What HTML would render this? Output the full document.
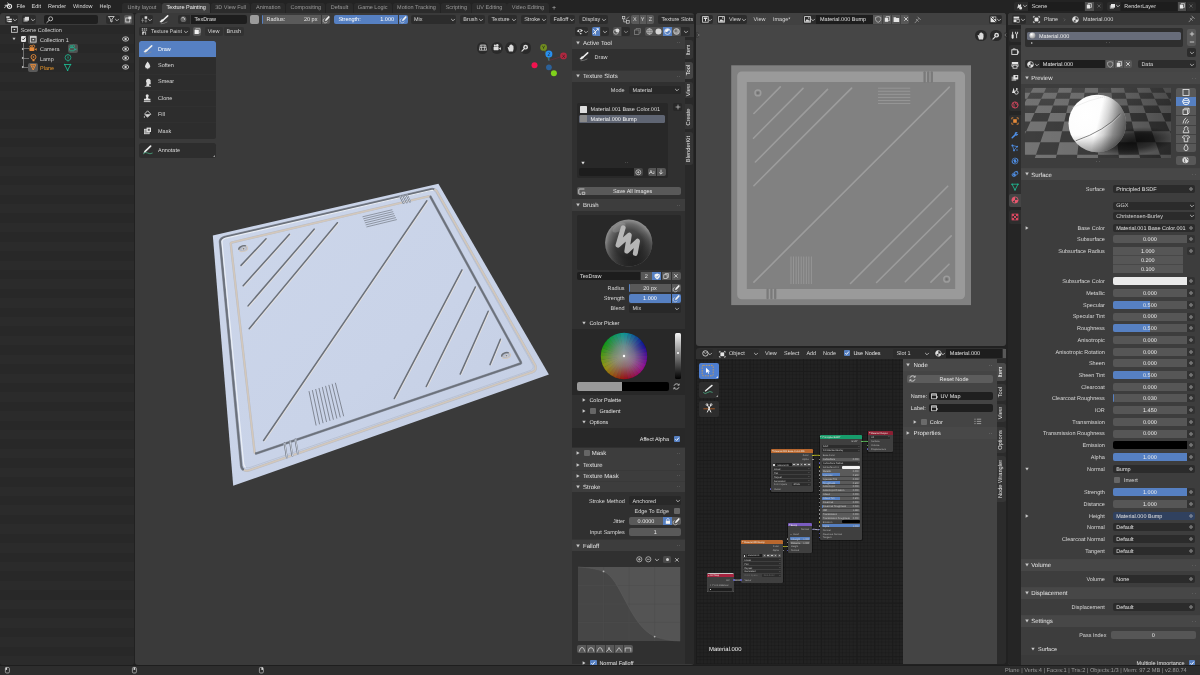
<!DOCTYPE html>
<html><head><meta charset="utf-8"><title>Blender</title>
<style>
html,body{margin:0;padding:0;}
body{width:1200px;height:675px;overflow:hidden;background:#212121;position:relative;font-family:"Liberation Sans",sans-serif;font-size:5.5px;color:#d4d4d4;}
div,svg{position:absolute;box-sizing:border-box;}
svg{overflow:visible;}
.t{white-space:nowrap;text-rendering:geometricPrecision;}
.area{overflow:hidden;}
.rot{transform:rotate(-90deg);transform-origin:0 0;white-space:nowrap;}
</style></head>
<body>
<div id="root" style="left:0;top:0;width:1200px;height:675px;will-change:transform;">
<!-- topbar -->
<div style="left:0px;top:0px;width:1200px;height:13px;background:#232323;"></div>
<svg style="left:4px;top:2.4px;" width="9" height="8" viewBox="0 0 9 8"><path d="M0.5 5.6 L4.4 2.5 M1.1 3.3 H4.6 M3.5 0.9 L5.4 2.5" fill="none" stroke="#e4e4e4" stroke-width="0.8" stroke-linecap="round"/>
    <circle cx="5.5" cy="4.3" r="2.1" fill="none" stroke="#e4e4e4" stroke-width="1.1"/><circle cx="5.5" cy="4.3" r="0.7" fill="#e4e4e4"/></svg>
<div class="t" style="top:3px;line-height:8px;font-size:5.5px;color:#dcdcdc;left:16.5px;">File</div>
<div class="t" style="top:3px;line-height:8px;font-size:5.5px;color:#dcdcdc;left:31.5px;">Edit</div>
<div class="t" style="top:3px;line-height:8px;font-size:5.5px;color:#dcdcdc;left:48px;">Render</div>
<div class="t" style="top:3px;line-height:8px;font-size:5.5px;color:#dcdcdc;left:73px;">Window</div>
<div class="t" style="top:3px;line-height:8px;font-size:5.5px;color:#dcdcdc;left:99.5px;">Help</div>
<div style="left:122.4px;top:3px;width:39.2px;height:10px;background:#2b2b2b;border-radius:2.5px 2.5px 0 0;"></div>
<div class="t" style="top:4px;line-height:8px;font-size:5.5px;color:#9a9a9a;left:122.4px;width:39.2px;text-align:center;">Unity layout</div>
<div style="left:162.4px;top:3px;width:47.6px;height:10px;background:#404040;border-radius:2.5px 2.5px 0 0;"></div>
<div class="t" style="top:4px;line-height:8px;font-size:5.5px;color:#f2f2f2;left:162.4px;width:47.6px;text-align:center;">Texture Painting</div>
<div style="left:211px;top:3px;width:39.4px;height:10px;background:#2b2b2b;border-radius:2.5px 2.5px 0 0;"></div>
<div class="t" style="top:4px;line-height:8px;font-size:5.5px;color:#9a9a9a;left:211px;width:39.4px;text-align:center;">3D View Full</div>
<div style="left:251.2px;top:3px;width:34.2px;height:10px;background:#2b2b2b;border-radius:2.5px 2.5px 0 0;"></div>
<div class="t" style="top:4px;line-height:8px;font-size:5.5px;color:#9a9a9a;left:251.2px;width:34.2px;text-align:center;">Animation</div>
<div style="left:286.2px;top:3px;width:39.2px;height:10px;background:#2b2b2b;border-radius:2.5px 2.5px 0 0;"></div>
<div class="t" style="top:4px;line-height:8px;font-size:5.5px;color:#9a9a9a;left:286.2px;width:39.2px;text-align:center;">Compositing</div>
<div style="left:326.2px;top:3px;width:26.6px;height:10px;background:#2b2b2b;border-radius:2.5px 2.5px 0 0;"></div>
<div class="t" style="top:4px;line-height:8px;font-size:5.5px;color:#9a9a9a;left:326.2px;width:26.6px;text-align:center;">Default</div>
<div style="left:353.6px;top:3px;width:38.2px;height:10px;background:#2b2b2b;border-radius:2.5px 2.5px 0 0;"></div>
<div class="t" style="top:4px;line-height:8px;font-size:5.5px;color:#9a9a9a;left:353.6px;width:38.2px;text-align:center;">Game Logic</div>
<div style="left:392.6px;top:3px;width:47.8px;height:10px;background:#2b2b2b;border-radius:2.5px 2.5px 0 0;"></div>
<div class="t" style="top:4px;line-height:8px;font-size:5.5px;color:#9a9a9a;left:392.6px;width:47.8px;text-align:center;">Motion Tracking</div>
<div style="left:441.2px;top:3px;width:30.2px;height:10px;background:#2b2b2b;border-radius:2.5px 2.5px 0 0;"></div>
<div class="t" style="top:4px;line-height:8px;font-size:5.5px;color:#9a9a9a;left:441.2px;width:30.2px;text-align:center;">Scripting</div>
<div style="left:472.2px;top:3px;width:34.4px;height:10px;background:#2b2b2b;border-radius:2.5px 2.5px 0 0;"></div>
<div class="t" style="top:4px;line-height:8px;font-size:5.5px;color:#9a9a9a;left:472.2px;width:34.4px;text-align:center;">UV Editing</div>
<div style="left:507.4px;top:3px;width:41.2px;height:10px;background:#2b2b2b;border-radius:2.5px 2.5px 0 0;"></div>
<div class="t" style="top:4px;line-height:8px;font-size:5.5px;color:#9a9a9a;left:507.4px;width:41.2px;text-align:center;">Video Editing</div>
<div class="t" style="top:5px;line-height:8px;font-size:7px;color:#b4b4b4;left:550px;width:8px;text-align:center;">+</div>
<div style="left:1014.4px;top:2px;width:13.4px;height:8.6px;background:#2c2c2c;border-radius:2px 0 0 2px;"></div><svg style="left:1022px;top:3.4px;" width="6" height="6" viewBox="0 0 6 6"><path d="M1.4 2.2 L3 3.8 L4.6 2.2" fill="none" stroke="#c8c8c8" stroke-width="0.8" stroke-linecap="round" stroke-linejoin="round"/></svg><div style="left:1028.4px;top:2px;width:56px;height:8.6px;background:#1d1d1d;"></div><div class="t" style="top:3px;line-height:8px;font-size:5.5px;color:#dcdcdc;left:1031.6px;">Scene</div><div style="left:1085px;top:2px;width:8.8px;height:8.6px;background:#505050;"></div><div style="left:1094.4px;top:2px;width:8.6px;height:8.6px;background:#2c2c2c;border-radius:0 2px 2px 0;"></div><svg style="left:1086.4px;top:3.4px;" width="6" height="6" viewBox="0 0 6 6"><path d="M2.2 1.6 V0.6 H5.4 V4.4 H4.2" fill="none" stroke="#e6e6e6" stroke-width="0.7"/><rect x="0.8" y="1.7" width="3.3" height="3.8" fill="#e6e6e6"/></svg><svg style="left:1095.8px;top:3.4px;" width="6" height="6" viewBox="0 0 6 6"><path d="M1.5 1.5 L4.5 4.5 M4.5 1.5 L1.5 4.5" stroke="#6a6a6a" stroke-width="0.8"/></svg>
<div style="left:1107px;top:2px;width:13.4px;height:8.6px;background:#2c2c2c;border-radius:2px 0 0 2px;"></div><svg style="left:1114.6px;top:3.4px;" width="6" height="6" viewBox="0 0 6 6"><path d="M1.4 2.2 L3 3.8 L4.6 2.2" fill="none" stroke="#c8c8c8" stroke-width="0.8" stroke-linecap="round" stroke-linejoin="round"/></svg><div style="left:1121px;top:2px;width:56px;height:8.6px;background:#1d1d1d;"></div><div class="t" style="top:3px;line-height:8px;font-size:5.5px;color:#dcdcdc;left:1124.2px;">RenderLayer</div><div style="left:1177.6px;top:2px;width:8.8px;height:8.6px;background:#505050;"></div><div style="left:1187px;top:2px;width:8.6px;height:8.6px;background:#2c2c2c;border-radius:0 2px 2px 0;"></div><svg style="left:1179px;top:3.4px;" width="6" height="6" viewBox="0 0 6 6"><path d="M2.2 1.6 V0.6 H5.4 V4.4 H4.2" fill="none" stroke="#e6e6e6" stroke-width="0.7"/><rect x="0.8" y="1.7" width="3.3" height="3.8" fill="#e6e6e6"/></svg><svg style="left:1188.4px;top:3.4px;" width="6" height="6" viewBox="0 0 6 6"><path d="M1.5 1.5 L4.5 4.5 M4.5 1.5 L1.5 4.5" stroke="#6a6a6a" stroke-width="0.8"/></svg>
<svg style="left:1016px;top:3.2px;" width="8" height="7" viewBox="0 0 8 7"><path d="M1.2 5.5 L2.4 1 L3.8 2.2 L5 0.8 L5.2 3.6 Z" fill="#e0e0e0"/><circle cx="4.6" cy="5" r="1.5" fill="#e0e0e0"/></svg>
<svg style="left:1109px;top:3.2px;" width="8" height="7" viewBox="0 0 8 7"><rect x="0.8" y="2.2" width="4" height="3.6" fill="#9a9a9a"/><rect x="2" y="1" width="4" height="3.6" fill="#e6e6e6"/></svg>
<!-- outliner -->
<div class="area" style="left:0px;top:13px;width:133.6px;height:651.5px;border-radius:3px;"><div style="left:0px;top:0px;width:133.6px;height:651.5px;background:#282828;"></div><div style="left:0px;top:21.42px;width:133.6px;height:9.42px;background:#2b2b2b;"></div><div style="left:0px;top:40.26px;width:133.6px;height:9.42px;background:#2b2b2b;"></div><div style="left:0px;top:59.1px;width:133.6px;height:9.42px;background:#2b2b2b;"></div><div style="left:0px;top:77.94px;width:133.6px;height:9.42px;background:#2b2b2b;"></div><div style="left:0px;top:96.78px;width:133.6px;height:9.42px;background:#2b2b2b;"></div><div style="left:0px;top:115.62px;width:133.6px;height:9.42px;background:#2b2b2b;"></div><div style="left:0px;top:134.46px;width:133.6px;height:9.42px;background:#2b2b2b;"></div><div style="left:0px;top:153.3px;width:133.6px;height:9.42px;background:#2b2b2b;"></div><div style="left:0px;top:172.14px;width:133.6px;height:9.42px;background:#2b2b2b;"></div><div style="left:0px;top:190.98px;width:133.6px;height:9.42px;background:#2b2b2b;"></div><div style="left:0px;top:209.82px;width:133.6px;height:9.42px;background:#2b2b2b;"></div><div style="left:0px;top:228.66px;width:133.6px;height:9.42px;background:#2b2b2b;"></div><div style="left:0px;top:247.5px;width:133.6px;height:9.42px;background:#2b2b2b;"></div><div style="left:0px;top:266.34px;width:133.6px;height:9.42px;background:#2b2b2b;"></div><div style="left:0px;top:285.18px;width:133.6px;height:9.42px;background:#2b2b2b;"></div><div style="left:0px;top:304.02px;width:133.6px;height:9.42px;background:#2b2b2b;"></div><div style="left:0px;top:322.86px;width:133.6px;height:9.42px;background:#2b2b2b;"></div><div style="left:0px;top:341.7px;width:133.6px;height:9.42px;background:#2b2b2b;"></div><div style="left:0px;top:360.54px;width:133.6px;height:9.42px;background:#2b2b2b;"></div><div style="left:0px;top:379.38px;width:133.6px;height:9.42px;background:#2b2b2b;"></div><div style="left:0px;top:398.22px;width:133.6px;height:9.42px;background:#2b2b2b;"></div><div style="left:0px;top:417.06px;width:133.6px;height:9.42px;background:#2b2b2b;"></div><div style="left:0px;top:435.9px;width:133.6px;height:9.42px;background:#2b2b2b;"></div><div style="left:0px;top:454.74px;width:133.6px;height:9.42px;background:#2b2b2b;"></div><div style="left:0px;top:473.58px;width:133.6px;height:9.42px;background:#2b2b2b;"></div><div style="left:0px;top:492.42px;width:133.6px;height:9.42px;background:#2b2b2b;"></div><div style="left:0px;top:511.26px;width:133.6px;height:9.42px;background:#2b2b2b;"></div><div style="left:0px;top:530.1px;width:133.6px;height:9.42px;background:#2b2b2b;"></div><div style="left:0px;top:548.94px;width:133.6px;height:9.42px;background:#2b2b2b;"></div><div style="left:0px;top:567.78px;width:133.6px;height:9.42px;background:#2b2b2b;"></div><div style="left:0px;top:586.62px;width:133.6px;height:9.42px;background:#2b2b2b;"></div><div style="left:0px;top:605.46px;width:133.6px;height:9.42px;background:#2b2b2b;"></div><div style="left:0px;top:624.3px;width:133.6px;height:9.42px;background:#2b2b2b;"></div><div style="left:0px;top:643.14px;width:133.6px;height:9.42px;background:#2b2b2b;"></div><div style="left:0px;top:0px;width:133.6px;height:12px;background:#3b3b3b;"></div></div>
<div style="left:4.5px;top:15px;width:13.5px;height:8.6px;background:#2c2c2c;border-radius:2px;"></div>
<svg style="left:5.6px;top:16.2px;" width="8" height="7" viewBox="0 0 8 7"><rect x="0.3" y="0.4" width="3.4" height="1.5" fill="#e0e0e0"/><rect x="2.2" y="2.7" width="3.6" height="1.4" fill="#e0e0e0"/><rect x="2.2" y="4.8" width="3.6" height="1.4" fill="#e0e0e0"/><path d="M1.2 1.9 V5.5 H2.2 M1.2 3.4 H2.2" stroke="#e0e0e0" stroke-width="0.6" fill="none"/></svg>
<svg style="left:12.4px;top:16.6px;" width="6" height="6" viewBox="0 0 6 6"><path d="M1.4 2.2 L3 3.8 L4.6 2.2" fill="none" stroke="#c8c8c8" stroke-width="0.8" stroke-linecap="round" stroke-linejoin="round"/></svg>
<div style="left:21.9px;top:15px;width:13.7px;height:8.6px;background:#2c2c2c;border-radius:2px;"></div>
<svg style="left:23.2px;top:16.2px;" width="8" height="7" viewBox="0 0 8 7"><rect x="0.5" y="2" width="4.2" height="3.8" fill="#8c8c8c"/><rect x="1.8" y="0.8" width="4.2" height="3.8" fill="#d8d8d8"/></svg>
<svg style="left:30px;top:16.6px;" width="6" height="6" viewBox="0 0 6 6"><path d="M1.4 2.2 L3 3.8 L4.6 2.2" fill="none" stroke="#c8c8c8" stroke-width="0.8" stroke-linecap="round" stroke-linejoin="round"/></svg>
<div style="left:44px;top:15px;width:53.6px;height:8.6px;background:#1f1f1f;border-radius:2px;"></div>
<svg style="left:46px;top:16px;" width="8" height="7" viewBox="0 0 8 7"><circle cx="4.6" cy="2.8" r="2" fill="none" stroke="#d8d8d8" stroke-width="0.8"/><path d="M3.2 4.3 L0.8 6.6" stroke="#d8d8d8" stroke-width="0.9" stroke-linecap="round"/></svg>
<div style="left:106px;top:15px;width:14px;height:8.6px;background:#2c2c2c;border-radius:2px;"></div>
<svg style="left:107.6px;top:16.4px;" width="8" height="7" viewBox="0 0 8 7"><path d="M0.4 0.5 H6.2 L4 3.2 V6 L2.6 5.4 V3.2 Z" fill="none" stroke="#e0e0e0" stroke-width="0.8" stroke-linejoin="round"/></svg>
<svg style="left:114.2px;top:16.6px;" width="6" height="6" viewBox="0 0 6 6"><path d="M1.4 2.2 L3 3.8 L4.6 2.2" fill="none" stroke="#c8c8c8" stroke-width="0.8" stroke-linecap="round" stroke-linejoin="round"/></svg>
<div style="left:123.6px;top:15px;width:8.6px;height:8.6px;background:#5a5a5a;border-radius:2px;"></div>
<svg style="left:124.6px;top:16px;" width="7" height="7" viewBox="0 0 7 7"><rect x="0.8" y="2" width="4" height="4" fill="none" stroke="#e6e6e6" stroke-width="0.8"/><rect x="3.4" y="0.5" width="2.8" height="2.6" fill="#e6e6e6"/></svg>
<svg style="left:11px;top:26.11px;" width="7" height="7" viewBox="0 0 7 7"><rect x="0.5" y="1.3" width="5.8" height="5" fill="none" stroke="#d8d8d8" stroke-width="0.8"/><path d="M0 0.6 H6.8" stroke="#d8d8d8" stroke-width="0.9"/><rect x="2.6" y="3" width="1.6" height="1.2" fill="#d8d8d8"/></svg>
<div class="t" style="top:27px;line-height:8px;font-size:5.5px;color:#d0d0d0;left:20.6px;">Scene Collection</div>
<svg style="left:11px;top:36.13px;" width="6" height="6" viewBox="0 0 6 6"><path d="M1.5 1.8 L4.5 1.8 L3 4.35 Z" fill="#c8c8c8"/></svg>
<div style="left:21px;top:36.33px;width:5.4px;height:5.4px;background:#e0e0e0;border-radius:1px;"></div>
<svg style="left:21px;top:36.33px;" width="5.4" height="5.4" viewBox="0 0 5.4 5.4"><path d="M1.2 2.8 L2.3 3.9 L4.3 1.5" fill="none" stroke="#282828" stroke-width="0.9"/></svg>
<div style="left:28.4px;top:34.73px;width:9px;height:8.8px;background:#4a4a4a;border-radius:2px;"></div>
<svg style="left:29.6px;top:35.73px;" width="7" height="7" viewBox="0 0 7 7"><rect x="0.5" y="1.3" width="5.6" height="4.8" fill="none" stroke="#e0e0e0" stroke-width="0.8"/><path d="M0 0.6 H6.6" stroke="#e0e0e0" stroke-width="0.9"/><rect x="2.5" y="3" width="1.6" height="1.2" fill="#e0e0e0"/></svg>
<div class="t" style="top:37px;line-height:8px;font-size:5.5px;color:#d8d8d8;left:40px;">Collection 1</div>
<svg style="left:121.8px;top:36.13px;" width="7.2" height="6" viewBox="0 0 7.2 6"><ellipse cx="3.6" cy="3" rx="3.1" ry="2.15" fill="none" stroke="#d4d4d4" stroke-width="0.8"/><circle cx="3.6" cy="3" r="1.2" fill="#d4d4d4"/></svg>
<div style="left:23.4px;top:42.63px;width:0.6px;height:24.76px;background:#6e6e6e;"></div>
<div style="left:23.4px;top:48.25px;width:5.5px;height:0.6px;background:#6e6e6e;"></div>
<svg style="left:20.2px;top:45.55px;" width="6" height="6" viewBox="0 0 6 6"><path d="M1.96 1.7 L1.96 4.3 L4.17 3 Z" fill="#c0c0c0"/></svg>
<div style="left:23.4px;top:57.67px;width:5.5px;height:0.6px;background:#6e6e6e;"></div>
<svg style="left:20.2px;top:54.97px;" width="6" height="6" viewBox="0 0 6 6"><path d="M1.96 1.7 L1.96 4.3 L4.17 3 Z" fill="#c0c0c0"/></svg>
<div style="left:23.4px;top:67.09px;width:5.5px;height:0.6px;background:#6e6e6e;"></div>
<svg style="left:20.2px;top:64.39px;" width="6" height="6" viewBox="0 0 6 6"><path d="M1.96 1.7 L1.96 4.3 L4.17 3 Z" fill="#c0c0c0"/></svg>
<svg style="left:29px;top:45.35px;" width="9" height="7" viewBox="0 0 9 7"><rect x="0.4" y="2.6" width="5" height="3.4" rx="0.8" fill="#e58a3a"/><circle cx="1.9" cy="1.5" r="1.1" fill="none" stroke="#e58a3a" stroke-width="0.8"/><circle cx="4.4" cy="1.3" r="1.3" fill="none" stroke="#e58a3a" stroke-width="0.8"/><path d="M5.6 4.2 L7.6 3 V5.8 Z" fill="#e58a3a"/></svg>
<div class="t" style="top:46px;line-height:8px;font-size:5.5px;color:#d0d0d0;left:40px;">Camera</div>
<div style="left:68.4px;top:44.05px;width:9.8px;height:9px;background:#505050;border-radius:2px;"></div>
<svg style="left:69.4px;top:45.25px;" width="8" height="7" viewBox="0 0 8 7"><rect x="0.6" y="2.6" width="4.8" height="3.2" rx="0.8" fill="none" stroke="#1fb58f" stroke-width="0.8"/><circle cx="2" cy="1.4" r="1" fill="none" stroke="#1fb58f" stroke-width="0.7"/><circle cx="4.4" cy="1.2" r="1.2" fill="none" stroke="#1fb58f" stroke-width="0.7"/><path d="M5.6 4.2 L7.4 3.2 V5.4 Z" fill="#1fb58f"/></svg>
<svg style="left:121.8px;top:45.55px;" width="7.2" height="6" viewBox="0 0 7.2 6"><ellipse cx="3.6" cy="3" rx="3.1" ry="2.15" fill="none" stroke="#d4d4d4" stroke-width="0.8"/><circle cx="3.6" cy="3" r="1.2" fill="#d4d4d4"/></svg>
<svg style="left:29.6px;top:54.17px;" width="7" height="8" viewBox="0 0 7 8"><circle cx="3.5" cy="3" r="2.5" fill="none" stroke="#e58a3a" stroke-width="0.9"/><path d="M2.5 5.6 H4.5 V7.2 H2.5 Z" fill="#e58a3a"/><circle cx="3.5" cy="3" r="0.8" fill="#e58a3a"/></svg>
<div class="t" style="top:56px;line-height:8px;font-size:5.5px;color:#d0d0d0;left:40px;">Lamp</div>
<svg style="left:63.6px;top:53.97px;" width="8" height="8" viewBox="0 0 8 8"><circle cx="4" cy="3.6" r="2.9" fill="none" stroke="#1fb58f" stroke-width="0.8"/><path d="M4 2.4 V4.6 M4 6.5 V7.6 M4 0 V0.8" stroke="#1fb58f" stroke-width="0.8"/></svg>
<svg style="left:121.8px;top:54.97px;" width="7.2" height="6" viewBox="0 0 7.2 6"><ellipse cx="3.6" cy="3" rx="3.1" ry="2.15" fill="none" stroke="#d4d4d4" stroke-width="0.8"/><circle cx="3.6" cy="3" r="1.2" fill="#d4d4d4"/></svg>
<div style="left:28.4px;top:62.79px;width:9.2px;height:9.2px;background:#5a5a5a;border-radius:2px;"></div>
<svg style="left:29.8px;top:64.19px;" width="7" height="7" viewBox="0 0 7 7"><path d="M0.6 0.6 H5.8 L3.2 6 Z" fill="none" stroke="#e58a3a" stroke-width="1"/><path d="M2 1.6 H4.4 L3.2 4 Z" fill="#e58a3a"/></svg>
<div class="t" style="top:65px;line-height:8px;font-size:5.5px;color:#e8962a;left:40px;">Plane</div>
<svg style="left:64px;top:64.19px;" width="8" height="7" viewBox="0 0 8 7"><path d="M0.6 0.5 H6.6 L3.6 6.4 Z" fill="none" stroke="#1fb58f" stroke-width="0.9"/><circle cx="0.6" cy="0.5" r="0.7" fill="#1fb58f"/><circle cx="6.6" cy="0.5" r="0.7" fill="#1fb58f"/><circle cx="3.6" cy="6.4" r="0.7" fill="#1fb58f"/></svg>
<svg style="left:121.8px;top:64.39px;" width="7.2" height="6" viewBox="0 0 7.2 6"><ellipse cx="3.6" cy="3" rx="3.1" ry="2.15" fill="none" stroke="#d4d4d4" stroke-width="0.8"/><circle cx="3.6" cy="3" r="1.2" fill="#d4d4d4"/></svg>
<!-- view3d -->
<div style="left:135.2px;top:13px;width:559px;height:651.5px;background:#3a3a3a;border-radius:3px;"></div>
<svg style="left:0px;top:0px;" width="1200" height="675" viewBox="0 0 1200 675"><defs><linearGradient id="pg" x1="0" y1="0" x2="1" y2="1"><stop offset="0" stop-color="#ccd6ea"/><stop offset="0.55" stop-color="#c9d3e8"/><stop offset="1" stop-color="#c3cde2"/></linearGradient></defs><path d="M212.8 235.4 L438.4 183.7 L548.9 374.6 L233.2 485.7 Z" fill="url(#pg)"/><path d="M243.87 470 L242.57 468.92 L241.69 467.46 L241.27 465.71 L220.09 241.71 L220.18 240.78 L220.61 239.83 L221.35 238.94 L222.34 238.16 L223.53 237.53 L224.82 237.12 L431.08 189.41 L432.19 189.26 L433.33 189.3 L434.43 189.55" fill="none" stroke="#8d93a0" stroke-width="2.8" stroke-linejoin="round"/><path d="M243.87 470 L242.57 468.92 L241.69 467.46 L241.27 465.71 L220.09 241.71 L220.18 240.78 L220.61 239.83 L221.35 238.94 L222.34 238.16 L223.53 237.53 L224.82 237.12 L431.08 189.41 L432.19 189.26 L433.33 189.3 L434.43 189.55" fill="none" stroke="#6b717b" stroke-width="1.7" stroke-linejoin="round"/><path d="M434.43 189.55 L435.4 189.97 L436.19 190.55 L436.74 191.24 L534.97 364.79 L535.55 366.21 L535.74 367.66 L535.51 369.05 L534.87 370.28 L533.88 371.26 L532.59 371.93 L249.2 470.32 L247.3 470.72 L245.48 470.62 L243.87 470" fill="none" stroke="#b9bcc4" stroke-width="2.6" stroke-linejoin="round"/><path d="M434.43 189.55 L435.4 189.97 L436.19 190.55 L436.74 191.24 L534.97 364.79 L535.55 366.21 L535.74 367.66 L535.51 369.05 L534.87 370.28 L533.88 371.26 L532.59 371.93 L249.2 470.32 L247.3 470.72 L245.48 470.62 L243.87 470" fill="none" stroke="#d3c8bc" stroke-width="1.6" stroke-linejoin="round"/><path d="M245.77 467.2 L244.74 466.34 L244.03 465.18 L243.69 463.79 L221.92 241.81 L221.99 241.07 L222.33 240.31 L222.92 239.59 L223.72 238.96 L224.67 238.46 L225.7 238.13 L431 190.52 L431.9 190.4 L432.81 190.44 L433.69 190.63" fill="none" stroke="#edf1f8" stroke-width="1.2" opacity="0.95"/><path d="M433.69 190.63 L434.47 190.97 L435.1 191.44 L435.54 191.99 L532.66 364.64 L533.13 365.78 L533.27 366.94 L533.08 368.05 L532.57 369.03 L531.77 369.81 L530.74 370.34 L250.02 467.45 L248.51 467.77 L247.06 467.69 L245.77 467.2" fill="none" stroke="#aab2c2" stroke-width="0.7" opacity="0.7"/><path d="M255.18 453.34 L254.66 452.52 L230.71 243.48 L230.95 242.92 L231.65 242.55 L429.22 196.18 L429.9 196.21" fill="none" stroke="#b9bcc4" stroke-width="2.4"/><path d="M255.18 453.34 L254.66 452.52 L230.71 243.48 L230.95 242.92 L231.65 242.55 L429.22 196.18 L429.9 196.21" fill="none" stroke="#d3c8bc" stroke-width="1.6"/><path d="M429.9 196.21 L430.36 196.56 L520.83 362.17 L520.92 363.01 L520.33 363.57 L256.23 453.41 L255.18 453.34" fill="none" stroke="#8d93a0" stroke-width="2.6"/><path d="M429.9 196.21 L430.36 196.56 L520.83 362.17 L520.92 363.01 L520.33 363.57 L256.23 453.41 L255.18 453.34" fill="none" stroke="#6b717b" stroke-width="1.6"/><path d="M241.79 266.1 L266.82 239.43" stroke="#e6e1dd" stroke-width="1.15" stroke-linecap="round"/><path d="M241.02 265.38 L266.05 238.71" stroke="#6b717b" stroke-width="1.5" stroke-linecap="round"/><path d="M243.95 286.4 L290.24 234.98" stroke="#e6e1dd" stroke-width="1.15" stroke-linecap="round"/><path d="M243.17 285.7 L289.46 234.27" stroke="#6b717b" stroke-width="1.5" stroke-linecap="round"/><path d="M248.87 306.56 L314.92 229.83" stroke="#e6e1dd" stroke-width="1.15" stroke-linecap="round"/><path d="M248.07 305.88 L314.13 229.15" stroke="#6b717b" stroke-width="1.5" stroke-linecap="round"/><path d="M249.99 329.37 L338.17 223.36" stroke="#e6e1dd" stroke-width="1.15" stroke-linecap="round"/><path d="M249.19 328.7 L337.37 222.69" stroke="#6b717b" stroke-width="1.5" stroke-linecap="round"/><path d="M264.46 441.07 L427.74 201.37" stroke="#e6e1dd" stroke-width="1.15" stroke-linecap="round"/><path d="M263.6 440.48 L426.87 200.78" stroke="#6b717b" stroke-width="1.5" stroke-linecap="round"/><path d="M395.18 399.07 L462.91 270.39" stroke="#e6e1dd" stroke-width="1.15" stroke-linecap="round"/><path d="M394.25 398.58 L461.98 269.9" stroke="#6b717b" stroke-width="1.5" stroke-linecap="round"/><path d="M427.17 386.98 L476.38 287.37" stroke="#e6e1dd" stroke-width="1.15" stroke-linecap="round"/><path d="M426.23 386.51 L475.44 286.91" stroke="#6b717b" stroke-width="1.5" stroke-linecap="round"/><path d="M461.15 374.52 L489.17 311.71" stroke="#e6e1dd" stroke-width="1.15" stroke-linecap="round"/><path d="M460.2 374.09 L488.21 311.29" stroke="#6b717b" stroke-width="1.5" stroke-linecap="round"/><path d="M490.96 365.02 L501.42 339.63" stroke="#e6e1dd" stroke-width="1.15" stroke-linecap="round"/><path d="M489.99 364.62 L500.44 339.23" stroke="#6b717b" stroke-width="1.5" stroke-linecap="round"/><path d="M362.5 216.8 L392.37 209.71" stroke="#7a808b" stroke-width="0.75"/><path d="M363.27 218.8 L393.25 211.66" stroke="#7a808b" stroke-width="0.75"/><path d="M364.05 220.82 L394.13 213.61" stroke="#7a808b" stroke-width="0.75"/><path d="M364.84 222.85 L395.03 215.58" stroke="#7a808b" stroke-width="0.75"/><path d="M365.63 224.9 L395.93 217.57" stroke="#7a808b" stroke-width="0.75"/><path d="M366.43 226.96 L396.84 219.58" stroke="#7a808b" stroke-width="0.75"/><path d="M309.01 391.15 L316.11 425.54" stroke="#747a85" stroke-width="0.85"/><path d="M312.35 390.09 L319.6 424.37" stroke="#747a85" stroke-width="0.85"/><path d="M315.66 389.03 L323.07 423.2" stroke="#747a85" stroke-width="0.85"/><path d="M318.97 387.98 L326.54 422.03" stroke="#747a85" stroke-width="0.85"/><path d="M322.27 386.93 L329.99 420.87" stroke="#747a85" stroke-width="0.85"/><path d="M325.56 385.89 L333.43 419.72" stroke="#747a85" stroke-width="0.85"/><path d="M328.83 384.85 L336.86 418.56" stroke="#747a85" stroke-width="0.85"/><path d="M332.1 383.81 L340.28 417.41" stroke="#747a85" stroke-width="0.85"/><path d="M335.35 382.77 L343.68 416.27" stroke="#747a85" stroke-width="0.85"/><path d="M400.39 196.48 L403.6 203.13" stroke="#c9d3e8" stroke-width="2.3" stroke-linecap="round"/><path d="M400.39 196.48 L403.6 203.13" stroke="#6b717b" stroke-width="1.9" stroke-linecap="round"/><path d="M400.59 196.68 L403.8 203.33" stroke="#d5dcea" stroke-width="0.9" stroke-linecap="round"/><path d="M403.55 195.75 L406.8 202.37" stroke="#c9d3e8" stroke-width="2.3" stroke-linecap="round"/><path d="M403.55 195.75 L406.8 202.37" stroke="#6b717b" stroke-width="1.9" stroke-linecap="round"/><path d="M403.75 195.95 L407 202.57" stroke="#d5dcea" stroke-width="0.9" stroke-linecap="round"/><path d="M406.71 195.02 L410 201.62" stroke="#c9d3e8" stroke-width="2.3" stroke-linecap="round"/><path d="M406.71 195.02 L410 201.62" stroke="#6b717b" stroke-width="1.9" stroke-linecap="round"/><path d="M406.91 195.22 L410.2 201.82" stroke="#d5dcea" stroke-width="0.9" stroke-linecap="round"/><path d="M284.57 443.22 L286.81 457.46" stroke="#c9d3e8" stroke-width="2.3" stroke-linecap="round"/><path d="M284.57 443.22 L286.81 457.46" stroke="#6b717b" stroke-width="1.9" stroke-linecap="round"/><path d="M284.77 443.42 L287.01 457.66" stroke="#d5dcea" stroke-width="0.9" stroke-linecap="round"/><path d="M289.98 441.38 L292.33 455.55" stroke="#c9d3e8" stroke-width="2.3" stroke-linecap="round"/><path d="M289.98 441.38 L292.33 455.55" stroke="#6b717b" stroke-width="1.9" stroke-linecap="round"/><path d="M290.18 441.58 L292.53 455.75" stroke="#d5dcea" stroke-width="0.9" stroke-linecap="round"/><path d="M295.37 439.55 L297.81 453.64" stroke="#c9d3e8" stroke-width="2.3" stroke-linecap="round"/><path d="M295.37 439.55 L297.81 453.64" stroke="#6b717b" stroke-width="1.9" stroke-linecap="round"/><path d="M295.57 439.75 L298.01 453.84" stroke="#d5dcea" stroke-width="0.9" stroke-linecap="round"/><g transform="rotate(-14 243.26 248.64)"><ellipse cx="243.26" cy="248.64" rx="4.5" ry="2.8" fill="#b2bacb" stroke="#d3c8bc" stroke-width="1"/><path d="M238.76 248.64 A4.5 2.8 0 0 1 246.46 246.64" fill="none" stroke="#6b717b" stroke-width="1.4"/><ellipse cx="243.56 " cy="248.84" rx="2" ry="1.3" fill="#d9d4d0"/><ellipse cx="243.56" cy="248.84" rx="0.9" ry="0.7" fill="#7a7f88"/></g><g transform="rotate(-14 506.15 355.57)"><ellipse cx="506.15" cy="355.57" rx="4.5" ry="2.8" fill="#b2bacb" stroke="#d3c8bc" stroke-width="1"/><path d="M501.65 355.57 A4.5 2.8 0 0 1 509.35 353.57" fill="none" stroke="#6b717b" stroke-width="1.4"/><ellipse cx="506.45 " cy="355.77" rx="2" ry="1.3" fill="#d9d4d0"/><ellipse cx="506.45" cy="355.77" rx="0.9" ry="0.7" fill="#7a7f88"/></g></svg>
<div style="left:139.6px;top:15px;width:13.2px;height:8.6px;background:#2c2c2c;border-radius:2px;"></div>
<svg style="left:141px;top:16px;" width="8" height="7" viewBox="0 0 8 7"><rect x="3.6" y="0.3" width="2.6" height="2.5" fill="#dcdcdc"/><path d="M1.6 2 V6.6 M0.2 4.3 H3.2 M4.9 3.2 V6.6 M3.6 5.1 H6.2" stroke="#9c9c9c" stroke-width="0.65" fill="none"/></svg>
<svg style="left:147.2px;top:16.6px;" width="6" height="6" viewBox="0 0 6 6"><path d="M1.4 2.2 L3 3.8 L4.6 2.2" fill="none" stroke="#c8c8c8" stroke-width="0.8" stroke-linecap="round" stroke-linejoin="round"/></svg>
<svg style="left:158.6px;top:14.6px;" width="10" height="9" viewBox="0 0 10 9"><path d="M4.2 5 L8.7 0.8" stroke="#ececec" stroke-width="1.6" stroke-linecap="round"/><path d="M0.5 6.9 L3.1 4 L4.9 5.7 L2.4 7.6 Z" fill="#ececec"/><path d="M1.6 8.8 Q5 8.7 8.4 6.9" stroke="#8e8e8e" stroke-width="0.6" fill="none"/></svg>
<div style="left:177.6px;top:15px;width:12.8px;height:8.6px;background:#2c2c2c;border-radius:2px 0 0 2px;"></div>
<svg style="left:180.4px;top:16px;" width="7" height="7" viewBox="0 0 7 7"><circle cx="3.4" cy="3.2" r="2.9" fill="#646464"/><path d="M1.6 2.2 Q2.8 0.9 4 1.9 T4.4 3.8" stroke="#c4c4c4" stroke-width="1" fill="none"/></svg>
<div style="left:191px;top:15px;width:55.6px;height:8.6px;background:#1d1d1d;border-radius:0 2px 2px 0;"></div>
<div class="t" style="top:16px;line-height:8px;font-size:5.5px;color:#e0e0e0;left:194.6px;">TexDraw</div>
<div style="left:250px;top:15px;width:9.2px;height:8.6px;background:#9b9b9b;border-radius:2px;"></div>
<div style="left:262.4px;top:15px;width:58.6px;height:8.6px;background:#5a5a5a;border-radius:2px 0 0 2px;"></div>
<div style="left:262.4px;top:15px;width:1px;height:8.6px;background:#5680c2;border-radius:2px 0 0 2px;"></div>
<div class="t" style="top:16px;line-height:8px;font-size:5.5px;color:#e8e8e8;left:266.6px;">Radius:</div>
<div class="t" style="top:16px;line-height:8px;font-size:5.5px;color:#e8e8e8;right:882.6px;text-align:right;">20 px</div>
<div style="left:321.8px;top:15px;width:8.6px;height:8.6px;background:#5a5a5a;border-radius:0 2px 2px 0;"></div>
<svg style="left:322.6px;top:15.8px;" width="7" height="7" viewBox="0 0 7 7"><path d="M3.4 3.6 L5.8 1" stroke="#f0f0f0" stroke-width="1.7" stroke-linecap="round"/><path d="M2 5 L2.4 3.4 L3.7 4.6 Z" fill="#f0f0f0"/><path d="M4.4 5.6 A2.3 2.3 0 1 1 1.6 2.4" fill="none" stroke="#f0f0f0" stroke-width="0.6" opacity="0.85"/></svg>
<div style="left:334px;top:15px;width:64px;height:8.6px;background:#5680c2;border-radius:2px 0 0 2px;"></div>
<div class="t" style="top:16px;line-height:8px;font-size:5.5px;color:#ffffff;left:338.4px;">Strength:</div>
<div class="t" style="top:16px;line-height:8px;font-size:5.5px;color:#ffffff;right:806px;text-align:right;">1.000</div>
<div style="left:398.8px;top:15px;width:8.8px;height:8.6px;background:#5680c2;border-radius:0 2px 2px 0;"></div>
<svg style="left:399.8px;top:15.8px;" width="7" height="7" viewBox="0 0 7 7"><path d="M3.4 3.6 L5.8 1" stroke="#f0f0f0" stroke-width="1.7" stroke-linecap="round"/><path d="M2 5 L2.4 3.4 L3.7 4.6 Z" fill="#f0f0f0"/><path d="M4.4 5.6 A2.3 2.3 0 1 1 1.6 2.4" fill="none" stroke="#f0f0f0" stroke-width="0.6" opacity="0.85"/></svg>
<div style="left:410.8px;top:15px;width:45.4px;height:8.6px;background:#2c2c2c;border-radius:2px;"></div><div class="t" style="top:16px;line-height:8px;font-size:5.5px;color:#d8d8d8;left:414px;">Mix</div><svg style="left:449.6px;top:16.6px;" width="6" height="6" viewBox="0 0 6 6"><path d="M1.4 2.2 L3 3.8 L4.6 2.2" fill="none" stroke="#c8c8c8" stroke-width="0.8" stroke-linecap="round" stroke-linejoin="round"/></svg>
<div style="left:460px;top:15px;width:24.6px;height:8.6px;background:#2c2c2c;border-radius:2px;"></div><div class="t" style="top:16px;line-height:8px;font-size:5.5px;color:#d8d8d8;left:463.2px;">Brush</div><svg style="left:478px;top:16.6px;" width="6" height="6" viewBox="0 0 6 6"><path d="M1.4 2.2 L3 3.8 L4.6 2.2" fill="none" stroke="#c8c8c8" stroke-width="0.8" stroke-linecap="round" stroke-linejoin="round"/></svg>
<div style="left:488.4px;top:15px;width:28.8px;height:8.6px;background:#2c2c2c;border-radius:2px;"></div><div class="t" style="top:16px;line-height:8px;font-size:5.5px;color:#d8d8d8;left:491.6px;">Texture</div><svg style="left:510.6px;top:16.6px;" width="6" height="6" viewBox="0 0 6 6"><path d="M1.4 2.2 L3 3.8 L4.6 2.2" fill="none" stroke="#c8c8c8" stroke-width="0.8" stroke-linecap="round" stroke-linejoin="round"/></svg>
<div style="left:521px;top:15px;width:26.2px;height:8.6px;background:#2c2c2c;border-radius:2px;"></div><div class="t" style="top:16px;line-height:8px;font-size:5.5px;color:#d8d8d8;left:524.2px;">Stroke</div><svg style="left:540.6px;top:16.6px;" width="6" height="6" viewBox="0 0 6 6"><path d="M1.4 2.2 L3 3.8 L4.6 2.2" fill="none" stroke="#c8c8c8" stroke-width="0.8" stroke-linecap="round" stroke-linejoin="round"/></svg>
<div style="left:550.2px;top:15px;width:25.2px;height:8.6px;background:#2c2c2c;border-radius:2px;"></div><div class="t" style="top:16px;line-height:8px;font-size:5.5px;color:#d8d8d8;left:553.4px;">Falloff</div><svg style="left:568.8px;top:16.6px;" width="6" height="6" viewBox="0 0 6 6"><path d="M1.4 2.2 L3 3.8 L4.6 2.2" fill="none" stroke="#c8c8c8" stroke-width="0.8" stroke-linecap="round" stroke-linejoin="round"/></svg>
<div style="left:579px;top:15px;width:28.6px;height:8.6px;background:#2c2c2c;border-radius:2px;"></div><div class="t" style="top:16px;line-height:8px;font-size:5.5px;color:#d8d8d8;left:582.2px;">Display</div><svg style="left:601px;top:16.6px;" width="6" height="6" viewBox="0 0 6 6"><path d="M1.4 2.2 L3 3.8 L4.6 2.2" fill="none" stroke="#c8c8c8" stroke-width="0.8" stroke-linecap="round" stroke-linejoin="round"/></svg>
<svg style="left:621.6px;top:15.6px;" width="9" height="8" viewBox="0 0 9 8"><rect x="0.6" y="0.6" width="2.2" height="2.2" fill="none" stroke="#d0d0d0" stroke-width="0.7"/><rect x="4.6" y="4.6" width="2.6" height="2.6" fill="none" stroke="#d0d0d0" stroke-width="0.7"/><path d="M1.7 3 V5.9 H4.4" fill="none" stroke="#d0d0d0" stroke-width="0.7"/><path d="M7 0.6 L3.6 4" stroke="#d0d0d0" stroke-width="0.6"/></svg>
<div style="left:631px;top:15px;width:23.2px;height:8.6px;background:#5a5a5a;border-radius:2px;"></div>
<div style="left:638.6px;top:15px;width:0.5px;height:8.6px;background:#444;"></div>
<div style="left:646.4px;top:15px;width:0.5px;height:8.6px;background:#444;"></div>
<div class="t" style="top:16px;line-height:8px;font-size:5.5px;color:#dcdcdc;left:630.9px;width:8px;text-align:center;">X</div>
<div class="t" style="top:16px;line-height:8px;font-size:5.5px;color:#dcdcdc;left:638.65px;width:8px;text-align:center;">Y</div>
<div class="t" style="top:16px;line-height:8px;font-size:5.5px;color:#dcdcdc;left:646.4px;width:8px;text-align:center;">Z</div>
<div style="left:658px;top:15px;width:36.2px;height:8.6px;background:#2c2c2c;border-radius:2px 0 0 2px;"></div>
<div class="t" style="top:16px;line-height:8px;font-size:5.5px;color:#d8d8d8;left:661.4px;">Texture Slots</div>
<div style="left:138.8px;top:27px;width:50.8px;height:8.6px;background:#2c2c2c;border-radius:2px;"></div>
<svg style="left:140.8px;top:27.8px;" width="8" height="8" viewBox="0 0 8 8"><path d="M0.8 0.8 H6.6 M0.8 2.2 H6.6" stroke="#d8d8d8" stroke-width="0.9" stroke-dasharray="1.2 0.7"/><path d="M1.2 3.4 H3.6 V5 H2.6 V6.8 H1.2 Z" fill="#d8d8d8"/><path d="M4.6 3.4 V6.8" stroke="#d8d8d8" stroke-width="0.8"/></svg>
<div class="t" style="top:28px;line-height:8px;font-size:5.3px;color:#d8d8d8;left:151px;">Texture Paint</div>
<svg style="left:183.4px;top:28.6px;" width="6" height="6" viewBox="0 0 6 6"><path d="M1.4 2.2 L3 3.8 L4.6 2.2" fill="none" stroke="#c8c8c8" stroke-width="0.8" stroke-linecap="round" stroke-linejoin="round"/></svg>
<div style="left:193px;top:27px;width:8.4px;height:8.6px;background:#5a5a5a;border-radius:2px;"></div>
<svg style="left:194px;top:28px;" width="7" height="7" viewBox="0 0 7 7"><rect x="0.6" y="1.8" width="4.2" height="4.2" fill="#f0f0f0"/><path d="M1.8 1.8 V0.6 H6 V4.8 H4.8" fill="none" stroke="#c8c8c8" stroke-width="0.7"/></svg>
<div style="left:204.8px;top:27px;width:17.8px;height:8.6px;background:#323232;border-radius:2px;"></div>
<div class="t" style="top:28px;line-height:8px;font-size:5.5px;color:#d8d8d8;left:203.7px;width:20px;text-align:center;">View</div>
<div style="left:223.6px;top:27px;width:20.4px;height:8.6px;background:#323232;border-radius:2px;"></div>
<div class="t" style="top:28px;line-height:8px;font-size:5.5px;color:#d8d8d8;left:222.8px;width:22px;text-align:center;">Brush</div>
<div style="left:574.6px;top:27px;width:13.6px;height:8.6px;background:#2c2c2c;border-radius:2px;"></div>
<svg style="left:575.6px;top:28px;" width="9" height="7" viewBox="0 0 9 7"><path d="M0.8 3.2 Q3.6 -0.4 7 2.6 Q4 5.4 0.8 3.2 Z" fill="#e0e0e0"/><circle cx="3.8" cy="2.8" r="1" fill="#2c2c2c"/><path d="M3 4.6 L5 6.8 L5.4 5.6 L6.6 5.4 Z" fill="#e0e0e0"/></svg>
<svg style="left:582.6px;top:28.6px;" width="6" height="6" viewBox="0 0 6 6"><path d="M1.4 2.2 L3 3.8 L4.6 2.2" fill="none" stroke="#c8c8c8" stroke-width="0.8" stroke-linecap="round" stroke-linejoin="round"/></svg>
<div style="left:591.6px;top:27px;width:8.4px;height:8.6px;background:#5680c2;border-radius:2px 0 0 2px;"></div>
<svg style="left:592.4px;top:28px;" width="7" height="7" viewBox="0 0 7 7"><path d="M1 6 L6 1 M1.2 1.4 L4 4 M3.4 6.4 L3.4 3.4" stroke="#f4f4f4" stroke-width="0.9"/><path d="M4.4 0.6 H6.4 V2.6" fill="none" stroke="#f4f4f4" stroke-width="0.8"/></svg>
<div style="left:600.6px;top:27px;width:8.8px;height:8.6px;background:#2c2c2c;border-radius:0 2px 2px 0;"></div>
<svg style="left:602px;top:28.6px;" width="6" height="6" viewBox="0 0 6 6"><path d="M1.4 2.2 L3 3.8 L4.6 2.2" fill="none" stroke="#c8c8c8" stroke-width="0.8" stroke-linecap="round" stroke-linejoin="round"/></svg>
<div style="left:612.6px;top:27px;width:8.8px;height:8.6px;background:#505050;border-radius:2px 0 0 2px;"></div>
<svg style="left:613.4px;top:28px;" width="7" height="7" viewBox="0 0 7 7"><circle cx="3" cy="3.8" r="2.4" fill="none" stroke="#c8c8c8" stroke-width="0.8"/><circle cx="4.4" cy="2.6" r="2" fill="#dcdcdc"/></svg>
<div style="left:622px;top:27px;width:8.4px;height:8.6px;background:#2c2c2c;border-radius:0 2px 2px 0;"></div>
<svg style="left:623.2px;top:28.6px;" width="6" height="6" viewBox="0 0 6 6"><path d="M1.4 2.2 L3 3.8 L4.6 2.2" fill="none" stroke="#9a9a9a" stroke-width="0.8" stroke-linecap="round" stroke-linejoin="round"/></svg>
<svg style="left:634.4px;top:28px;" width="8" height="7" viewBox="0 0 8 7"><rect x="0.6" y="2" width="4.4" height="4.4" fill="none" stroke="#8a8a8a" stroke-width="0.7"/><path d="M2 2 V0.6 H6.4 V5 H5" fill="none" stroke="#8a8a8a" stroke-width="0.7"/></svg>
<div style="left:645.2px;top:27px;width:35.6px;height:8.6px;background:#505050;border-radius:2px;"></div>
<div style="left:662.9px;top:27px;width:8.9px;height:8.6px;background:#5680c2;"></div>
<svg style="left:646.1px;top:27.8px;" width="7" height="7" viewBox="0 0 7 7"><circle cx="3.5" cy="3.5" r="2.8" fill="none" stroke="#d0d0d0" stroke-width="0.7"/><path d="M0.7 3.5 H6.3 M3.5 0.7 V6.3" stroke="#d0d0d0" stroke-width="0.5"/><ellipse cx="3.5" cy="3.5" rx="1.4" ry="2.8" fill="none" stroke="#d0d0d0" stroke-width="0.5"/></svg>
<svg style="left:655px;top:27.8px;" width="7" height="7" viewBox="0 0 7 7"><circle cx="3.5" cy="3.5" r="3" fill="#d6d6d6"/></svg>
<svg style="left:663.9px;top:27.8px;" width="7" height="7" viewBox="0 0 7 7"><circle cx="3.5" cy="3.5" r="2.9" fill="none" stroke="#f4f4f4" stroke-width="0.7"/><path d="M0.8 3.2 Q2.4 4.6 3.6 3.4 Q4.6 2 6 2.2 A2.9 2.9 0 0 0 0.8 3.2 Z" fill="#f4f4f4"/></svg>
<svg style="left:672.8px;top:27.8px;" width="7" height="7" viewBox="0 0 7 7"><circle cx="3.5" cy="3.5" r="2.9" fill="#9a9a9a" stroke="#d0d0d0" stroke-width="0.7"/><circle cx="2.8" cy="2.8" r="1.2" fill="#707070"/></svg>
<div style="left:681.4px;top:27px;width:9px;height:8.6px;background:#2c2c2c;border-radius:0 2px 2px 0;"></div>
<svg style="left:682.8px;top:28.6px;" width="6" height="6" viewBox="0 0 6 6"><path d="M1.4 2.2 L3 3.8 L4.6 2.2" fill="none" stroke="#c8c8c8" stroke-width="0.8" stroke-linecap="round" stroke-linejoin="round"/></svg>
<div style="left:138.8px;top:41.4px;width:77px;height:97.5px;background:#2d2d2d;border-radius:2.5px;"></div>
<div style="left:138.8px;top:41.4px;width:77px;height:15.85px;background:#5680c2;border-radius:2.5px 2.5px 0 0;"></div>
<div class="t" style="top:46px;line-height:8px;font-size:5.5px;color:#ffffff;left:158px;">Draw</div>
<div style="left:138.8px;top:57.4px;width:77px;height:0.5px;background:#303030;"></div>
<div class="t" style="top:62px;line-height:8px;font-size:5.5px;color:#d8d8d8;left:158px;">Soften</div>
<div style="left:138.8px;top:73.65px;width:77px;height:0.5px;background:#303030;"></div>
<div class="t" style="top:78px;line-height:8px;font-size:5.5px;color:#d8d8d8;left:158px;">Smear</div>
<div style="left:138.8px;top:89.9px;width:77px;height:0.5px;background:#303030;"></div>
<div class="t" style="top:95px;line-height:8px;font-size:5.5px;color:#d8d8d8;left:158px;">Clone</div>
<div style="left:138.8px;top:106.15px;width:77px;height:0.5px;background:#303030;"></div>
<div class="t" style="top:111px;line-height:8px;font-size:5.5px;color:#d8d8d8;left:158px;">Fill</div>
<div style="left:138.8px;top:122.4px;width:77px;height:0.5px;background:#303030;"></div>
<div class="t" style="top:128px;line-height:8px;font-size:5.5px;color:#d8d8d8;left:158px;">Mask</div>
<div style="left:138.8px;top:142.6px;width:77px;height:15px;background:#2d2d2d;border-radius:2.5px;"></div>
<div class="t" style="top:147px;line-height:8px;font-size:5.5px;color:#d8d8d8;left:158px;">Annotate</div>
<svg style="left:213px;top:154.6px;" width="2" height="2" viewBox="0 0 2 2"><path d="M2 0 V2 H0 Z" fill="#9a9a9a"/></svg>
<svg style="left:142.6px;top:44.6px;" width="10" height="9" viewBox="0 0 10 9"><path d="M4.2 5 L8.7 0.8" stroke="#ececec" stroke-width="1.6" stroke-linecap="round"/><path d="M0.5 6.9 L3.1 4 L4.9 5.7 L2.4 7.6 Z" fill="#ececec"/><path d="M1.6 8.8 Q5 8.7 8.4 6.9" stroke="#8e8e8e" stroke-width="0.6" fill="none"/></svg>
<svg style="left:143.8px;top:61.38px;" width="8" height="9" viewBox="0 0 8 9"><path d="M3.6 0.6 Q6.6 4.4 6.2 6 Q5.4 8.2 3.6 8.2 Q1.6 8.2 1 6 Q0.8 4.4 3.6 0.6 Z" fill="#e0e0e0"/><path d="M0.6 6.6 Q3.6 9.6 6.8 6.6" stroke="#2d2d2d" stroke-width="0.7" fill="none"/></svg>
<svg style="left:143.6px;top:77.62px;" width="8" height="9" viewBox="0 0 8 9"><path d="M2.2 8 L2.6 5 Q1.4 3.4 2.4 1.8 Q3.8 0.2 5.8 1.2 Q7 2 6.6 4 L6.8 6.2 L5.4 6 L5.2 8 Z" fill="#e0e0e0"/><path d="M0.8 8.4 H7" stroke="#e0e0e0" stroke-width="0.7"/></svg>
<svg style="left:143.4px;top:94.08px;" width="9" height="9" viewBox="0 0 9 9"><circle cx="4.2" cy="1.8" r="1.5" fill="#e0e0e0"/><path d="M3.4 3 H5 L5.6 4.8 H7.4 V6.4 H1 V4.8 H2.8 Z" fill="#e0e0e0"/><path d="M0.8 7.6 H7.6" stroke="#e0e0e0" stroke-width="0.9"/></svg>
<svg style="left:143px;top:110.12px;" width="9" height="9" viewBox="0 0 9 9"><path d="M4.6 0.8 L7.8 4.2 L4.4 7.2 L1.6 4 Z" fill="none" stroke="#e0e0e0" stroke-width="0.8"/><path d="M2 4.2 H7.6 L4.4 7 Z" fill="#e0e0e0"/><path d="M1.4 5.6 Q0.2 7.4 1.2 8 Q2.4 8 1.4 5.6 Z" fill="#e0e0e0"/></svg>
<svg style="left:143.6px;top:126.98px;" width="8" height="8" viewBox="0 0 8 8"><rect x="0.6" y="2.2" width="4.6" height="4.6" fill="#9a9a9a" stroke="#e0e0e0" stroke-width="0.7"/><rect x="2.6" y="0.6" width="4.4" height="4.4" fill="#e0e0e0"/><rect x="3.8" y="1.8" width="2" height="2" fill="#5a5a5a"/></svg>
<svg style="left:141.6px;top:144.6px;" width="12" height="10" viewBox="0 0 12 10"><path d="M3.4 6.2 L8.6 1.2" stroke="#ececec" stroke-width="1.7" stroke-linecap="round"/><path d="M1.6 8 L2.4 5.8 L3.8 7.2 Z" fill="#ececec"/><path d="M1 9 Q3.4 6.4 5.6 8 T10.6 8" stroke="#4fbf8f" stroke-width="0.7" fill="none"/></svg>
<div style="left:476.7px;top:42px;width:11.8px;height:11.8px;background:#2a2a2a;border-radius:6px;"></div>
<div style="left:490.9px;top:42px;width:11.8px;height:11.8px;background:#2a2a2a;border-radius:6px;"></div>
<div style="left:505.2px;top:42px;width:11.8px;height:11.8px;background:#2a2a2a;border-radius:6px;"></div>
<div style="left:519.5px;top:42px;width:11.8px;height:11.8px;background:#2a2a2a;border-radius:6px;"></div>
<svg style="left:478.6px;top:44.3px;" width="8" height="7" viewBox="0 0 8 7"><path d="M1.4 1 H6.6 L7.6 6.2 H0.4 Z M0.9 3.4 H7.1 M2.9 1 L2.4 6.2 M5.1 1 L5.6 6.2" fill="none" stroke="#dcdcdc" stroke-width="0.7"/></svg>
<svg style="left:492.6px;top:44.3px;" width="9" height="7" viewBox="0 0 9 7"><rect x="0.6" y="2.8" width="5" height="3.4" rx="0.6" fill="#dcdcdc"/><circle cx="1.9" cy="1.6" r="1.1" fill="#dcdcdc"/><circle cx="4.3" cy="1.4" r="1.3" fill="#dcdcdc"/><path d="M5.8 4.4 L7.8 3.2 V6 Z" fill="#dcdcdc"/></svg>
<svg style="left:507.1px;top:43.9px;" width="8" height="8" viewBox="0 0 8 8"><path d="M2 7.4 L1 4.6 L0.6 3 L1.6 3 L2.2 4.2 V1.4 H3 V0.8 H3.9 V0.6 H4.8 V1 H5.6 V1.8 H6.4 L6.6 4.8 L6 7.4 Z" fill="#dcdcdc"/></svg>
<svg style="left:521.4px;top:43.9px;" width="8" height="8" viewBox="0 0 8 8"><circle cx="4.6" cy="3.2" r="2.4" fill="#dcdcdc"/><path d="M3 5 L0.9 7.2" stroke="#dcdcdc" stroke-width="1.1" stroke-linecap="round"/><path d="M3.4 3.2 H5.8 M4.6 2 V4.4" stroke="#2a2a2a" stroke-width="0.7"/></svg>
<svg style="left:0px;top:0px;" width="1200" height="675" viewBox="0 0 1200 675"><path d="M548.9 60.6 L563.5 55.9" stroke="#8a2c3c" stroke-width="0.6" opacity="0.75"/><path d="M548.9 60.6 L543.6 47.4" stroke="#5f7a1c" stroke-width="0.7"/><path d="M548.9 60.6 L548.9 53.9" stroke="#2a8fe8" stroke-width="0.7"/><circle cx="543.6" cy="47.4" r="3.4" fill="#708c1f"/><circle cx="563.5" cy="55.9" r="3.4" fill="#b02840"/><circle cx="548.9" cy="67.3" r="2.9" fill="#2c6199"/><circle cx="534.5" cy="65.2" r="3" fill="#f2134f"/><circle cx="553.9" cy="73.3" r="3" fill="#7fd11b"/><circle cx="548.9" cy="53.9" r="3.5" fill="#2890f0"/></svg>
<div class="t" style="top:45px;line-height:8px;font-size:4.8px;color:#1a1a1a;left:539.6px;width:8px;text-align:center;">Y</div>
<div class="t" style="top:54px;line-height:8px;font-size:4.8px;color:#1a1a1a;left:559.5px;width:8px;text-align:center;">X</div>
<div class="t" style="top:52px;line-height:8px;font-size:4.8px;color:#1a1a1a;left:544.9px;width:8px;text-align:center;">Z</div>
<!-- sidebar3d -->
<div style="left:572.3px;top:37.2px;width:112.9px;height:627.3px;background:#303030;"></div>
<div style="left:685.2px;top:37.2px;width:9px;height:627.3px;background:#292929;"></div>
<div style="left:685.2px;top:40px;width:8.1px;height:19.4px;background:#353535;border-radius:0 2.5px 2.5px 0;"></div>
<div class="t" style="left:689.05px;top:49.7px;width:0;height:0;"><div class="t" style="left:-30px;top:-4px;width:60px;line-height:8px;text-align:center;font-size:5.7px;transform:rotate(-90deg);color:#e4e4e4;">Item</div></div>
<div style="left:685.2px;top:62px;width:8.1px;height:16.8px;background:#454545;border-radius:0 2.5px 2.5px 0;"></div>
<div class="t" style="left:689.05px;top:70.4px;width:0;height:0;"><div class="t" style="left:-30px;top:-4px;width:60px;line-height:8px;text-align:center;font-size:5.7px;transform:rotate(-90deg);color:#ffffff;">Tool</div></div>
<div style="left:685.2px;top:82px;width:8.1px;height:16.2px;background:#353535;border-radius:0 2.5px 2.5px 0;"></div>
<div class="t" style="left:689.05px;top:90.1px;width:0;height:0;"><div class="t" style="left:-30px;top:-4px;width:60px;line-height:8px;text-align:center;font-size:5.7px;transform:rotate(-90deg);color:#e4e4e4;">View</div></div>
<div style="left:685.2px;top:104.4px;width:8.1px;height:24.2px;background:#353535;border-radius:0 2.5px 2.5px 0;"></div>
<div class="t" style="left:689.05px;top:116.5px;width:0;height:0;"><div class="t" style="left:-30px;top:-4px;width:60px;line-height:8px;text-align:center;font-size:5.7px;transform:rotate(-90deg);color:#e4e4e4;">Create</div></div>
<div style="left:685.2px;top:132px;width:8.1px;height:33px;background:#353535;border-radius:0 2.5px 2.5px 0;"></div>
<div class="t" style="left:689.05px;top:148.5px;width:0;height:0;"><div class="t" style="left:-30px;top:-4px;width:60px;line-height:8px;text-align:center;font-size:5.7px;transform:rotate(-90deg);color:#e4e4e4;">BlenderKit</div></div>
<div style="left:572.3px;top:37.2px;width:112.9px;height:11.5px;background:#3d3d3d;"></div><svg style="left:575.4px;top:39.95px;" width="6" height="6" viewBox="0 0 6 6"><path d="M1.2 1.56 L4.8 1.56 L3 4.62 Z" fill="#c8c8c8"/></svg><div class="t" style="top:40px;line-height:8px;font-size:6px;color:#e4e4e4;left:583px;">Active Tool</div><div style="left:676.8px;top:42.45px;width:1.2px;height:1px;background:#555555;"></div><div style="left:679.2px;top:42.45px;width:1.2px;height:1px;background:#555555;"></div>
<svg style="left:579.4px;top:51.6px;" width="10" height="9" viewBox="0 0 10 9"><path d="M4.2 5 L8.7 0.8" stroke="#ececec" stroke-width="1.6" stroke-linecap="round"/><path d="M0.5 6.9 L3.1 4 L4.9 5.7 L2.4 7.6 Z" fill="#ececec"/><path d="M1.6 8.8 Q5 8.7 8.4 6.9" stroke="#8e8e8e" stroke-width="0.6" fill="none"/></svg>
<div class="t" style="top:54px;line-height:8px;font-size:5.5px;color:#d8d8d8;left:594.6px;">Draw</div>
<div style="left:572.3px;top:69.7px;width:112.9px;height:1px;background:#353535;"></div>
<div style="left:572.3px;top:70.7px;width:112.9px;height:11.1px;background:#3d3d3d;"></div><svg style="left:575.4px;top:73.25px;" width="6" height="6" viewBox="0 0 6 6"><path d="M1.2 1.56 L4.8 1.56 L3 4.62 Z" fill="#c8c8c8"/></svg><div class="t" style="top:73px;line-height:8px;font-size:6px;color:#e4e4e4;left:583px;">Texture Slots</div><div style="left:676.8px;top:75.75px;width:1.2px;height:1px;background:#555555;"></div><div style="left:679.2px;top:75.75px;width:1.2px;height:1px;background:#555555;"></div>
<div class="t" style="top:87px;line-height:8px;font-size:5.5px;color:#d8d8d8;right:575.4px;text-align:right;">Mode</div>
<div style="left:629.2px;top:85.8px;width:51.6px;height:8.4px;background:#282828;border-radius:2px;"></div>
<div class="t" style="top:87px;line-height:8px;font-size:5.5px;color:#d8d8d8;left:632.6px;">Material</div>
<svg style="left:674.2px;top:87.2px;" width="6" height="6" viewBox="0 0 6 6"><path d="M1.4 2.2 L3 3.8 L4.6 2.2" fill="none" stroke="#c8c8c8" stroke-width="0.8" stroke-linecap="round" stroke-linejoin="round"/></svg>
<div style="left:577px;top:103px;width:90.6px;height:74.6px;background:#282828;border-radius:2px;"></div>
<div style="left:579.6px;top:106px;width:7.4px;height:7.4px;background:#dedede;border-radius:0.6px;"></div>
<div class="t" style="top:106px;line-height:8px;font-size:5.5px;color:#dcdcdc;left:590.6px;">Material.001 Base Color.001</div>
<div style="left:578.8px;top:114.6px;width:86.6px;height:8.4px;background:#5f6573;border-radius:1.5px;"></div>
<div style="left:579.6px;top:115.2px;width:7.4px;height:7.2px;background:#8a8a8a;border-radius:0.6px;"></div>
<div class="t" style="top:116px;line-height:8px;font-size:5.5px;color:#f4f4f4;left:590.6px;">Material.000 Bump</div>
<svg style="left:579.8px;top:160px;" width="6" height="6" viewBox="0 0 6 6"><path d="M1.3 1.64 L4.7 1.64 L3 4.53 Z" fill="#e0e0e0"/></svg>
<div style="left:624.6px;top:162.3px;width:1.2px;height:1px;background:#484848;"></div><div style="left:627px;top:162.3px;width:1.2px;height:1px;background:#484848;"></div>
<div style="left:579px;top:168px;width:54.6px;height:8px;background:#1d1d1d;border-radius:2px 0 0 2px;"></div>
<div style="left:634.2px;top:168px;width:9px;height:8px;background:#444444;border-radius:0 2px 2px 0;"></div>
<svg style="left:635.4px;top:168.8px;" width="7" height="7" viewBox="0 0 7 7"><circle cx="3.3" cy="3.3" r="2.5" fill="none" stroke="#d8d8d8" stroke-width="0.7"/><path d="M2 3.3 H4.6 M3.3 2 V4.6" stroke="#d8d8d8" stroke-width="0.7"/></svg>
<div style="left:647.6px;top:168px;width:8.8px;height:8px;background:#555555;border-radius:2px 0 0 2px;"></div>
<div class="t" style="top:169px;line-height:8px;font-size:5.6px;color:#e6e6e6;left:647px;width:10px;text-align:center;">A<span style="font-size:4.2px">z</span></div>
<div style="left:657px;top:168px;width:8.6px;height:8px;background:#555555;border-radius:0 2px 2px 0;"></div>
<svg style="left:658.4px;top:169px;" width="6" height="6" viewBox="0 0 6 6"><path d="M3 0.6 V5 M1.2 3.4 L3 5.2 L4.8 3.4" fill="none" stroke="#e0e0e0" stroke-width="0.8"/></svg>
<div style="left:673.4px;top:103px;width:8.4px;height:8px;background:#282828;border-radius:2px;"></div>
<svg style="left:674.6px;top:104px;" width="6" height="6" viewBox="0 0 6 6"><path d="M3 0.6 V5.4 M0.6 3 H5.4" stroke="#dcdcdc" stroke-width="0.65"/></svg>
<div style="left:576.6px;top:186.8px;width:104.4px;height:8.4px;background:#595959;border-radius:2px;"></div>
<svg style="left:578.4px;top:187.6px;" width="8" height="7" viewBox="0 0 8 7"><path d="M6.4 1 H1.6 Q0.8 1 0.8 1.8 V5.4 Q0.8 6.2 1.6 6.2 H3" fill="none" stroke="#e0e0e0" stroke-width="0.8"/><path d="M4.2 4.2 H6.8 V6.4 H4.2 Z" fill="none" stroke="#e0e0e0" stroke-width="0.7"/></svg>
<div class="t" style="top:188px;line-height:8px;font-size:5.5px;color:#e6e6e6;left:592.6px;width:80px;text-align:center;">Save All Images</div>
<div style="left:572.3px;top:198.6px;width:112.9px;height:0.8px;background:#353535;"></div>
<div style="left:572.3px;top:199.4px;width:112.9px;height:11.4px;background:#3d3d3d;"></div><svg style="left:575.4px;top:202.1px;" width="6" height="6" viewBox="0 0 6 6"><path d="M1.2 1.56 L4.8 1.56 L3 4.62 Z" fill="#c8c8c8"/></svg><div class="t" style="top:202px;line-height:8px;font-size:6px;color:#e4e4e4;left:583px;">Brush</div><div style="left:676.8px;top:204.6px;width:1.2px;height:1px;background:#555555;"></div><div style="left:679.2px;top:204.6px;width:1.2px;height:1px;background:#555555;"></div>
<div style="left:576.6px;top:214.8px;width:104.2px;height:55.4px;background:#282828;border-radius:2px;"></div>
<svg style="left:600px;top:214px;" width="58" height="58" viewBox="0 0 58 58"><defs><radialGradient id="bs" cx="0.5" cy="0.52" r="0.5"><stop offset="0" stop-color="#3c3c3c"/><stop offset="0.6" stop-color="#484848"/><stop offset="0.85" stop-color="#6a6a6a"/><stop offset="1" stop-color="#8c8c8c"/></radialGradient>
    <linearGradient id="bs2" x1="0.3" y1="0" x2="0.6" y2="1"><stop offset="0.35" stop-color="#000" stop-opacity="0"/><stop offset="1" stop-color="#000" stop-opacity="0.75"/></linearGradient></defs>
    <circle cx="28.7" cy="29" r="23.6" fill="url(#bs)"/>
    <circle cx="28.7" cy="29" r="23.6" fill="url(#bs2)"/>
    <path d="M23.2 13.8 L18 31.2 L29.3 21.1 L26.8 37.2 L37.5 27.2 L35.3 39.4" fill="none" stroke="#c4c4c4" stroke-width="4.9" stroke-linecap="round" stroke-linejoin="round" opacity="0.9"/>
    <ellipse cx="19" cy="13.5" rx="7.5" ry="3.6" fill="#b0b0b0" opacity="0.3" transform="rotate(-32 19 13.5)"/></svg>
<div style="left:576.6px;top:271.6px;width:63.4px;height:8.6px;background:#1d1d1d;border-radius:2px 0 0 2px;"></div>
<div class="t" style="top:273px;line-height:8px;font-size:5.5px;color:#e0e0e0;left:580px;">TexDraw</div>
<div style="left:640.6px;top:271.6px;width:11.2px;height:8.6px;background:#585858;"></div>
<div class="t" style="top:273px;line-height:8px;font-size:5.5px;color:#e6e6e6;left:641.2px;width:10px;text-align:center;">2</div>
<div style="left:652.4px;top:271.6px;width:8.8px;height:8.6px;background:#5680c2;"></div>
<svg style="left:653.6px;top:272.6px;" width="7" height="7" viewBox="0 0 7 7"><path d="M3.2 0.6 L5.8 1.4 V3.6 Q5.6 5.4 3.2 6.4 Q0.8 5.4 0.6 3.6 V1.4 Z" fill="#f4f4f4"/><path d="M2 3.4 L3 4.4 L4.6 2.4" fill="none" stroke="#5680c2" stroke-width="0.8"/></svg>
<div style="left:661.8px;top:271.6px;width:9.2px;height:8.6px;background:#585858;"></div>
<svg style="left:663.4px;top:272.8px;" width="6" height="6" viewBox="0 0 6 6"><path d="M2.2 1.6 V0.6 H5.4 V4.4 H4.2" fill="none" stroke="#e0e0e0" stroke-width="0.7"/><rect x="0.8" y="1.8" width="3.3" height="3.7" fill="none" stroke="#e0e0e0" stroke-width="0.7"/></svg>
<div style="left:671.6px;top:271.6px;width:9.4px;height:8.6px;background:#585858;border-radius:0 2px 2px 0;"></div>
<svg style="left:673.4px;top:273px;" width="6" height="6" viewBox="0 0 6 6"><path d="M1.2 1.2 L4.6 4.6 M4.6 1.2 L1.2 4.6" stroke="#e0e0e0" stroke-width="0.8"/></svg>
<div class="t" style="top:285px;line-height:8px;font-size:5.5px;color:#d8d8d8;right:575.4px;text-align:right;">Radius</div>
<div style="left:629.2px;top:284px;width:41.8px;height:8.4px;background:#595959;border-radius:2px 0 0 2px;"></div>
<div style="left:629.2px;top:284px;width:1px;height:8.4px;background:#5680c2;border-radius:2px 0 0 2px;"></div>
<div class="t" style="top:285px;line-height:8px;font-size:5.5px;color:#e8e8e8;left:630px;width:40px;text-align:center;">20 px</div>
<div style="left:671.6px;top:284px;width:9.4px;height:8.4px;background:#595959;border-radius:0 2px 2px 0;"></div>
<svg style="left:673px;top:284.8px;" width="7" height="7" viewBox="0 0 7 7"><path d="M3.4 3.6 L5.8 1" stroke="#f0f0f0" stroke-width="1.7" stroke-linecap="round"/><path d="M2 5 L2.4 3.4 L3.7 4.6 Z" fill="#f0f0f0"/><path d="M4.4 5.6 A2.3 2.3 0 1 1 1.6 2.4" fill="none" stroke="#f0f0f0" stroke-width="0.6" opacity="0.85"/></svg>
<div class="t" style="top:295px;line-height:8px;font-size:5.5px;color:#d8d8d8;right:575.4px;text-align:right;">Strength</div>
<div style="left:629.2px;top:294.2px;width:41.8px;height:8.4px;background:#5680c2;border-radius:2px 0 0 2px;"></div>
<div class="t" style="top:295px;line-height:8px;font-size:5.5px;color:#ffffff;left:630px;width:40px;text-align:center;">1.000</div>
<div style="left:671.6px;top:294.2px;width:9.4px;height:8.4px;background:#5680c2;border-radius:0 2px 2px 0;"></div>
<svg style="left:673px;top:295px;" width="7" height="7" viewBox="0 0 7 7"><path d="M3.4 3.6 L5.8 1" stroke="#f0f0f0" stroke-width="1.7" stroke-linecap="round"/><path d="M2 5 L2.4 3.4 L3.7 4.6 Z" fill="#f0f0f0"/><path d="M4.4 5.6 A2.3 2.3 0 1 1 1.6 2.4" fill="none" stroke="#f0f0f0" stroke-width="0.6" opacity="0.85"/></svg>
<div class="t" style="top:305px;line-height:8px;font-size:5.5px;color:#d8d8d8;right:575.4px;text-align:right;">Blend</div>
<div style="left:629.2px;top:304.4px;width:51.8px;height:8.4px;background:#282828;border-radius:2px;"></div>
<div class="t" style="top:305px;line-height:8px;font-size:5.5px;color:#d8d8d8;left:632.6px;">Mix</div>
<svg style="left:674.4px;top:305.8px;" width="6" height="6" viewBox="0 0 6 6"><path d="M1.4 2.2 L3 3.8 L4.6 2.2" fill="none" stroke="#c8c8c8" stroke-width="0.8" stroke-linecap="round" stroke-linejoin="round"/></svg>
<svg style="left:581.4px;top:319.8px;" width="6" height="6" viewBox="0 0 6 6"><path d="M1.3 1.64 L4.7 1.64 L3 4.53 Z" fill="#c8c8c8"/></svg>
<div class="t" style="top:320px;line-height:8px;font-size:5.5px;color:#e0e0e0;left:589.4px;">Color Picker</div>
<div style="left:572.3px;top:328.6px;width:112.9px;height:66px;background:#282828;"></div>
<svg style="left:600px;top:332px;" width="48" height="48" viewBox="0 0 48 48"><defs><radialGradient id="cw"><stop offset="0" stop-color="#9a9a9a" stop-opacity="1"/><stop offset="0.45" stop-color="#8c8c8c" stop-opacity="0.75"/><stop offset="1" stop-color="#808080" stop-opacity="0.1"/></radialGradient><clipPath id="cwc"><circle cx="24" cy="24" r="23.2"/></clipPath></defs><g clip-path="url(#cwc)"><path d="M24 24 L24 64 L16.5 63.29 Z" fill="hsl(5,100%,30%)"/><path d="M24 24 L17.05 63.39 L9.8 61.39 Z" fill="hsl(15,100%,30%)"/><path d="M24 24 L10.32 61.59 L3.52 58.36 Z" fill="hsl(25,100%,30%)"/><path d="M24 24 L4 58.64 L-2.14 54.28 Z" fill="hsl(35,100%,30%)"/><path d="M24 24 L-1.71 54.64 L-7 49.28 Z" fill="hsl(45,100%,30%)"/><path d="M24 24 L-6.64 49.71 L-10.92 43.51 Z" fill="hsl(55,100%,30%)"/><path d="M24 24 L-10.64 44 L-13.78 37.15 Z" fill="hsl(65,100%,30%)"/><path d="M24 24 L-13.59 37.68 L-15.49 30.4 Z" fill="hsl(75,100%,30%)"/><path d="M24 24 L-15.39 30.95 L-16 23.44 Z" fill="hsl(85,100%,30%)"/><path d="M24 24 L-16 24 L-15.29 16.5 Z" fill="hsl(95,100%,30%)"/><path d="M24 24 L-15.39 17.05 L-13.39 9.8 Z" fill="hsl(105,100%,30%)"/><path d="M24 24 L-13.59 10.32 L-10.36 3.52 Z" fill="hsl(115,100%,30%)"/><path d="M24 24 L-10.64 4 L-6.28 -2.14 Z" fill="hsl(125,100%,30%)"/><path d="M24 24 L-6.64 -1.71 L-1.28 -7 Z" fill="hsl(135,100%,30%)"/><path d="M24 24 L-1.71 -6.64 L4.49 -10.92 Z" fill="hsl(145,100%,30%)"/><path d="M24 24 L4 -10.64 L10.85 -13.78 Z" fill="hsl(155,100%,30%)"/><path d="M24 24 L10.32 -13.59 L17.6 -15.49 Z" fill="hsl(165,100%,30%)"/><path d="M24 24 L17.05 -15.39 L24.56 -16 Z" fill="hsl(175,100%,30%)"/><path d="M24 24 L24 -16 L31.5 -15.29 Z" fill="hsl(185,100%,30%)"/><path d="M24 24 L30.95 -15.39 L38.2 -13.39 Z" fill="hsl(195,100%,30%)"/><path d="M24 24 L37.68 -13.59 L44.48 -10.36 Z" fill="hsl(205,100%,30%)"/><path d="M24 24 L44 -10.64 L50.14 -6.28 Z" fill="hsl(215,100%,30%)"/><path d="M24 24 L49.71 -6.64 L55 -1.28 Z" fill="hsl(225,100%,30%)"/><path d="M24 24 L54.64 -1.71 L58.92 4.49 Z" fill="hsl(235,100%,30%)"/><path d="M24 24 L58.64 4 L61.78 10.85 Z" fill="hsl(245,100%,30%)"/><path d="M24 24 L61.59 10.32 L63.49 17.6 Z" fill="hsl(255,100%,30%)"/><path d="M24 24 L63.39 17.05 L64 24.56 Z" fill="hsl(265,100%,30%)"/><path d="M24 24 L64 24 L63.29 31.5 Z" fill="hsl(275,100%,30%)"/><path d="M24 24 L63.39 30.95 L61.39 38.2 Z" fill="hsl(285,100%,30%)"/><path d="M24 24 L61.59 37.68 L58.36 44.48 Z" fill="hsl(295,100%,30%)"/><path d="M24 24 L58.64 44 L54.28 50.14 Z" fill="hsl(305,100%,30%)"/><path d="M24 24 L54.64 49.71 L49.28 55 Z" fill="hsl(315,100%,30%)"/><path d="M24 24 L49.71 54.64 L43.51 58.92 Z" fill="hsl(325,100%,30%)"/><path d="M24 24 L44 58.64 L37.15 61.78 Z" fill="hsl(335,100%,30%)"/><path d="M24 24 L37.68 61.59 L30.4 63.49 Z" fill="hsl(345,100%,30%)"/><path d="M24 24 L30.95 63.39 L23.44 64 Z" fill="hsl(355,100%,30%)"/><circle cx="24" cy="24" r="23.2" fill="url(#cw)"/></g><circle cx="24" cy="24" r="1.2" fill="#ffffff"/></svg>
<div style="left:675px;top:332.8px;width:5.8px;height:46.2px;border-radius:1.5px;background:linear-gradient(#f4f4f4,#000000);"></div>
<div style="left:676.9px;top:352.4px;width:2px;height:2px;background:#ffffff;border-radius:1px;"></div>
<div style="left:576.6px;top:381.8px;width:45.2px;height:8.8px;background:#9a9a9a;border-radius:2px 0 0 2px;"></div>
<div style="left:621.8px;top:381.8px;width:47px;height:8.8px;background:#000000;border-radius:0 2px 2px 0;"></div>
<svg style="left:673px;top:382.6px;" width="7" height="7" viewBox="0 0 7 7"><path d="M1 2.8 Q1.6 0.8 3.6 0.8 Q5 0.8 5.8 2 M6 4.2 Q5.4 6.2 3.4 6.2 Q2 6.2 1.2 5" fill="none" stroke="#d0d0d0" stroke-width="0.8"/><path d="M4.6 2.2 H6.2 V0.6 M2.4 4.8 H0.8 V6.4" fill="none" stroke="#d0d0d0" stroke-width="0.7"/></svg>
<svg style="left:581.4px;top:397.4px;" width="6" height="6" viewBox="0 0 6 6"><path d="M1.64 1.3 L1.64 4.7 L4.53 3 Z" fill="#c8c8c8"/></svg>
<div class="t" style="top:397px;line-height:8px;font-size:5.5px;color:#e0e0e0;left:589.4px;">Color Palette</div>
<svg style="left:581.4px;top:408.4px;" width="6" height="6" viewBox="0 0 6 6"><path d="M1.64 1.3 L1.64 4.7 L4.53 3 Z" fill="#c8c8c8"/></svg>
<div style="left:590.4px;top:408.4px;width:6px;height:6px;background:#666666;border-radius:1px;"></div>
<div class="t" style="top:408px;line-height:8px;font-size:5.5px;color:#e0e0e0;left:599.4px;">Gradient</div>
<svg style="left:581.4px;top:419.4px;" width="6" height="6" viewBox="0 0 6 6"><path d="M1.3 1.64 L4.7 1.64 L3 4.53 Z" fill="#c8c8c8"/></svg>
<div class="t" style="top:419px;line-height:8px;font-size:5.5px;color:#e0e0e0;left:589.4px;">Options</div>
<div style="left:572.3px;top:428.4px;width:112.9px;height:18.4px;background:#282828;"></div>
<div class="t" style="top:436px;line-height:8px;font-size:5.5px;color:#e0e0e0;right:531px;text-align:right;">Affect Alpha</div>
<div style="left:674px;top:435.6px;width:6.2px;height:6.2px;background:#5680c2;border-radius:1px;"></div>
<svg style="left:674px;top:435.6px;" width="6.2" height="6.2" viewBox="0 0 6.2 6.2"><path d="M1.4 3.2 L2.7 4.5 L4.9 1.7" fill="none" stroke="#ffffff" stroke-width="0.9"/></svg>
<div style="left:572.3px;top:447.6px;width:112.9px;height:44.4px;background:#393939;"></div>
<div style="left:572.3px;top:447.6px;width:112.9px;height:11px;background:#3d3d3d;"></div><svg style="left:575.4px;top:450.1px;" width="6" height="6" viewBox="0 0 6 6"><path d="M1.56 1.2 L1.56 4.8 L4.62 3 Z" fill="#c8c8c8"/></svg><div style="left:583.6px;top:450.1px;width:6px;height:6px;background:#666666;border-radius:1px;"></div><div class="t" style="top:450px;line-height:8px;font-size:6px;color:#e4e4e4;left:591.8px;">Mask</div><div style="left:676.8px;top:452.6px;width:1.2px;height:1px;background:#555555;"></div><div style="left:679.2px;top:452.6px;width:1.2px;height:1px;background:#555555;"></div>
<div style="left:572.3px;top:459.4px;width:112.9px;height:10.4px;background:#3d3d3d;"></div><svg style="left:575.4px;top:461.6px;" width="6" height="6" viewBox="0 0 6 6"><path d="M1.56 1.2 L1.56 4.8 L4.62 3 Z" fill="#c8c8c8"/></svg><div class="t" style="top:462px;line-height:8px;font-size:6px;color:#e4e4e4;left:583px;">Texture</div><div style="left:676.8px;top:464.1px;width:1.2px;height:1px;background:#555555;"></div><div style="left:679.2px;top:464.1px;width:1.2px;height:1px;background:#555555;"></div>
<div style="left:572.3px;top:470.6px;width:112.9px;height:10.2px;background:#3d3d3d;"></div><svg style="left:575.4px;top:472.7px;" width="6" height="6" viewBox="0 0 6 6"><path d="M1.56 1.2 L1.56 4.8 L4.62 3 Z" fill="#c8c8c8"/></svg><div class="t" style="top:473px;line-height:8px;font-size:6px;color:#e4e4e4;left:583px;">Texture Mask</div><div style="left:676.8px;top:475.2px;width:1.2px;height:1px;background:#555555;"></div><div style="left:679.2px;top:475.2px;width:1.2px;height:1px;background:#555555;"></div>
<div style="left:572.3px;top:481.6px;width:112.9px;height:10.4px;background:#3d3d3d;"></div><svg style="left:575.4px;top:483.8px;" width="6" height="6" viewBox="0 0 6 6"><path d="M1.2 1.56 L4.8 1.56 L3 4.62 Z" fill="#c8c8c8"/></svg><div class="t" style="top:484px;line-height:8px;font-size:6px;color:#e4e4e4;left:583px;">Stroke</div><div style="left:676.8px;top:486.3px;width:1.2px;height:1px;background:#555555;"></div><div style="left:679.2px;top:486.3px;width:1.2px;height:1px;background:#555555;"></div>
<div class="t" style="top:498px;line-height:8px;font-size:5.5px;color:#d8d8d8;right:575.2px;text-align:right;">Stroke Method</div>
<div style="left:629.2px;top:496.4px;width:52.2px;height:8.4px;background:#282828;border-radius:2px;"></div>
<div class="t" style="top:498px;line-height:8px;font-size:5.5px;color:#d8d8d8;left:632.6px;">Anchored</div>
<svg style="left:674.6px;top:497.8px;" width="6" height="6" viewBox="0 0 6 6"><path d="M1.4 2.2 L3 3.8 L4.6 2.2" fill="none" stroke="#c8c8c8" stroke-width="0.8" stroke-linecap="round" stroke-linejoin="round"/></svg>
<div class="t" style="top:508px;line-height:8px;font-size:5.5px;color:#d8d8d8;right:531px;text-align:right;">Edge To Edge</div>
<div style="left:674px;top:507.7px;width:6.2px;height:6.2px;background:#666666;border-radius:1px;"></div>
<div class="t" style="top:518px;line-height:8px;font-size:5.5px;color:#d8d8d8;right:575.2px;text-align:right;">Jitter</div>
<div style="left:629.2px;top:517px;width:33.4px;height:8.4px;background:#595959;border-radius:2px 0 0 2px;"></div>
<div class="t" style="top:518px;line-height:8px;font-size:5.5px;color:#e8e8e8;left:629px;width:34px;text-align:center;">0.0000</div>
<div style="left:663.2px;top:517px;width:8.4px;height:8.4px;background:#5680c2;"></div>
<svg style="left:664.6px;top:518px;" width="6" height="7" viewBox="0 0 6 7"><rect x="0.8" y="2.8" width="4.2" height="3" fill="#f4f4f4"/><path d="M1.6 2.8 V1.6 Q1.6 0.6 2.9 0.6 Q4.2 0.6 4.2 1.6 V2.8" fill="none" stroke="#f4f4f4" stroke-width="0.7"/></svg>
<div style="left:672.2px;top:517px;width:9.2px;height:8.4px;background:#595959;border-radius:0 2px 2px 0;"></div>
<svg style="left:673.4px;top:517.8px;" width="7" height="7" viewBox="0 0 7 7"><path d="M3.4 3.6 L5.8 1" stroke="#f0f0f0" stroke-width="1.7" stroke-linecap="round"/><path d="M2 5 L2.4 3.4 L3.7 4.6 Z" fill="#f0f0f0"/><path d="M4.4 5.6 A2.3 2.3 0 1 1 1.6 2.4" fill="none" stroke="#f0f0f0" stroke-width="0.6" opacity="0.85"/></svg>
<div class="t" style="top:529px;line-height:8px;font-size:5.5px;color:#d8d8d8;right:575.2px;text-align:right;">Input Samples</div>
<div style="left:629.2px;top:527.6px;width:52.2px;height:8.4px;background:#595959;border-radius:2px;"></div>
<div class="t" style="top:529px;line-height:8px;font-size:5.5px;color:#e8e8e8;left:645.3px;width:20px;text-align:center;">1</div>
<div style="left:572.3px;top:539.2px;width:112.9px;height:0.8px;background:#353535;"></div>
<div style="left:572.3px;top:540px;width:112.9px;height:11px;background:#3d3d3d;"></div><svg style="left:575.4px;top:542.5px;" width="6" height="6" viewBox="0 0 6 6"><path d="M1.2 1.56 L4.8 1.56 L3 4.62 Z" fill="#c8c8c8"/></svg><div class="t" style="top:543px;line-height:8px;font-size:6px;color:#e4e4e4;left:583px;">Falloff</div><div style="left:676.8px;top:545px;width:1.2px;height:1px;background:#555555;"></div><div style="left:679.2px;top:545px;width:1.2px;height:1px;background:#555555;"></div>
<svg style="left:635.6px;top:556.2px;" width="7" height="7" viewBox="0 0 7 7"><circle cx="3.3" cy="3.3" r="2.6" fill="none" stroke="#d0d0d0" stroke-width="0.7"/><path d="M2 3.3 H4.6 M3.3 2 V4.6" stroke="#d0d0d0" stroke-width="0.7"/></svg>
<svg style="left:645px;top:556.2px;" width="7" height="7" viewBox="0 0 7 7"><circle cx="3.3" cy="3.3" r="2.6" fill="none" stroke="#d0d0d0" stroke-width="0.7"/><path d="M2 3.3 H4.6" stroke="#d0d0d0" stroke-width="0.7"/></svg>
<svg style="left:654px;top:556.8px;" width="6" height="6" viewBox="0 0 6 6"><path d="M1.4 2.2 L3 3.8 L4.6 2.2" fill="none" stroke="#d0d0d0" stroke-width="0.8" stroke-linecap="round" stroke-linejoin="round"/></svg>
<div style="left:663.4px;top:556.4px;width:7.4px;height:7px;background:#4a4a4a;border-radius:1.5px;"></div>
<div style="left:665.6px;top:558.4px;width:3px;height:3px;background:#d0d0d0;border-radius:1.5px;"></div>
<svg style="left:673.8px;top:557px;" width="6" height="6" viewBox="0 0 6 6"><path d="M1.2 1.2 L4.6 4.6 M4.6 1.2 L1.2 4.6" stroke="#d0d0d0" stroke-width="0.8"/></svg>
<svg style="left:578px;top:567px;" width="102.2" height="74" viewBox="0 0 102.2 74"><rect x="0" y="0" width="102.2" height="74" fill="#545454"/><path d="M0 0 C10.22 0.37 19.42 2.22 25.55 4.44 C42.92 11.1 51.1 57.72 76.65 69.56 C85.85 72.89 95.05 74 102.2 74 L0 74 Z" fill="#464646"/><path d="M25.55 0 V74 M0 18.5 H102.2" stroke="#4c4c4c" stroke-width="0.5"/><path d="M51.1 0 V74 M0 37 H102.2" stroke="#4c4c4c" stroke-width="0.5"/><path d="M76.65 0 V74 M0 55.5 H102.2" stroke="#4c4c4c" stroke-width="0.5"/><path d="M0 0 C10.22 0.37 19.42 2.22 25.55 4.44 C42.92 11.1 51.1 57.72 76.65 69.56 C85.85 72.89 95.05 74 102.2 74" fill="none" stroke="#5e5e5e" stroke-width="0.5"/><circle cx="25.55" cy="4.44" r="0.9" fill="#b0b0b0"/><circle cx="76.65" cy="69.56" r="0.9" fill="#b0b0b0"/></svg>
<div style="left:577px;top:645.2px;width:55.6px;height:7.4px;background:#585858;border-radius:2px;"></div>
<svg style="left:577.6px;top:645.6px;" width="8" height="7" viewBox="0 0 8 7"><path d="M1.2 5.6 Q2 1.4 4 1.4 Q6 1.4 6.8 5.6" fill="none" stroke="#e0e0e0" stroke-width="0.7"/></svg>
<div style="left:586.02px;top:645.2px;width:0.5px;height:7.4px;background:#3c3c3c;"></div>
<svg style="left:586.87px;top:645.6px;" width="8" height="7" viewBox="0 0 8 7"><path d="M1.2 5.6 Q1.2 1.6 4 1.6 Q6.8 1.6 6.8 5.6" fill="none" stroke="#e0e0e0" stroke-width="0.7"/></svg>
<div style="left:595.29px;top:645.2px;width:0.5px;height:7.4px;background:#3c3c3c;"></div>
<svg style="left:596.14px;top:645.6px;" width="8" height="7" viewBox="0 0 8 7"><path d="M1.2 5.6 Q2.4 1.2 4 1.6 Q5.6 1.2 6.8 5.6" fill="none" stroke="#e0e0e0" stroke-width="0.7"/></svg>
<div style="left:604.56px;top:645.2px;width:0.5px;height:7.4px;background:#3c3c3c;"></div>
<svg style="left:605.41px;top:645.6px;" width="8" height="7" viewBox="0 0 8 7"><path d="M1.2 5.6 Q3.6 4.6 4 1.4 Q4.4 4.6 6.8 5.6" fill="none" stroke="#e0e0e0" stroke-width="0.7"/></svg>
<div style="left:613.83px;top:645.2px;width:0.5px;height:7.4px;background:#3c3c3c;"></div>
<svg style="left:614.68px;top:645.6px;" width="8" height="7" viewBox="0 0 8 7"><path d="M1.2 5.6 L4 1.6 L6.8 5.6" fill="none" stroke="#e0e0e0" stroke-width="0.7"/></svg>
<div style="left:623.1px;top:645.2px;width:0.5px;height:7.4px;background:#3c3c3c;"></div>
<svg style="left:623.95px;top:645.6px;" width="8" height="7" viewBox="0 0 8 7"><path d="M1.2 5.6 V2 H6.8 V5.6" fill="none" stroke="#e0e0e0" stroke-width="0.7"/></svg>
<svg style="left:581.4px;top:660px;" width="6" height="6" viewBox="0 0 6 6"><path d="M1.64 1.3 L1.64 4.7 L4.53 3 Z" fill="#c8c8c8"/></svg>
<div style="left:590.4px;top:659.9px;width:6.2px;height:6.2px;background:#5680c2;border-radius:1px;"></div>
<svg style="left:590.4px;top:659.9px;" width="6.2" height="6.2" viewBox="0 0 6.2 6.2"><path d="M1.4 3.2 L2.7 4.5 L4.9 1.7" fill="none" stroke="#ffffff" stroke-width="0.9"/></svg>
<div class="t" style="top:660px;line-height:8px;font-size:5.5px;color:#e0e0e0;left:599.4px;">Normal Falloff</div>
<!-- imageeditor -->
<div style="left:696.4px;top:13px;width:310px;height:332.6px;background:#464646;border-radius:3px;"></div>
<div style="left:696.4px;top:13px;width:310px;height:12px;background:#414141;border-radius:3px 3px 0 0;"></div>
<svg style="left:0px;top:0px;" width="1200" height="675" viewBox="0 0 1200 675"><rect x="731.2" y="65.3" width="239.8" height="239.8" fill="#818181"/><rect x="737.2" y="71.4" width="227.8" height="227.8" rx="4.5" fill="#9a9a9a"/><rect x="746.8" y="82" width="208.4" height="207" fill="#818181"/><path d="M753.9 113.5 L780.3 86.9" stroke="#9c9c9c" stroke-width="1.6" stroke-linecap="round"/><path d="M753.5 138.3 L803 88.4" stroke="#9c9c9c" stroke-width="1.6" stroke-linecap="round"/><path d="M755.4 162 L827.5 89.4" stroke="#9c9c9c" stroke-width="1.6" stroke-linecap="round"/><path d="M753.9 185.7 L851.6 88.1" stroke="#9c9c9c" stroke-width="1.6" stroke-linecap="round"/><path d="M753.9 282.1 L949.3 87.1" stroke="#9c9c9c" stroke-width="1.6" stroke-linecap="round"/><path d="M850.5 283.5 L947.7 186.2" stroke="#9c9c9c" stroke-width="1.6" stroke-linecap="round"/><path d="M876.6 282.5 L951.5 208.3" stroke="#9c9c9c" stroke-width="1.6" stroke-linecap="round"/><path d="M905.3 281.7 L951.2 235.9" stroke="#9c9c9c" stroke-width="1.6" stroke-linecap="round"/><path d="M930.9 282.1 L949 264.2" stroke="#9c9c9c" stroke-width="1.6" stroke-linecap="round"/><path d="M878 88.2 H910.3" stroke="#9c9c9c" stroke-width="0.8"/><path d="M878 91.27 H910.3" stroke="#9c9c9c" stroke-width="0.8"/><path d="M878 94.34 H910.3" stroke="#9c9c9c" stroke-width="0.8"/><path d="M878 97.41 H910.3" stroke="#9c9c9c" stroke-width="0.8"/><path d="M878 100.48 H910.3" stroke="#9c9c9c" stroke-width="0.8"/><path d="M878 103.55 H910.3" stroke="#9c9c9c" stroke-width="0.8"/><path d="M791 256.5 V284" stroke="#9c9c9c" stroke-width="0.8"/><path d="M793.55 256.5 V284" stroke="#9c9c9c" stroke-width="0.8"/><path d="M796.1 256.5 V284" stroke="#9c9c9c" stroke-width="0.8"/><path d="M798.65 256.5 V284" stroke="#9c9c9c" stroke-width="0.8"/><path d="M801.2 256.5 V284" stroke="#9c9c9c" stroke-width="0.8"/><path d="M803.75 256.5 V284" stroke="#9c9c9c" stroke-width="0.8"/><path d="M806.3 256.5 V284" stroke="#9c9c9c" stroke-width="0.8"/><path d="M808.85 256.5 V284" stroke="#9c9c9c" stroke-width="0.8"/><path d="M811.4 256.5 V284" stroke="#9c9c9c" stroke-width="0.8"/><path d="M924.6 72.3 V81.7" stroke="#7a7a7a" stroke-width="2.3" stroke-linecap="round"/><path d="M928.2 72.3 V81.7" stroke="#7a7a7a" stroke-width="2.3" stroke-linecap="round"/><path d="M931.8 72.3 V81.7" stroke="#7a7a7a" stroke-width="2.3" stroke-linecap="round"/><path d="M767.6 289.7 V298.2" stroke="#7a7a7a" stroke-width="2.3" stroke-linecap="round"/><path d="M771.4 289.7 V298.2" stroke="#7a7a7a" stroke-width="2.3" stroke-linecap="round"/><path d="M775.2 289.7 V298.2" stroke="#7a7a7a" stroke-width="2.3" stroke-linecap="round"/><circle cx="757.9" cy="92.9" r="2.9" fill="none" stroke="#9c9c9c" stroke-width="1.5"/><circle cx="757.9" cy="92.9" r="1" fill="#6e6e6e"/><circle cx="946.7" cy="279.2" r="2.9" fill="none" stroke="#9c9c9c" stroke-width="1.5"/><circle cx="946.7" cy="279.2" r="1" fill="#6e6e6e"/></svg>
<div style="left:700.2px;top:15px;width:13px;height:8.6px;background:#2c2c2c;border-radius:2px;"></div>
<svg style="left:701.6px;top:16px;" width="8" height="7" viewBox="0 0 8 7"><rect x="0.6" y="0.6" width="5.6" height="5.6" fill="none" stroke="#e0e0e0" stroke-width="0.8"/><path d="M1.8 1.4 H5.2 V3 H4 V5.2 H3 V3 H1.8 Z" fill="#e0e0e0"/></svg>
<svg style="left:707.4px;top:16.6px;" width="6" height="6" viewBox="0 0 6 6"><path d="M1.4 2.2 L3 3.8 L4.6 2.2" fill="none" stroke="#c8c8c8" stroke-width="0.8" stroke-linecap="round" stroke-linejoin="round"/></svg>
<div style="left:717px;top:15px;width:29.8px;height:8.6px;background:#2c2c2c;border-radius:2px;"></div>
<svg style="left:718.4px;top:16px;" width="8" height="7" viewBox="0 0 8 7"><rect x="0.6" y="0.6" width="5.8" height="5.6" fill="none" stroke="#e0e0e0" stroke-width="0.8"/><path d="M1 5.8 L3 3 L4.2 4.4 L5 3.6 L6 5.8 Z" fill="#e0e0e0"/><circle cx="4.8" cy="2" r="0.7" fill="#e0e0e0"/></svg>
<div class="t" style="top:16px;line-height:8px;font-size:5.5px;color:#d8d8d8;left:729px;">View</div>
<svg style="left:740.6px;top:16.6px;" width="6" height="6" viewBox="0 0 6 6"><path d="M1.4 2.2 L3 3.8 L4.6 2.2" fill="none" stroke="#c8c8c8" stroke-width="0.8" stroke-linecap="round" stroke-linejoin="round"/></svg>
<div class="t" style="top:16px;line-height:8px;font-size:5.5px;color:#d8d8d8;left:753.6px;">View</div>
<div class="t" style="top:16px;line-height:8px;font-size:5.5px;color:#d8d8d8;left:773px;">Image*</div>
<div style="left:802.8px;top:15px;width:13px;height:8.6px;background:#2c2c2c;border-radius:2px 0 0 2px;"></div>
<svg style="left:804px;top:16px;" width="8" height="7" viewBox="0 0 8 7"><rect x="0.6" y="0.6" width="5.8" height="5.6" fill="none" stroke="#e0e0e0" stroke-width="0.8"/><path d="M1 5.8 L3 3 L4.2 4.4 L5 3.6 L6 5.8 Z" fill="#e0e0e0"/><circle cx="4.8" cy="2" r="0.7" fill="#e0e0e0"/></svg>
<svg style="left:810px;top:16.6px;" width="6" height="6" viewBox="0 0 6 6"><path d="M1.4 2.2 L3 3.8 L4.6 2.2" fill="none" stroke="#c8c8c8" stroke-width="0.8" stroke-linecap="round" stroke-linejoin="round"/></svg>
<div style="left:816.4px;top:15px;width:56.4px;height:8.6px;background:#1d1d1d;"></div>
<div class="t" style="top:16px;line-height:8px;font-size:5.5px;color:#e0e0e0;left:820px;">Material.000 Bump</div>
<div style="left:873.4px;top:15px;width:8.6px;height:8.6px;background:#585858;"></div>
<div style="left:882.6px;top:15px;width:8.6px;height:8.6px;background:#585858;"></div>
<div style="left:891.8px;top:15px;width:8.6px;height:8.6px;background:#585858;"></div>
<div style="left:901px;top:15px;width:8.4px;height:8.6px;background:#585858;border-radius:0 2px 2px 0;"></div>
<svg style="left:874.6px;top:16.2px;" width="7" height="7" viewBox="0 0 7 7"><path d="M3.2 0.6 L5.8 1.4 V3.6 Q5.6 5.4 3.2 6.4 Q0.8 5.4 0.6 3.6 V1.4 Z" fill="none" stroke="#c8c8c8" stroke-width="0.7"/></svg>
<svg style="left:884px;top:16.2px;" width="7" height="7" viewBox="0 0 7 7"><path d="M2.2 1.6 V0.6 H5.6 V4.6 H4.2" fill="none" stroke="#e6e6e6" stroke-width="0.7"/><rect x="0.8" y="1.8" width="3.4" height="4" fill="#e6e6e6"/></svg>
<svg style="left:893px;top:16.2px;" width="7" height="7" viewBox="0 0 7 7"><path d="M0.6 1.2 H2.8 L3.4 2 H6.2 V6 H0.6 Z" fill="#e6e6e6"/></svg>
<svg style="left:902.6px;top:16.4px;" width="6" height="6" viewBox="0 0 6 6"><path d="M1.2 1.2 L4.8 4.8 M4.8 1.2 L1.2 4.8" stroke="#e6e6e6" stroke-width="0.8"/></svg>
<svg style="left:914px;top:15.6px;" width="8" height="8" viewBox="0 0 8 8"><path d="M3.8 1 L6.4 3.6 M5.1 2.3 L3 4.4 M2.2 3.2 L4.4 5.4 M3.2 4.4 L1 6.8" stroke="#9a9a9a" stroke-width="0.8" stroke-linecap="round"/></svg>
<div style="left:988.8px;top:15px;width:13px;height:8.6px;background:#2c2c2c;border-radius:2px;"></div>
<svg style="left:990px;top:16px;" width="8" height="7" viewBox="0 0 8 7"><rect x="0.6" y="0.6" width="5.6" height="5.6" fill="#e0e0e0"/><path d="M0.6 0.6 L6.2 6.2" stroke="#2c2c2c" stroke-width="0.8"/><rect x="3.6" y="1.2" width="2" height="2" fill="#2c2c2c"/></svg>
<svg style="left:995.8px;top:16.6px;" width="6" height="6" viewBox="0 0 6 6"><path d="M1.4 2.2 L3 3.8 L4.6 2.2" fill="none" stroke="#c8c8c8" stroke-width="0.8" stroke-linecap="round" stroke-linejoin="round"/></svg>
<div style="left:974.9px;top:29.7px;width:11.8px;height:11.8px;background:#2a2a2a;border-radius:6px;"></div>
<div style="left:990.1px;top:29.7px;width:11.8px;height:11.8px;background:#2a2a2a;border-radius:6px;"></div>
<svg style="left:976.8px;top:31.6px;" width="8" height="8" viewBox="0 0 8 8"><path d="M2 7.4 L1 4.6 L0.6 3 L1.6 3 L2.2 4.2 V1.4 H3 V0.8 H3.9 V0.6 H4.8 V1 H5.6 V1.8 H6.4 L6.6 4.8 L6 7.4 Z" fill="#dcdcdc"/></svg>
<svg style="left:992px;top:31.6px;" width="8" height="8" viewBox="0 0 8 8"><circle cx="4.6" cy="3.2" r="2.4" fill="#dcdcdc"/><path d="M3 5 L0.9 7.2" stroke="#dcdcdc" stroke-width="1.1" stroke-linecap="round"/><path d="M3.4 3.2 H5.8 M4.6 2 V4.4" stroke="#2a2a2a" stroke-width="0.7"/></svg>
<div style="left:696.4px;top:32px;width:3px;height:6.4px;background:#3a3a3a;border-radius:0 2px 2px 0;"></div>
<svg style="left:696.6px;top:33.2px;" width="3" height="4" viewBox="0 0 3 4"><path d="M0.8 0.6 L2.2 2 L0.8 3.4" fill="none" stroke="#9a9a9a" stroke-width="0.6"/></svg>
<div style="left:1003.6px;top:32px;width:2.8px;height:6.4px;background:#3a3a3a;border-radius:2px 0 0 2px;"></div>
<svg style="left:1003.6px;top:33.2px;" width="3" height="4" viewBox="0 0 3 4"><path d="M2.2 0.6 L0.8 2 L2.2 3.4" fill="none" stroke="#9a9a9a" stroke-width="0.6"/></svg>
<!-- nodeeditor -->
<div style="left:696.4px;top:347.6px;width:310px;height:316.9px;background:#222222;border-radius:3px;"></div>
<div style="left:696.4px;top:359.4px;width:206.8px;height:305.1px;background-image:linear-gradient(to right,#1b1b1b 0.6px,transparent 0.6px),linear-gradient(to bottom,#1b1b1b 0.6px,transparent 0.6px),linear-gradient(to right,rgba(0,0,0,0.13) 0.5px,transparent 0.5px),linear-gradient(to bottom,rgba(0,0,0,0.13) 0.5px,transparent 0.5px);background-size:17.85px 17.85px,17.85px 17.85px,3.5700000000000003px 3.5700000000000003px,3.5700000000000003px 3.5700000000000003px;background-position:-0px 0,0 11.85px,0.05px 0,0 1.19px;"></div>
<svg style="left:0px;top:0px;" width="1200" height="675" viewBox="0 0 1200 675"><path d="M733.9 580.1 C737.45 580.1 737.45 580.1 741 580.1" fill="none" stroke="#1a1a1a" stroke-width="1.6"/><path d="M733.9 580.1 C737.45 580.1 737.45 580.1 741 580.1" fill="none" stroke="#c8c8c8" stroke-width="0.9"/><path d="M783.4 546.6 C785.9 546.6 785.2 546.5 787.7 546.5" fill="none" stroke="#1a1a1a" stroke-width="1.6"/><path d="M783.4 546.6 C785.9 546.6 785.2 546.5 787.7 546.5" fill="none" stroke="#c7c729" stroke-width="0.9"/><path d="M812.4 529.2 C815.95 529.2 815.95 529.8 819.5 529.8" fill="none" stroke="#1a1a1a" stroke-width="1.7"/><path d="M812.4 529.2 C815.95 529.2 815.95 529.8 819.5 529.8" fill="none" stroke="#b0b0d0" stroke-width="1.0"/><path d="M813 455.3 C816.25 455.3 816.25 455.3 819.5 455.3" fill="none" stroke="#1a1a1a" stroke-width="1.6"/><path d="M813 455.3 C816.25 455.3 816.25 455.3 819.5 455.3" fill="none" stroke="#c7c729" stroke-width="0.9"/><path d="M862.1 441.4 C864.9 441.4 864.9 441.4 867.7 441.4" fill="none" stroke="#1a1a1a" stroke-width="1.6"/><path d="M862.1 441.4 C864.9 441.4 864.9 441.4 867.7 441.4" fill="none" stroke="#63c763" stroke-width="0.9"/></svg>
<div style="left:706.75px;top:573.15px;width:27.6px;height:19.3px;background:#c4c4c4;border-radius:1.6px;"></div><div style="left:707.2px;top:573.6px;width:26.7px;height:18.4px;background:#3f3f3f;border-radius:1.3px;"></div><div style="left:707.2px;top:573.6px;width:26.7px;height:3.5px;background:#a6233f;border-radius:1.3px 1.3px 0 0;"></div><div class="t" style="top:574px;line-height:4px;font-size:2.48px;color:#f0e8e0;left:710.2px;">UV Map</div><svg style="left:708.1px;top:574.55px;" width="1.6" height="1.6" viewBox="0 0 1.6 1.6"><path d="M0.1 0.3 H1.5 L0.8 1.4 Z" fill="#e8e0d8"/></svg>
<div class="t" style="top:579px;line-height:4px;font-size:2.48px;color:#b4b4b4;right:470.4px;text-align:right;">UV</div>
<div style="left:733.2px;top:579.4px;width:1.4px;height:1.4px;background:#6363c7;border-radius:0.7px;"></div>
<div style="left:709.6px;top:584px;width:1.8px;height:1.8px;background:#666;border-radius:0.4px;"></div>
<div class="t" style="top:584px;line-height:4px;font-size:2.39px;color:#b4b4b4;left:712.6px;">From Instancer</div>
<div style="left:709.2px;top:588px;width:22.4px;height:3.2px;background:#1d1d1d;border-radius:0.8px;"></div>
<div style="left:710px;top:588.9px;width:1.4px;height:1.4px;background:#c8c8c8;"></div>
<div style="left:740.5px;top:539.7px;width:43.6px;height:43.8px;background:rgba(0,0,0,0.35);border-radius:1.6px;"></div><div style="left:741px;top:540px;width:42.4px;height:42.6px;background:#3f3f3f;border-radius:1.3px;"></div><div style="left:741px;top:540px;width:42.4px;height:3.6px;background:#b8672e;border-radius:1.3px 1.3px 0 0;"></div><div class="t" style="top:541px;line-height:4px;font-size:2.48px;color:#f0e8e0;left:744px;">Material.000 Bump</div><svg style="left:741.9px;top:541px;" width="1.6" height="1.6" viewBox="0 0 1.6 1.6"><path d="M0.1 0.3 H1.5 L0.8 1.4 Z" fill="#e8e0d8"/></svg><div class="t" style="top:545px;line-height:4px;font-size:2.48px;color:#b4b4b4;right:421px;text-align:right;">Color</div><div class="t" style="top:549px;line-height:4px;font-size:2.48px;color:#b4b4b4;right:421px;text-align:right;">Alpha</div><div style="left:782.7px;top:545.6px;width:1.4px;height:1.4px;background:#c7c729;border-radius:0.7px;"></div><div style="left:782.7px;top:549.5px;width:1.4px;height:1.4px;background:#a1a1a1;border-radius:0.7px;"></div><div style="left:743px;top:553.9px;width:3.4px;height:3.4px;background:#2c2c2c;border-radius:0.8px;"></div><div style="left:743.6px;top:554.6px;width:1.6px;height:2px;background:#d0d0d0;"></div><div style="left:746.8px;top:553.9px;width:15.6px;height:3.4px;background:#1d1d1d;"></div><div class="t" style="top:554px;line-height:4px;font-size:2.3px;color:#d8d8d8;left:747.8px;">Material.00</div><div style="left:762.8px;top:553.9px;width:3.4px;height:3.4px;background:#5a5a5a;"></div><div style="left:763.7px;top:554.8px;width:1.6px;height:1.6px;background:#d8d8d8;border-radius:0.4px;"></div><div style="left:766.5px;top:553.9px;width:3.4px;height:3.4px;background:#5a5a5a;"></div><div style="left:767.4px;top:554.8px;width:1.6px;height:1.6px;background:#d8d8d8;border-radius:0.4px;"></div><div style="left:770.2px;top:553.9px;width:3.4px;height:3.4px;background:#5a5a5a;"></div><div style="left:771.1px;top:554.8px;width:1.6px;height:1.6px;background:#d8d8d8;border-radius:0.4px;"></div><div style="left:773.9px;top:553.9px;width:3.4px;height:3.4px;background:#5a5a5a;"></div><div style="left:774.8px;top:554.8px;width:1.6px;height:1.6px;background:#d8d8d8;border-radius:0.4px;"></div><div style="left:777.6px;top:553.9px;width:3.4px;height:3.4px;background:#5a5a5a;border-radius:0.8px;"></div><div style="left:778.5px;top:554.8px;width:1.6px;height:1.6px;background:#d8d8d8;border-radius:0.4px;"></div><div style="left:743px;top:558.25px;width:38px;height:3.1px;background:#2c2c2c;border-radius:0.8px;"></div><div class="t" style="top:559px;line-height:4px;font-size:2.39px;color:#c8c8c8;left:744.4px;">Linear</div><svg style="left:778.6px;top:559.1px;" width="1.6" height="1.4" viewBox="0 0 1.6 1.4"><path d="M0.2 0.3 L0.8 0.9 L1.4 0.3" fill="none" stroke="#a0a0a0" stroke-width="0.35"/></svg><div style="left:743px;top:562.18px;width:38px;height:3.1px;background:#2c2c2c;border-radius:0.8px;"></div><div class="t" style="top:563px;line-height:4px;font-size:2.39px;color:#c8c8c8;left:744.4px;">Flat</div><svg style="left:778.6px;top:563.03px;" width="1.6" height="1.4" viewBox="0 0 1.6 1.4"><path d="M0.2 0.3 L0.8 0.9 L1.4 0.3" fill="none" stroke="#a0a0a0" stroke-width="0.35"/></svg><div style="left:743px;top:566.11px;width:38px;height:3.1px;background:#2c2c2c;border-radius:0.8px;"></div><div class="t" style="top:567px;line-height:4px;font-size:2.39px;color:#c8c8c8;left:744.4px;">Repeat</div><svg style="left:778.6px;top:566.96px;" width="1.6" height="1.4" viewBox="0 0 1.6 1.4"><path d="M0.2 0.3 L0.8 0.9 L1.4 0.3" fill="none" stroke="#a0a0a0" stroke-width="0.35"/></svg><div style="left:743px;top:570.04px;width:38px;height:3.1px;background:#2c2c2c;border-radius:0.8px;"></div><div class="t" style="top:570px;line-height:4px;font-size:2.39px;color:#c8c8c8;left:744.4px;">Generated</div><svg style="left:778.6px;top:570.89px;" width="1.6" height="1.4" viewBox="0 0 1.6 1.4"><path d="M0.2 0.3 L0.8 0.9 L1.4 0.3" fill="none" stroke="#a0a0a0" stroke-width="0.35"/></svg><div class="t" style="top:574px;line-height:4px;font-size:2.39px;color:#7a7a7a;left:744.4px;">Color Space</div><div style="left:762.4px;top:573.95px;width:18.6px;height:3.1px;background:#2c2c2c;border-radius:0.8px;"></div><div class="t" style="top:574px;line-height:4px;font-size:2.39px;color:#7a7a7a;left:763.8px;">Non-Color</div><svg style="left:778.6px;top:574.8px;" width="1.6" height="1.4" viewBox="0 0 1.6 1.4"><path d="M0.2 0.3 L0.8 0.9 L1.4 0.3" fill="none" stroke="#a0a0a0" stroke-width="0.35"/></svg><div class="t" style="top:579px;line-height:4px;font-size:2.48px;color:#b4b4b4;left:744.4px;">Vector</div><div style="left:740.3px;top:579.2px;width:1.4px;height:1.4px;background:#6363c7;border-radius:0.7px;"></div>
<div style="left:770.1px;top:448.8px;width:43.6px;height:43.8px;background:rgba(0,0,0,0.35);border-radius:1.6px;"></div><div style="left:770.6px;top:449.1px;width:42.4px;height:42.6px;background:#3f3f3f;border-radius:1.3px;"></div><div style="left:770.6px;top:449.1px;width:42.4px;height:3.6px;background:#b8672e;border-radius:1.3px 1.3px 0 0;"></div><div class="t" style="top:450px;line-height:4px;font-size:2.48px;color:#f0e8e0;left:773.6px;">Material.001 Base Color.001</div><svg style="left:771.5px;top:450.1px;" width="1.6" height="1.6" viewBox="0 0 1.6 1.6"><path d="M0.1 0.3 H1.5 L0.8 1.4 Z" fill="#e8e0d8"/></svg><div class="t" style="top:454px;line-height:4px;font-size:2.48px;color:#b4b4b4;right:391.4px;text-align:right;">Color</div><div class="t" style="top:458px;line-height:4px;font-size:2.48px;color:#b4b4b4;right:391.4px;text-align:right;">Alpha</div><div style="left:812.3px;top:454.7px;width:1.4px;height:1.4px;background:#c7c729;border-radius:0.7px;"></div><div style="left:812.3px;top:458.6px;width:1.4px;height:1.4px;background:#a1a1a1;border-radius:0.7px;"></div><div style="left:772.6px;top:463px;width:3.4px;height:3.4px;background:#2c2c2c;border-radius:0.8px;"></div><div style="left:773.2px;top:463.7px;width:1.6px;height:2px;background:#d0d0d0;"></div><div style="left:776.4px;top:463px;width:15.6px;height:3.4px;background:#1d1d1d;"></div><div class="t" style="top:464px;line-height:4px;font-size:2.3px;color:#d8d8d8;left:777.4px;">Material.00</div><div style="left:792.4px;top:463px;width:3.4px;height:3.4px;background:#5a5a5a;"></div><div style="left:793.3px;top:463.9px;width:1.6px;height:1.6px;background:#d8d8d8;border-radius:0.4px;"></div><div style="left:796.1px;top:463px;width:3.4px;height:3.4px;background:#5a5a5a;"></div><div style="left:797px;top:463.9px;width:1.6px;height:1.6px;background:#d8d8d8;border-radius:0.4px;"></div><div style="left:799.8px;top:463px;width:3.4px;height:3.4px;background:#5a5a5a;"></div><div style="left:800.7px;top:463.9px;width:1.6px;height:1.6px;background:#d8d8d8;border-radius:0.4px;"></div><div style="left:803.5px;top:463px;width:3.4px;height:3.4px;background:#5a5a5a;"></div><div style="left:804.4px;top:463.9px;width:1.6px;height:1.6px;background:#d8d8d8;border-radius:0.4px;"></div><div style="left:807.2px;top:463px;width:3.4px;height:3.4px;background:#5a5a5a;border-radius:0.8px;"></div><div style="left:808.1px;top:463.9px;width:1.6px;height:1.6px;background:#d8d8d8;border-radius:0.4px;"></div><div style="left:772.6px;top:467.35px;width:38px;height:3.1px;background:#2c2c2c;border-radius:0.8px;"></div><div class="t" style="top:468px;line-height:4px;font-size:2.39px;color:#c8c8c8;left:774px;">Linear</div><svg style="left:808.2px;top:468.2px;" width="1.6" height="1.4" viewBox="0 0 1.6 1.4"><path d="M0.2 0.3 L0.8 0.9 L1.4 0.3" fill="none" stroke="#a0a0a0" stroke-width="0.35"/></svg><div style="left:772.6px;top:471.28px;width:38px;height:3.1px;background:#2c2c2c;border-radius:0.8px;"></div><div class="t" style="top:472px;line-height:4px;font-size:2.39px;color:#c8c8c8;left:774px;">Flat</div><svg style="left:808.2px;top:472.13px;" width="1.6" height="1.4" viewBox="0 0 1.6 1.4"><path d="M0.2 0.3 L0.8 0.9 L1.4 0.3" fill="none" stroke="#a0a0a0" stroke-width="0.35"/></svg><div style="left:772.6px;top:475.21px;width:38px;height:3.1px;background:#2c2c2c;border-radius:0.8px;"></div><div class="t" style="top:476px;line-height:4px;font-size:2.39px;color:#c8c8c8;left:774px;">Repeat</div><svg style="left:808.2px;top:476.06px;" width="1.6" height="1.4" viewBox="0 0 1.6 1.4"><path d="M0.2 0.3 L0.8 0.9 L1.4 0.3" fill="none" stroke="#a0a0a0" stroke-width="0.35"/></svg><div style="left:772.6px;top:479.14px;width:38px;height:3.1px;background:#2c2c2c;border-radius:0.8px;"></div><div class="t" style="top:480px;line-height:4px;font-size:2.39px;color:#c8c8c8;left:774px;">Generated</div><svg style="left:808.2px;top:479.99px;" width="1.6" height="1.4" viewBox="0 0 1.6 1.4"><path d="M0.2 0.3 L0.8 0.9 L1.4 0.3" fill="none" stroke="#a0a0a0" stroke-width="0.35"/></svg><div class="t" style="top:483px;line-height:4px;font-size:2.39px;color:#b4b4b4;left:774px;">Color Space</div><div style="left:792px;top:483.05px;width:18.6px;height:3.1px;background:#2c2c2c;border-radius:0.8px;"></div><div class="t" style="top:483px;line-height:4px;font-size:2.39px;color:#c8c8c8;left:793.4px;">sRGB</div><svg style="left:808.2px;top:483.9px;" width="1.6" height="1.4" viewBox="0 0 1.6 1.4"><path d="M0.2 0.3 L0.8 0.9 L1.4 0.3" fill="none" stroke="#a0a0a0" stroke-width="0.35"/></svg><div class="t" style="top:488px;line-height:4px;font-size:2.48px;color:#b4b4b4;left:774px;">Vector</div><div style="left:769.9px;top:488.3px;width:1.4px;height:1.4px;background:#6363c7;border-radius:0.7px;"></div>
<div style="left:787.2px;top:522.6px;width:25.9px;height:30.9px;background:rgba(0,0,0,0.35);border-radius:1.6px;"></div><div style="left:787.7px;top:522.9px;width:24.7px;height:29.7px;background:#3f3f3f;border-radius:1.3px;"></div><div style="left:787.7px;top:522.9px;width:24.7px;height:3.5px;background:#7a5cc0;border-radius:1.3px 1.3px 0 0;"></div><div class="t" style="top:524px;line-height:4px;font-size:2.48px;color:#f0e8e0;left:790.7px;">Bump</div><svg style="left:788.6px;top:523.85px;" width="1.6" height="1.6" viewBox="0 0 1.6 1.6"><path d="M0.1 0.3 H1.5 L0.8 1.4 Z" fill="#e8e0d8"/></svg>
<div class="t" style="top:528px;line-height:4px;font-size:2.48px;color:#b4b4b4;right:391px;text-align:right;">Normal</div>
<div style="left:811.7px;top:528.5px;width:1.4px;height:1.4px;background:#6363c7;border-radius:0.7px;"></div>
<div style="left:790.1px;top:533.6px;width:1.8px;height:1.8px;background:#666;border-radius:0.4px;"></div>
<div class="t" style="top:533px;line-height:4px;font-size:2.39px;color:#b4b4b4;left:793.1px;">Invert</div>
<div style="left:789.7px;top:537.35px;width:20.7px;height:3.1px;background:#5a5a5a;border-radius:0.8px;"></div><div style="left:789.7px;top:537.35px;width:20.7px;height:3.1px;background:#5680c2;border-radius:0.8px;"></div><div class="t" style="top:538px;line-height:4px;font-size:2.39px;color:#d0d0d0;left:791.1px;">Strength</div><div class="t" style="top:538px;line-height:4px;font-size:2.39px;color:#c0c0c0;right:390.8px;text-align:right;">1.000</div>
<div style="left:787px;top:538.2px;width:1.4px;height:1.4px;background:#a1a1a1;border-radius:0.7px;"></div>
<div style="left:789.7px;top:541.15px;width:20.7px;height:3.1px;background:#5a5a5a;border-radius:0.8px;"></div><div class="t" style="top:542px;line-height:4px;font-size:2.39px;color:#d0d0d0;left:791.1px;">Distance</div><div class="t" style="top:542px;line-height:4px;font-size:2.39px;color:#c0c0c0;right:390.8px;text-align:right;">1.000</div>
<div style="left:787px;top:542px;width:1.4px;height:1.4px;background:#a1a1a1;border-radius:0.7px;"></div>
<div class="t" style="top:545px;line-height:4px;font-size:2.48px;color:#b4b4b4;left:791.1px;">Height</div>
<div style="left:787px;top:545.8px;width:1.4px;height:1.4px;background:#a1a1a1;border-radius:0.7px;"></div>
<div class="t" style="top:549px;line-height:4px;font-size:2.48px;color:#b4b4b4;left:791.1px;">Normal</div>
<div style="left:787px;top:549.6px;width:1.4px;height:1.4px;background:#6363c7;border-radius:0.7px;"></div>
<div style="left:819px;top:434.7px;width:43.8px;height:106px;background:rgba(0,0,0,0.35);border-radius:1.6px;"></div><div style="left:819.5px;top:435px;width:42.6px;height:104.8px;background:#3f3f3f;border-radius:1.3px;"></div><div style="left:819.5px;top:435px;width:42.6px;height:3.9px;background:#179c6b;border-radius:1.3px 1.3px 0 0;"></div><div class="t" style="top:436px;line-height:4px;font-size:2.48px;color:#f0e8e0;left:822.5px;">Principled BSDF</div><svg style="left:820.4px;top:436.15px;" width="1.6" height="1.6" viewBox="0 0 1.6 1.6"><path d="M0.1 0.3 H1.5 L0.8 1.4 Z" fill="#e8e0d8"/></svg>
<div class="t" style="top:440px;line-height:4px;font-size:2.48px;color:#b4b4b4;right:341.9px;text-align:right;">BSDF</div>
<div style="left:861.4px;top:440.7px;width:1.4px;height:1.4px;background:#63c763;border-radius:0.7px;"></div>
<div style="left:821.7px;top:445.05px;width:38.2px;height:3.1px;background:#2c2c2c;border-radius:0.8px;"></div><div class="t" style="top:445px;line-height:4px;font-size:2.39px;color:#c8c8c8;left:823.1px;">GGX</div><svg style="left:857.5px;top:445.9px;" width="1.6" height="1.4" viewBox="0 0 1.6 1.4"><path d="M0.2 0.3 L0.8 0.9 L1.4 0.3" fill="none" stroke="#a0a0a0" stroke-width="0.35"/></svg>
<div style="left:821.7px;top:449.05px;width:38.2px;height:3.1px;background:#2c2c2c;border-radius:0.8px;"></div><div class="t" style="top:449px;line-height:4px;font-size:2.39px;color:#c8c8c8;left:823.1px;">Christensen-Burley</div><svg style="left:857.5px;top:449.9px;" width="1.6" height="1.4" viewBox="0 0 1.6 1.4"><path d="M0.2 0.3 L0.8 0.9 L1.4 0.3" fill="none" stroke="#a0a0a0" stroke-width="0.35"/></svg>
<div style="left:818.8px;top:454.6px;width:1.4px;height:1.4px;background:#c7c729;border-radius:0.7px;"></div>
<div class="t" style="top:454px;line-height:4px;font-size:2.48px;color:#b4b4b4;left:822.7px;">Base Color</div>
<div style="left:818.8px;top:458.52px;width:1.4px;height:1.4px;background:#a1a1a1;border-radius:0.7px;"></div>
<div style="left:821.7px;top:457.67px;width:38.2px;height:3.1px;background:#5a5a5a;border-radius:0.8px;"></div><div class="t" style="top:458px;line-height:4px;font-size:2.39px;color:#d0d0d0;left:823.1px;">Subsurface</div><div class="t" style="top:458px;line-height:4px;font-size:2.39px;color:#c0c0c0;right:341.3px;text-align:right;">0.000</div>
<div style="left:818.8px;top:462.43px;width:1.4px;height:1.4px;background:#6363c7;border-radius:0.7px;"></div>
<div style="left:821.7px;top:461.58px;width:38.2px;height:3.1px;background:#2c2c2c;border-radius:0.8px;"></div><div class="t" style="top:462px;line-height:4px;font-size:2.39px;color:#c8c8c8;left:823.1px;">Subsurface Radius</div><svg style="left:857.5px;top:462.43px;" width="1.6" height="1.4" viewBox="0 0 1.6 1.4"><path d="M0.2 0.3 L0.8 0.9 L1.4 0.3" fill="none" stroke="#a0a0a0" stroke-width="0.35"/></svg>
<div style="left:818.8px;top:466.35px;width:1.4px;height:1.4px;background:#c7c729;border-radius:0.7px;"></div>
<div class="t" style="top:466px;line-height:4px;font-size:2.39px;color:#b4b4b4;left:822.7px;">Subsurface Col</div>
<div style="left:842.1px;top:465.55px;width:17.8px;height:3px;background:#f2f2f2;border-radius:0.9px;"></div>
<div style="left:818.8px;top:470.27px;width:1.4px;height:1.4px;background:#a1a1a1;border-radius:0.7px;"></div>
<div style="left:821.7px;top:469.42px;width:38.2px;height:3.1px;background:#5a5a5a;border-radius:0.8px;"></div><div class="t" style="top:470px;line-height:4px;font-size:2.39px;color:#d0d0d0;left:823.1px;">Metallic</div><div class="t" style="top:470px;line-height:4px;font-size:2.39px;color:#c0c0c0;right:341.3px;text-align:right;">0.000</div>
<div style="left:818.8px;top:474.19px;width:1.4px;height:1.4px;background:#a1a1a1;border-radius:0.7px;"></div>
<div style="left:821.7px;top:473.33px;width:38.2px;height:3.1px;background:#5a5a5a;border-radius:0.8px;"></div><div style="left:821.7px;top:473.33px;width:18.72px;height:3.1px;background:#5680c2;border-radius:0.8px 0 0 0.8px;"></div><div class="t" style="top:474px;line-height:4px;font-size:2.39px;color:#d0d0d0;left:823.1px;">Specular</div><div class="t" style="top:474px;line-height:4px;font-size:2.39px;color:#c0c0c0;right:341.3px;text-align:right;">0.500</div>
<div style="left:818.8px;top:478.1px;width:1.4px;height:1.4px;background:#a1a1a1;border-radius:0.7px;"></div>
<div style="left:821.7px;top:477.25px;width:38.2px;height:3.1px;background:#5a5a5a;border-radius:0.8px;"></div><div class="t" style="top:478px;line-height:4px;font-size:2.39px;color:#d0d0d0;left:823.1px;">Specular Tint</div><div class="t" style="top:478px;line-height:4px;font-size:2.39px;color:#c0c0c0;right:341.3px;text-align:right;">0.000</div>
<div style="left:818.8px;top:482.02px;width:1.4px;height:1.4px;background:#a1a1a1;border-radius:0.7px;"></div>
<div style="left:821.7px;top:481.17px;width:38.2px;height:3.1px;background:#5a5a5a;border-radius:0.8px;"></div><div style="left:821.7px;top:481.17px;width:18.72px;height:3.1px;background:#5680c2;border-radius:0.8px 0 0 0.8px;"></div><div class="t" style="top:482px;line-height:4px;font-size:2.39px;color:#d0d0d0;left:823.1px;">Roughness</div><div class="t" style="top:482px;line-height:4px;font-size:2.39px;color:#c0c0c0;right:341.3px;text-align:right;">0.500</div>
<div style="left:818.8px;top:485.94px;width:1.4px;height:1.4px;background:#a1a1a1;border-radius:0.7px;"></div>
<div style="left:821.7px;top:485.09px;width:38.2px;height:3.1px;background:#5a5a5a;border-radius:0.8px;"></div><div class="t" style="top:485px;line-height:4px;font-size:2.39px;color:#d0d0d0;left:823.1px;">Anisotropic</div><div class="t" style="top:485px;line-height:4px;font-size:2.39px;color:#c0c0c0;right:341.3px;text-align:right;">0.000</div>
<div style="left:818.8px;top:489.85px;width:1.4px;height:1.4px;background:#a1a1a1;border-radius:0.7px;"></div>
<div style="left:821.7px;top:489px;width:38.2px;height:3.1px;background:#5a5a5a;border-radius:0.8px;"></div><div class="t" style="top:489px;line-height:4px;font-size:2.39px;color:#d0d0d0;left:823.1px;">Anisotropic Rotation</div><div class="t" style="top:489px;line-height:4px;font-size:2.39px;color:#c0c0c0;right:341.3px;text-align:right;">0.000</div>
<div style="left:818.8px;top:493.77px;width:1.4px;height:1.4px;background:#a1a1a1;border-radius:0.7px;"></div>
<div style="left:821.7px;top:492.92px;width:38.2px;height:3.1px;background:#5a5a5a;border-radius:0.8px;"></div><div class="t" style="top:493px;line-height:4px;font-size:2.39px;color:#d0d0d0;left:823.1px;">Sheen</div><div class="t" style="top:493px;line-height:4px;font-size:2.39px;color:#c0c0c0;right:341.3px;text-align:right;">0.000</div>
<div style="left:818.8px;top:497.69px;width:1.4px;height:1.4px;background:#a1a1a1;border-radius:0.7px;"></div>
<div style="left:821.7px;top:496.84px;width:38.2px;height:3.1px;background:#5a5a5a;border-radius:0.8px;"></div><div style="left:821.7px;top:496.84px;width:18.72px;height:3.1px;background:#5680c2;border-radius:0.8px 0 0 0.8px;"></div><div class="t" style="top:497px;line-height:4px;font-size:2.39px;color:#d0d0d0;left:823.1px;">Sheen Tint</div><div class="t" style="top:497px;line-height:4px;font-size:2.39px;color:#c0c0c0;right:341.3px;text-align:right;">0.500</div>
<div style="left:818.8px;top:501.6px;width:1.4px;height:1.4px;background:#a1a1a1;border-radius:0.7px;"></div>
<div style="left:821.7px;top:500.75px;width:38.2px;height:3.1px;background:#5a5a5a;border-radius:0.8px;"></div><div class="t" style="top:501px;line-height:4px;font-size:2.39px;color:#d0d0d0;left:823.1px;">Clearcoat</div><div class="t" style="top:501px;line-height:4px;font-size:2.39px;color:#c0c0c0;right:341.3px;text-align:right;">0.000</div>
<div style="left:818.8px;top:505.52px;width:1.4px;height:1.4px;background:#a1a1a1;border-radius:0.7px;"></div>
<div style="left:821.7px;top:504.67px;width:38.2px;height:3.1px;background:#5a5a5a;border-radius:0.8px;"></div><div style="left:821.7px;top:504.67px;width:0.76px;height:3.1px;background:#5680c2;border-radius:0.8px 0 0 0.8px;"></div><div class="t" style="top:505px;line-height:4px;font-size:2.39px;color:#d0d0d0;left:823.1px;">Clearcoat Roughness</div><div class="t" style="top:505px;line-height:4px;font-size:2.39px;color:#c0c0c0;right:341.3px;text-align:right;">0.030</div>
<div style="left:818.8px;top:509.44px;width:1.4px;height:1.4px;background:#a1a1a1;border-radius:0.7px;"></div>
<div style="left:821.7px;top:508.59px;width:38.2px;height:3.1px;background:#5a5a5a;border-radius:0.8px;"></div><div class="t" style="top:509px;line-height:4px;font-size:2.39px;color:#d0d0d0;left:823.1px;">IOR</div><div class="t" style="top:509px;line-height:4px;font-size:2.39px;color:#c0c0c0;right:341.3px;text-align:right;">1.450</div>
<div style="left:818.8px;top:513.36px;width:1.4px;height:1.4px;background:#a1a1a1;border-radius:0.7px;"></div>
<div style="left:821.7px;top:512.51px;width:38.2px;height:3.1px;background:#5a5a5a;border-radius:0.8px;"></div><div class="t" style="top:513px;line-height:4px;font-size:2.39px;color:#d0d0d0;left:823.1px;">Transmission</div><div class="t" style="top:513px;line-height:4px;font-size:2.39px;color:#c0c0c0;right:341.3px;text-align:right;">0.000</div>
<div style="left:818.8px;top:517.27px;width:1.4px;height:1.4px;background:#a1a1a1;border-radius:0.7px;"></div>
<div style="left:821.7px;top:516.42px;width:38.2px;height:3.1px;background:#5a5a5a;border-radius:0.8px;"></div><div class="t" style="top:517px;line-height:4px;font-size:2.39px;color:#d0d0d0;left:823.1px;">Transmission Roughness</div><div class="t" style="top:517px;line-height:4px;font-size:2.39px;color:#c0c0c0;right:341.3px;text-align:right;">0.000</div>
<div style="left:818.8px;top:521.19px;width:1.4px;height:1.4px;background:#c7c729;border-radius:0.7px;"></div>
<div class="t" style="top:521px;line-height:4px;font-size:2.39px;color:#b4b4b4;left:822.7px;">Emission</div>
<div style="left:842.1px;top:520.39px;width:17.8px;height:3px;background:#000000;border-radius:0.9px;"></div>
<div style="left:818.8px;top:525.11px;width:1.4px;height:1.4px;background:#a1a1a1;border-radius:0.7px;"></div>
<div style="left:821.7px;top:524.26px;width:38.2px;height:3.1px;background:#5a5a5a;border-radius:0.8px;"></div><div style="left:821.7px;top:524.26px;width:38.2px;height:3.1px;background:#5680c2;border-radius:0.8px;"></div><div class="t" style="top:525px;line-height:4px;font-size:2.39px;color:#d0d0d0;left:823.1px;">Alpha</div><div class="t" style="top:525px;line-height:4px;font-size:2.39px;color:#c0c0c0;right:341.3px;text-align:right;">1.000</div>
<div style="left:818.8px;top:529.02px;width:1.4px;height:1.4px;background:#6363c7;border-radius:0.7px;"></div>
<div class="t" style="top:529px;line-height:4px;font-size:2.48px;color:#b4b4b4;left:822.7px;">Normal</div>
<div style="left:818.8px;top:532.94px;width:1.4px;height:1.4px;background:#6363c7;border-radius:0.7px;"></div>
<div class="t" style="top:533px;line-height:4px;font-size:2.48px;color:#b4b4b4;left:822.7px;">Clearcoat Normal</div>
<div style="left:818.8px;top:536.86px;width:1.4px;height:1.4px;background:#6363c7;border-radius:0.7px;"></div>
<div class="t" style="top:536px;line-height:4px;font-size:2.48px;color:#b4b4b4;left:822.7px;">Tangent</div>
<div style="left:867.2px;top:430.7px;width:26.2px;height:22px;background:rgba(0,0,0,0.35);border-radius:1.6px;"></div><div style="left:867.7px;top:431px;width:25px;height:20.8px;background:#3f3f3f;border-radius:1.3px;"></div><div style="left:867.7px;top:431px;width:25px;height:3.5px;background:#8c1f33;border-radius:1.3px 1.3px 0 0;"></div><div class="t" style="top:432px;line-height:4px;font-size:2.48px;color:#f0e8e0;left:870.7px;">Material Output</div><svg style="left:868.6px;top:431.95px;" width="1.6" height="1.6" viewBox="0 0 1.6 1.6"><path d="M0.1 0.3 H1.5 L0.8 1.4 Z" fill="#e8e0d8"/></svg>
<div style="left:869.9px;top:435.55px;width:20.6px;height:3.1px;background:#2c2c2c;border-radius:0.8px;"></div><div class="t" style="top:436px;line-height:4px;font-size:2.39px;color:#c8c8c8;left:871.3px;">All</div><svg style="left:888.1px;top:436.4px;" width="1.6" height="1.4" viewBox="0 0 1.6 1.4"><path d="M0.2 0.3 L0.8 0.9 L1.4 0.3" fill="none" stroke="#a0a0a0" stroke-width="0.35"/></svg>
<div class="t" style="top:440px;line-height:4px;font-size:2.48px;color:#b4b4b4;left:871.1px;">Surface</div>
<div style="left:867px;top:440.7px;width:1.4px;height:1.4px;background:#63c763;border-radius:0.7px;"></div>
<div class="t" style="top:444px;line-height:4px;font-size:2.48px;color:#b4b4b4;left:871.1px;">Volume</div>
<div style="left:867px;top:444.55px;width:1.4px;height:1.4px;background:#63c763;border-radius:0.7px;"></div>
<div class="t" style="top:448px;line-height:4px;font-size:2.48px;color:#b4b4b4;left:871.1px;">Displacement</div>
<div style="left:867px;top:448.4px;width:1.4px;height:1.4px;background:#6363c7;border-radius:0.7px;"></div>
<div class="t" style="top:646px;line-height:8px;font-size:5.9px;color:#f2f2f2;left:709px;">Material.000</div>
<div style="left:696.4px;top:347.6px;width:310px;height:11.8px;background:#303030;border-radius:3px 3px 0 0;"></div>
<div style="left:700.2px;top:349.2px;width:13px;height:8.4px;background:#2c2c2c;border-radius:2px;"></div>
<svg style="left:701.6px;top:350.4px;" width="7" height="7" viewBox="0 0 7 7"><circle cx="3.4" cy="3.4" r="2.7" fill="none" stroke="#e0e0e0" stroke-width="0.8"/><path d="M3.4 3.4 L1.2 1.8 M3.4 3.4 L5.8 2" stroke="#e0e0e0" stroke-width="0.6"/></svg>
<svg style="left:707.4px;top:350.6px;" width="6" height="6" viewBox="0 0 6 6"><path d="M1.4 2.2 L3 3.8 L4.6 2.2" fill="none" stroke="#c8c8c8" stroke-width="0.8" stroke-linecap="round" stroke-linejoin="round"/></svg>
<div style="left:717.2px;top:349.2px;width:41.8px;height:8.4px;background:#2c2c2c;border-radius:2px;"></div>
<svg style="left:718.8px;top:350.6px;" width="7" height="7" viewBox="0 0 7 7"><rect x="1.4" y="1.4" width="3.8" height="3.8" fill="#e6e6e6"/><path d="M0.4 1.6 V0.4 H1.6 M5 0.4 H6.2 V1.6 M6.2 5 V6.2 H5 M1.6 6.2 H0.4 V5" fill="none" stroke="#e6e6e6" stroke-width="0.7"/></svg>
<div class="t" style="top:350px;line-height:8px;font-size:5.5px;color:#d8d8d8;left:729px;">Object</div>
<svg style="left:752.6px;top:350.6px;" width="6" height="6" viewBox="0 0 6 6"><path d="M1.4 2.2 L3 3.8 L4.6 2.2" fill="none" stroke="#c8c8c8" stroke-width="0.8" stroke-linecap="round" stroke-linejoin="round"/></svg>
<div class="t" style="top:350px;line-height:8px;font-size:5.5px;color:#d8d8d8;left:765px;">View</div>
<div class="t" style="top:350px;line-height:8px;font-size:5.5px;color:#d8d8d8;left:784px;">Select</div>
<div class="t" style="top:350px;line-height:8px;font-size:5.5px;color:#d8d8d8;left:806.4px;">Add</div>
<div class="t" style="top:350px;line-height:8px;font-size:5.5px;color:#d8d8d8;left:823px;">Node</div>
<div style="left:843.8px;top:350.3px;width:6px;height:6px;background:#5680c2;border-radius:1px;"></div>
<svg style="left:843.8px;top:350.3px;" width="6" height="6" viewBox="0 0 6 6"><path d="M1.3 3.1 L2.6 4.4 L4.8 1.6" fill="none" stroke="#ffffff" stroke-width="0.9"/></svg>
<div class="t" style="top:350px;line-height:8px;font-size:5.5px;color:#e6e6e6;left:853.4px;">Use Nodes</div>
<div style="left:893.2px;top:349.2px;width:36.8px;height:8.4px;background:#2c2c2c;border-radius:2px;"></div>
<div class="t" style="top:350px;line-height:8px;font-size:5.5px;color:#d8d8d8;left:896.6px;">Slot 1</div>
<svg style="left:923.6px;top:350.6px;" width="6" height="6" viewBox="0 0 6 6"><path d="M1.4 2.2 L3 3.8 L4.6 2.2" fill="none" stroke="#c8c8c8" stroke-width="0.8" stroke-linecap="round" stroke-linejoin="round"/></svg>
<div style="left:933.6px;top:349.2px;width:12px;height:8.4px;background:#2c2c2c;border-radius:2px 0 0 2px;"></div>
<svg style="left:934.6px;top:350.4px;" width="7" height="7" viewBox="0 0 7 7"><circle cx="3.4" cy="3.4" r="2.8" fill="none" stroke="#e0e0e0" stroke-width="0.7"/><path d="M3.4 0.6 A2.8 2.8 0 0 0 1 5 L3.4 3.4 Z M3.4 3.4 L6.2 3.4 A2.8 2.8 0 0 1 3.4 6.2 Z" fill="#e0e0e0"/></svg>
<svg style="left:940px;top:350.6px;" width="6" height="6" viewBox="0 0 6 6"><path d="M1.4 2.2 L3 3.8 L4.6 2.2" fill="none" stroke="#c8c8c8" stroke-width="0.8" stroke-linecap="round" stroke-linejoin="round"/></svg>
<div style="left:946.2px;top:349.2px;width:56.2px;height:8.4px;background:#1d1d1d;"></div>
<div class="t" style="top:350px;line-height:8px;font-size:5.5px;color:#e0e0e0;left:949.8px;">Material.000</div>
<div style="left:1003px;top:349.2px;width:3.4px;height:8.4px;background:#585858;"></div>
<div style="left:699.3px;top:363.2px;width:19.3px;height:15.8px;background:#4f7fd1;border-radius:2px;"></div>
<svg style="left:701.4px;top:364.4px;" width="15" height="14" viewBox="0 0 15 14"><rect x="1.2" y="1.4" width="11" height="10.4" rx="1" fill="none" stroke="#e8a33a" stroke-width="0.7" stroke-dasharray="1.6 1"/><path d="M5 3.8 V9 L6.4 7.8 L7.4 9.8 L8.2 9.4 L7.3 7.5 L9 7.4 Z" fill="#ffffff"/></svg>
<svg style="left:716px;top:376.4px;" width="2" height="2" viewBox="0 0 2 2"><path d="M2 0 V2 H0 Z" fill="#e0e0e0"/></svg>
<div style="left:699.3px;top:382.3px;width:19.3px;height:15.7px;background:#2d2d2d;border-radius:2px;"></div>
<svg style="left:701.6px;top:384px;" width="15" height="13" viewBox="0 0 15 13"><path d="M3.6 6.8 L10 1.4" stroke="#ececec" stroke-width="1.4" stroke-linecap="round"/><path d="M1.2 8.4 Q3 10.6 5.4 8.6 T10.6 8.4" stroke="#4fbf8f" stroke-width="0.7" fill="none"/></svg>
<svg style="left:716px;top:395.4px;" width="2" height="2" viewBox="0 0 2 2"><path d="M2 0 V2 H0 Z" fill="#9a9a9a"/></svg>
<div style="left:699.3px;top:400.8px;width:19.3px;height:16px;background:#2d2d2d;border-radius:2px;"></div>
<svg style="left:701.6px;top:402.4px;" width="15" height="13" viewBox="0 0 15 13"><path d="M1.4 6.8 H12.8" stroke="#d2691e" stroke-width="0.7"/><path d="M5 2 L9 10.4 M9.2 2 L5.2 10.4" stroke="#ececec" stroke-width="1"/><circle cx="5" cy="2.6" r="1" fill="none" stroke="#ececec" stroke-width="0.6"/><circle cx="9.2" cy="2.6" r="1" fill="none" stroke="#ececec" stroke-width="0.6"/></svg>
<div style="left:903.2px;top:359.4px;width:94.2px;height:305.1px;background:#444444;"></div>
<div style="left:997.4px;top:359.4px;width:9px;height:305.1px;background:#2b2b2b;border-radius:0 0 3px 0;"></div>
<div style="left:997.4px;top:362.6px;width:8.2px;height:18px;background:#4a4a4a;border-radius:0 2.5px 2.5px 0;"></div>
<div class="t" style="left:1001.3px;top:371.6px;width:0;height:0;"><div class="t" style="left:-40px;top:-4px;width:80px;line-height:8px;text-align:center;font-size:5.7px;transform:rotate(-90deg);color:#ffffff;">Item</div></div>
<div style="left:997.4px;top:384px;width:8.2px;height:16.8px;background:#353535;border-radius:0 2.5px 2.5px 0;"></div>
<div class="t" style="left:1001.3px;top:392.4px;width:0;height:0;"><div class="t" style="left:-40px;top:-4px;width:80px;line-height:8px;text-align:center;font-size:5.7px;transform:rotate(-90deg);color:#e4e4e4;">Tool</div></div>
<div style="left:997.4px;top:404px;width:8.2px;height:18px;background:#353535;border-radius:0 2.5px 2.5px 0;"></div>
<div class="t" style="left:1001.3px;top:413px;width:0;height:0;"><div class="t" style="left:-40px;top:-4px;width:80px;line-height:8px;text-align:center;font-size:5.7px;transform:rotate(-90deg);color:#e4e4e4;">View</div></div>
<div style="left:997.4px;top:426.6px;width:8.2px;height:26.2px;background:#353535;border-radius:0 2.5px 2.5px 0;"></div>
<div class="t" style="left:1001.3px;top:439.7px;width:0;height:0;"><div class="t" style="left:-40px;top:-4px;width:80px;line-height:8px;text-align:center;font-size:5.7px;transform:rotate(-90deg);color:#e4e4e4;">Options</div></div>
<div style="left:997.4px;top:456.4px;width:8.2px;height:45.6px;background:#353535;border-radius:0 2.5px 2.5px 0;"></div>
<div class="t" style="left:1001.3px;top:479.2px;width:0;height:0;"><div class="t" style="left:-40px;top:-4px;width:80px;line-height:8px;text-align:center;font-size:5.7px;transform:rotate(-90deg);color:#e4e4e4;">Node Wrangler</div></div>
<div style="left:903.2px;top:359.4px;width:94.2px;height:11.6px;background:#484848;"></div>
<svg style="left:905.4px;top:362.2px;" width="6" height="6" viewBox="0 0 6 6"><path d="M1.2 1.56 L4.8 1.56 L3 4.62 Z" fill="#c8c8c8"/></svg>
<div class="t" style="top:362px;line-height:8px;font-size:6px;color:#e6e6e6;left:913.4px;">Node</div>
<div style="left:988.6px;top:364.7px;width:1.2px;height:1px;background:#606060;"></div><div style="left:991px;top:364.7px;width:1.2px;height:1px;background:#606060;"></div>
<div style="left:907.4px;top:374.6px;width:85.4px;height:8.6px;background:#5c5c5c;border-radius:2px;"></div>
<svg style="left:909px;top:375.4px;" width="7" height="7" viewBox="0 0 7 7"><path d="M1 2.8 Q1.6 0.8 3.6 0.8 Q5 0.8 5.8 2 M6 4.2 Q5.4 6.2 3.4 6.2 Q2 6.2 1.2 5" fill="none" stroke="#e0e0e0" stroke-width="0.8"/><path d="M4.6 2.2 H6.2 V0.6 M2.4 4.8 H0.8 V6.4" fill="none" stroke="#e0e0e0" stroke-width="0.7"/></svg>
<div class="t" style="top:376px;line-height:8px;font-size:5.5px;color:#e6e6e6;left:924px;width:60px;text-align:center;">Reset Node</div>
<div class="t" style="top:393px;line-height:8px;font-size:5.5px;color:#e0e0e0;left:910.8px;">Name:</div>
<div style="left:929.4px;top:391.8px;width:63.4px;height:8.2px;background:#1f1f1f;border-radius:2px;"></div>
<svg style="left:931px;top:392.7px;" width="8" height="7" viewBox="0 0 8 7"><rect x="0.6" y="0.8" width="4.8" height="5" fill="none" stroke="#e0e0e0" stroke-width="0.8"/><path d="M0.6 2 H5.4" stroke="#e0e0e0" stroke-width="1"/><circle cx="6.2" cy="4" r="0.8" fill="#e0e0e0"/></svg>
<div class="t" style="top:393px;line-height:8px;font-size:5.5px;color:#e6e6e6;left:940.6px;">UV Map</div>
<div class="t" style="top:405px;line-height:8px;font-size:5.5px;color:#e0e0e0;left:910.8px;">Label:</div>
<div style="left:929.4px;top:403.7px;width:63.4px;height:8.2px;background:#1f1f1f;border-radius:2px;"></div>
<svg style="left:931px;top:404.6px;" width="8" height="7" viewBox="0 0 8 7"><rect x="0.6" y="0.8" width="4.8" height="5" fill="none" stroke="#e0e0e0" stroke-width="0.8"/><path d="M0.6 2 H5.4" stroke="#e0e0e0" stroke-width="1"/><circle cx="6.2" cy="4" r="0.8" fill="#e0e0e0"/></svg>
<svg style="left:912.2px;top:418.6px;" width="6" height="6" viewBox="0 0 6 6"><path d="M1.64 1.3 L1.64 4.7 L4.53 3 Z" fill="#c8c8c8"/></svg>
<div style="left:920.8px;top:418.5px;width:6.2px;height:6.2px;background:#6a6a6a;border-radius:1px;"></div>
<div class="t" style="top:419px;line-height:8px;font-size:5.5px;color:#e6e6e6;left:929.8px;">Color</div>
<svg style="left:973.6px;top:418.4px;" width="8" height="7" viewBox="0 0 8 7"><path d="M0.4 1.2 H1.6 M0.4 3.4 H1.6 M0.4 5.6 H1.6 M2.8 1.2 H7.2 M2.8 3.4 H7.2 M2.8 5.6 H7.2" stroke="#b0b0b0" stroke-width="0.8"/></svg>
<div style="left:903.2px;top:427.4px;width:94.2px;height:11.2px;background:#484848;"></div>
<svg style="left:905.4px;top:430px;" width="6" height="6" viewBox="0 0 6 6"><path d="M1.56 1.2 L1.56 4.8 L4.62 3 Z" fill="#c8c8c8"/></svg>
<div class="t" style="top:430px;line-height:8px;font-size:6px;color:#e6e6e6;left:913.4px;">Properties</div>
<div style="left:988.6px;top:432.5px;width:1.2px;height:1px;background:#606060;"></div><div style="left:991px;top:432.5px;width:1.2px;height:1px;background:#606060;"></div>
<!-- properties -->
<div style="left:1008.4px;top:13px;width:191.6px;height:651.5px;background:#454545;border-radius:3px 0 0 3px;"></div>
<div style="left:1008.4px;top:13px;width:191.6px;height:12px;background:#393939;border-radius:3px 0 0 0;"></div>
<div style="left:1008.4px;top:25px;width:12.6px;height:639.5px;background:#252525;border-radius:0 0 0 3px;"></div>
<div style="left:1009.4px;top:28.8px;width:11.6px;height:13.2px;background:#2e2e2e;border-radius:2px 0 0 2px;"></div>
<div style="left:1009.4px;top:45.2px;width:11.6px;height:66.2px;background:#2e2e2e;border-radius:2px 0 0 2px;"></div>
<div style="left:1009.4px;top:114.6px;width:11.6px;height:92px;background:#2e2e2e;border-radius:2px 0 0 2px;"></div>
<div style="left:1009.4px;top:210.4px;width:11.6px;height:13.2px;background:#2e2e2e;border-radius:2px 0 0 2px;"></div>
<div style="left:1009.4px;top:193.5px;width:11.6px;height:13.1px;background:#454545;border-radius:2px 0 0 2px;"></div>
<svg style="left:1010.7px;top:31.4px;" width="8" height="8" viewBox="0 0 8 8"><path d="M1.6 0.8 V3 M1.6 3 Q0.6 3.4 1 4.8 V7.2 H2.2 V4.8 Q2.6 3.4 1.6 3" stroke="#e4e4e4" stroke-width="0.8" fill="#e4e4e4"/><path d="M4.6 0.8 V2.2 Q4.6 3.2 5.6 3.2 Q6.6 3.2 6.6 2.2 V0.8 M5.6 3.2 V7.2" stroke="#e4e4e4" stroke-width="0.9" fill="none"/></svg><svg style="left:1010.7px;top:47.8px;" width="8" height="8" viewBox="0 0 8 8"><rect x="0.8" y="1.8" width="5.6" height="4.6" fill="none" stroke="#e4e4e4" stroke-width="0.9"/><path d="M6.4 3 H7.6 V5.2 H6.4 M2 1.8 V0.8 H4.2 V1.8" stroke="#e4e4e4" stroke-width="0.7" fill="none"/></svg><svg style="left:1010.7px;top:61.2px;" width="8" height="8" viewBox="0 0 8 8"><rect x="0.8" y="1" width="6.4" height="2.4" fill="#e4e4e4"/><rect x="2" y="4.2" width="4" height="3" fill="none" stroke="#e4e4e4" stroke-width="0.8"/><path d="M0.8 3.4 V5.4 H2 M6 5.4 H7.2 V3.4" stroke="#e4e4e4" stroke-width="0.7" fill="none"/></svg><svg style="left:1010.7px;top:74px;" width="8" height="8" viewBox="0 0 8 8"><rect x="0.6" y="2.6" width="4.6" height="4.4" fill="#8a8a8a"/><rect x="2.4" y="1" width="4.8" height="4.4" fill="#e4e4e4"/><rect x="4.4" y="1.8" width="1.8" height="1.6" fill="#2b2b2b"/></svg><svg style="left:1010.7px;top:87.2px;" width="8" height="8" viewBox="0 0 8 8"><path d="M1 6 L2.6 0.8 L4.2 6 Z" fill="#e4e4e4"/><circle cx="5.4" cy="5.4" r="1.8" fill="none" stroke="#e4e4e4" stroke-width="0.8"/><rect x="5" y="1.2" width="1.6" height="1.6" fill="#e4e4e4"/></svg><svg style="left:1010.7px;top:100.8px;" width="8" height="8" viewBox="0 0 8 8"><circle cx="4" cy="4" r="3.1" fill="none" stroke="#d9475f" stroke-width="0.9"/><path d="M2 2.4 Q3.6 3 3 4.6 Q2.6 6 3.6 6.8 M4.6 1.2 Q4 2.6 5.4 3 Q6.6 3.2 6.8 4.4" stroke="#d9475f" stroke-width="0.9" fill="none"/></svg><svg style="left:1010.7px;top:117.2px;" width="8" height="8" viewBox="0 0 8 8"><rect x="2.2" y="2.2" width="3.6" height="3.6" fill="#e58a3a"/><path d="M0.8 2.4 V0.8 H2.4 M5.6 0.8 H7.2 V2.4 M7.2 5.6 V7.2 H5.6 M2.4 7.2 H0.8 V5.6" fill="none" stroke="#e58a3a" stroke-width="0.8"/></svg><svg style="left:1010.7px;top:130.6px;" width="8" height="8" viewBox="0 0 8 8"><path d="M1.2 6.8 L4.4 3.6" stroke="#4f8fe6" stroke-width="1.5" stroke-linecap="round"/><path d="M4 1.4 Q5.4 0.4 6.8 1.4 L5.4 2.6 L5.8 3.4 L7.2 2.4 Q7.4 4 6 4.6 Q4.6 5 4 3.6 Q3.4 2.4 4 1.4 Z" fill="#4f8fe6"/></svg><svg style="left:1010.7px;top:143.6px;" width="8" height="8" viewBox="0 0 8 8"><path d="M1.4 1.4 L6 2.6 L3 6.4 Z" fill="none" stroke="#4f8fe6" stroke-width="0.7"/><circle cx="1.4" cy="1.4" r="1" fill="#4f8fe6"/><circle cx="6.2" cy="2.6" r="0.9" fill="#4f8fe6"/><circle cx="3" cy="6.4" r="0.9" fill="#4f8fe6"/><circle cx="6" cy="6" r="0.7" fill="#4f8fe6"/></svg><svg style="left:1010.7px;top:156.6px;" width="8" height="8" viewBox="0 0 8 8"><circle cx="4" cy="4" r="1.2" fill="#4f8fe6"/><ellipse cx="4" cy="4" rx="3.2" ry="1.6" fill="none" stroke="#4f8fe6" stroke-width="0.7" transform="rotate(-30 4 4)"/><circle cx="4" cy="4" r="3" fill="none" stroke="#4f8fe6" stroke-width="0.6"/></svg><svg style="left:1010.7px;top:170.3px;" width="8" height="8" viewBox="0 0 8 8"><ellipse cx="4" cy="4" rx="3.2" ry="1.8" fill="none" stroke="#4f8fe6" stroke-width="0.9" transform="rotate(-35 4 4)"/><circle cx="3.4" cy="4.6" r="1.3" fill="#4f8fe6"/><path d="M5 2 L6.6 1.4" stroke="#4f8fe6" stroke-width="0.9"/></svg><svg style="left:1010.7px;top:183.3px;" width="8" height="8" viewBox="0 0 8 8"><path d="M1 1.2 H7 L4 7 Z" fill="none" stroke="#1fb58f" stroke-width="0.9"/><circle cx="1" cy="1.2" r="0.8" fill="#1fb58f"/><circle cx="7" cy="1.2" r="0.8" fill="#1fb58f"/><circle cx="4" cy="7" r="0.8" fill="#1fb58f"/></svg><svg style="left:1010.7px;top:196px;" width="8" height="8" viewBox="0 0 8 8"><circle cx="4" cy="4" r="3.1" fill="none" stroke="#e8586f" stroke-width="0.8"/><path d="M4 0.9 A3.1 3.1 0 0 0 1.4 5.8 L4 4 Z M4 4 L7.1 4 A3.1 3.1 0 0 1 4 7.1 Z" fill="#e8586f"/></svg><svg style="left:1010.7px;top:213px;" width="8" height="8" viewBox="0 0 8 8"><rect x="1" y="1" width="6" height="6" fill="none" stroke="#d9475f" stroke-width="0.7"/><path d="M1 1 H3 V3 H1 Z M5 1 H7 V3 H5 Z M3 3 H5 V5 H3 Z M1 5 H3 V7 H1 Z M5 5 H7 V7 H5 Z" fill="#d9475f"/></svg>
<div style="left:1011.6px;top:15px;width:14px;height:8.6px;background:#2c2c2c;border-radius:2px;"></div>
<svg style="left:1013px;top:16px;" width="8" height="7" viewBox="0 0 8 7"><rect x="0.6" y="0.6" width="5.6" height="2" fill="#e0e0e0"/><rect x="0.6" y="3.4" width="2.4" height="2.8" fill="#e0e0e0"/><rect x="3.8" y="3.4" width="2.4" height="2.8" fill="none" stroke="#e0e0e0" stroke-width="0.6"/></svg>
<svg style="left:1019.8px;top:16.6px;" width="6" height="6" viewBox="0 0 6 6"><path d="M1.4 2.2 L3 3.8 L4.6 2.2" fill="none" stroke="#c8c8c8" stroke-width="0.8" stroke-linecap="round" stroke-linejoin="round"/></svg>
<svg style="left:1033px;top:15.8px;" width="7" height="7" viewBox="0 0 7 7"><rect x="1.6" y="1.6" width="3.8" height="3.8" fill="#e6e6e6"/><path d="M0.4 1.8 V0.4 H1.8 M5.2 0.4 H6.6 V1.8 M6.6 5.2 V6.6 H5.2 M1.8 6.6 H0.4 V5.2" fill="none" stroke="#e6e6e6" stroke-width="0.7"/></svg>
<div class="t" style="top:16px;line-height:8px;font-size:5.5px;color:#d8d8d8;left:1044px;">Plane</div>
<svg style="left:1063.4px;top:17.6px;" width="3" height="4" viewBox="0 0 3 4"><path d="M0.8 0.4 L2.2 1.8 L0.8 3.2" fill="none" stroke="#6a6a6a" stroke-width="0.6"/></svg>
<svg style="left:1072px;top:15.8px;" width="7" height="7" viewBox="0 0 7 7"><circle cx="3.5" cy="3.5" r="2.9" fill="none" stroke="#e0e0e0" stroke-width="0.7"/><path d="M3.5 0.6 A2.9 2.9 0 0 0 1 5.2 L3.5 3.5 Z M3.5 3.5 L6.4 3.5 A2.9 2.9 0 0 1 3.5 6.4 Z" fill="#e0e0e0"/></svg>
<div class="t" style="top:16px;line-height:8px;font-size:5.5px;color:#d8d8d8;left:1083px;">Material.000</div>
<svg style="left:1187.6px;top:15.4px;" width="8" height="8" viewBox="0 0 8 8"><path d="M3.8 1 L6.4 3.6 M5.1 2.3 L3 4.4 M2.2 3.2 L4.4 5.4 M3.2 4.4 L1 6.8" stroke="#9a9a9a" stroke-width="0.8" stroke-linecap="round"/></svg>
<div style="left:1025px;top:27.6px;width:158.2px;height:19.6px;background:#2e2e2e;border-radius:2px;"></div>
<div style="left:1027.4px;top:31.6px;width:153.2px;height:8.4px;background:#676c7a;border-radius:1.5px;"></div>
<svg style="left:1028.6px;top:32.4px;" width="7" height="7" viewBox="0 0 7 7"><defs><radialGradient id="ms" cx="0.35" cy="0.35" r="0.7"><stop offset="0" stop-color="#fff"/><stop offset="1" stop-color="#9a9a9a"/></radialGradient></defs><circle cx="3.4" cy="3.4" r="3" fill="url(#ms)"/></svg>
<div class="t" style="top:33px;line-height:8px;font-size:5.5px;color:#f0f0f0;left:1039px;">Material.000</div>
<svg style="left:1028.6px;top:39.9px;" width="6" height="6" viewBox="0 0 6 6"><path d="M2.12 1.9 L2.12 4.1 L3.99 3 Z" fill="#c8c8c8"/></svg>
<div style="left:1106.2px;top:42.4px;width:1.2px;height:1px;background:#505050;"></div><div style="left:1108.6px;top:42.4px;width:1.2px;height:1px;background:#505050;"></div>
<div style="left:1187.4px;top:29.4px;width:8.6px;height:8.2px;background:#585858;border-radius:2px 2px 0 0;"></div>
<svg style="left:1188.8px;top:30.6px;" width="6" height="6" viewBox="0 0 6 6"><path d="M3 0.8 V5.2 M0.8 3 H5.2" stroke="#e0e0e0" stroke-width="0.8"/></svg>
<div style="left:1187.4px;top:38.2px;width:8.6px;height:8.2px;background:#585858;border-radius:0 0 2px 2px;"></div>
<svg style="left:1188.8px;top:39.4px;" width="6" height="6" viewBox="0 0 6 6"><path d="M0.8 3 H5.2" stroke="#e0e0e0" stroke-width="0.8"/></svg>
<div style="left:1187.4px;top:48.4px;width:8.6px;height:8.4px;background:#2c2c2c;border-radius:2px;"></div>
<svg style="left:1188.7px;top:49.8px;" width="6" height="6" viewBox="0 0 6 6"><path d="M1.4 2.2 L3 3.8 L4.6 2.2" fill="none" stroke="#c8c8c8" stroke-width="0.8" stroke-linecap="round" stroke-linejoin="round"/></svg>
<div style="left:1025.4px;top:60px;width:14.4px;height:8.4px;background:#2c2c2c;border-radius:2px 0 0 2px;"></div>
<svg style="left:1026.6px;top:60.8px;" width="7" height="7" viewBox="0 0 7 7"><circle cx="3.5" cy="3.5" r="2.9" fill="none" stroke="#e0e0e0" stroke-width="0.7"/><path d="M3.5 0.6 A2.9 2.9 0 0 0 1 5.2 L3.5 3.5 Z M3.5 3.5 L6.4 3.5 A2.9 2.9 0 0 1 3.5 6.4 Z" fill="#e0e0e0"/></svg>
<svg style="left:1033.6px;top:61.5px;" width="6" height="6" viewBox="0 0 6 6"><path d="M1.4 2.2 L3 3.8 L4.6 2.2" fill="none" stroke="#c8c8c8" stroke-width="0.8" stroke-linecap="round" stroke-linejoin="round"/></svg>
<div style="left:1040.4px;top:60px;width:64.6px;height:8.4px;background:#1d1d1d;"></div>
<div class="t" style="top:61px;line-height:8px;font-size:5.5px;color:#e6e6e6;left:1042.8px;">Material.000</div>
<div style="left:1105.6px;top:60px;width:8.6px;height:8.4px;background:#585858;"></div>
<div style="left:1114.8px;top:60px;width:8.6px;height:8.4px;background:#585858;"></div>
<div style="left:1124px;top:60px;width:8.2px;height:8.4px;background:#585858;border-radius:0 2px 2px 0;"></div>
<svg style="left:1106.8px;top:61px;" width="7" height="7" viewBox="0 0 7 7"><path d="M3.2 0.6 L5.8 1.4 V3.6 Q5.6 5.4 3.2 6.4 Q0.8 5.4 0.6 3.6 V1.4 Z" fill="none" stroke="#b8b8b8" stroke-width="0.7"/></svg>
<svg style="left:1116.2px;top:61px;" width="7" height="7" viewBox="0 0 7 7"><path d="M2.2 1.6 V0.6 H5.6 V4.6 H4.2" fill="none" stroke="#e6e6e6" stroke-width="0.7"/><rect x="0.8" y="1.8" width="3.4" height="4" fill="#e6e6e6"/></svg>
<svg style="left:1125.4px;top:61.2px;" width="6" height="6" viewBox="0 0 6 6"><path d="M1.2 1.2 L4.8 4.8 M4.8 1.2 L1.2 4.8" stroke="#e6e6e6" stroke-width="0.8"/></svg>
<div style="left:1138px;top:60px;width:58px;height:8.4px;background:#2c2c2c;border-radius:2px;"></div>
<div class="t" style="top:61px;line-height:8px;font-size:5.5px;color:#d8d8d8;left:1141.4px;">Data</div>
<svg style="left:1189.4px;top:61.5px;" width="6" height="6" viewBox="0 0 6 6"><path d="M1.4 2.2 L3 3.8 L4.6 2.2" fill="none" stroke="#c8c8c8" stroke-width="0.8" stroke-linecap="round" stroke-linejoin="round"/></svg>
<div style="left:1021px;top:72.4px;width:179px;height:11.6px;background:#474747;"></div><svg style="left:1023.6px;top:75.2px;" width="6" height="6" viewBox="0 0 6 6"><path d="M1.2 1.56 L4.8 1.56 L3 4.62 Z" fill="#c8c8c8"/></svg><div class="t" style="top:75px;line-height:8px;font-size:6px;color:#e6e6e6;left:1031.2px;">Preview</div><div style="left:1192.2px;top:77.7px;width:1.2px;height:1px;background:#5c5c5c;"></div><div style="left:1194.6px;top:77.7px;width:1.2px;height:1px;background:#5c5c5c;"></div>
<div style="left:1021px;top:84px;width:179px;height:84px;background:#3d3d3d;"></div>
<svg style="left:1020px;top:84px;" width="160" height="80" viewBox="0 0 1200 600"><defs><clipPath id="pvc"><rect x="37" y="28" width="1095" height="527"/></clipPath><radialGradient id="sph" cx="0.3" cy="0.34" r="0.85"><stop offset="0" stop-color="#ffffff"/><stop offset="0.55" stop-color="#fcfcfc"/><stop offset="0.8" stop-color="#e2e2e2"/><stop offset="1" stop-color="#b8b8b8"/></radialGradient><linearGradient id="flr" x1="0" y1="0" x2="1" y2="0"><stop offset="0" stop-color="#000" stop-opacity="0"/><stop offset="0.5" stop-color="#000" stop-opacity="0.06"/><stop offset="1" stop-color="#000" stop-opacity="0.34"/></linearGradient><radialGradient id="shd"><stop offset="0" stop-color="#000" stop-opacity="0.75"/><stop offset="0.55" stop-color="#000" stop-opacity="0.5"/><stop offset="1" stop-color="#000" stop-opacity="0"/></radialGradient><linearGradient id="sphd" x1="0" y1="0.38" x2="1" y2="0.62"><stop offset="0.5" stop-color="#000" stop-opacity="0"/><stop offset="0.64" stop-color="#000" stop-opacity="0.16"/><stop offset="0.8" stop-color="#000" stop-opacity="0.42"/><stop offset="1" stop-color="#000" stop-opacity="0.62"/></linearGradient><linearGradient id="sphb" x1="0" y1="0" x2="0" y2="1"><stop offset="0.7" stop-color="#000" stop-opacity="0"/><stop offset="1" stop-color="#000" stop-opacity="0.3"/></linearGradient><linearGradient id="haze" x1="0" y1="0" x2="0" y2="1"><stop offset="0" stop-color="#6a6a6a" stop-opacity="0.3"/><stop offset="0.4" stop-color="#6a6a6a" stop-opacity="0"/></linearGradient></defs><g clip-path="url(#pvc)"><rect x="37" y="28" width="1095" height="527" fill="#3e3e3e"/><path d="M99.9 28 L196.92 28 L179.83 65 L78.53 65 Z M293.94 28 L390.96 28 L382.41 65 L281.12 65 Z M487.98 28 L585 28 L585 65 L483.71 65 Z M682.02 28 L779.04 28 L787.59 65 L686.29 65 Z M876.06 28 L973.08 28 L990.17 65 L888.88 65 Z M1070.1 28 L1167.12 28 L1192.76 65 L1091.47 65 Z M-22.76 65 L78.53 65 L52.13 110.72 L-54.45 110.72 Z M179.83 65 L281.12 65 L265.28 110.72 L158.7 110.72 Z M382.41 65 L483.71 65 L478.43 110.72 L371.85 110.72 Z M585 65 L686.29 65 L691.57 110.72 L585 110.72 Z M787.59 65 L888.88 65 L904.72 110.72 L798.15 110.72 Z M990.17 65 L1091.47 65 L1117.87 110.72 L1011.3 110.72 Z M52.13 110.72 L158.7 110.72 L135.26 161.47 L22.82 161.47 Z M265.28 110.72 L371.85 110.72 L360.13 161.47 L247.69 161.47 Z M478.43 110.72 L585 110.72 L585 161.47 L472.56 161.47 Z M691.57 110.72 L798.15 110.72 L809.87 161.47 L697.44 161.47 Z M904.72 110.72 L1011.3 110.72 L1034.74 161.47 L922.31 161.47 Z M1117.87 110.72 L1224.45 110.72 L1259.62 161.47 L1147.18 161.47 Z M135.26 161.47 L247.69 161.47 L228.06 218.13 L109.08 218.13 Z M360.13 161.47 L472.56 161.47 L466.02 218.13 L347.04 218.13 Z M585 161.47 L697.44 161.47 L703.98 218.13 L585 218.13 Z M809.87 161.47 L922.31 161.47 L941.94 218.13 L822.96 218.13 Z M1034.74 161.47 L1147.18 161.47 L1179.9 218.13 L1060.92 218.13 Z M-9.9 218.13 L109.08 218.13 L79.67 281.79 L-46.66 281.79 Z M228.06 218.13 L347.04 218.13 L332.33 281.79 L206 281.79 Z M466.02 218.13 L585 218.13 L585 281.79 L458.67 281.79 Z M703.98 218.13 L822.96 218.13 L837.67 281.79 L711.33 281.79 Z M941.94 218.13 L1060.92 218.13 L1090.33 281.79 L964 281.79 Z M79.67 281.79 L206 281.79 L181.04 353.84 L46.38 353.84 Z M332.33 281.79 L458.67 281.79 L450.35 353.84 L315.69 353.84 Z M585 281.79 L711.33 281.79 L719.65 353.84 L585 353.84 Z M837.67 281.79 L964 281.79 L988.96 353.84 L854.31 353.84 Z M1090.33 281.79 L1216.66 281.79 L1258.27 353.84 L1123.62 353.84 Z M-88.27 353.84 L46.38 353.84 L8.4 436.05 L-135.75 436.05 Z M181.04 353.84 L315.69 353.84 L296.7 436.05 L152.55 436.05 Z M450.35 353.84 L585 353.84 L585 436.05 L440.85 436.05 Z M719.65 353.84 L854.31 353.84 L873.3 436.05 L729.15 436.05 Z M988.96 353.84 L1123.62 353.84 L1161.6 436.05 L1017.45 436.05 Z M8.4 436.05 L152.55 436.05 L119.74 530.73 L-35.34 530.73 Z M296.7 436.05 L440.85 436.05 L429.91 530.73 L274.83 530.73 Z M585 436.05 L729.15 436.05 L740.09 530.73 L585 530.73 Z M873.3 436.05 L1017.45 436.05 L1050.26 530.73 L895.17 530.73 Z M119.74 530.73 L274.83 530.73 L249.37 640.96 L81.55 640.96 Z M429.91 530.73 L585 530.73 L585 640.96 L417.18 640.96 Z M740.09 530.73 L895.17 530.73 L920.63 640.96 L752.82 640.96 Z M1050.26 530.73 L1205.34 530.73 L1256.27 640.96 L1088.45 640.96 Z" fill="#747474"/><rect x="37" y="28" width="1095" height="527" fill="url(#haze)"/><rect x="37" y="28" width="1095" height="527" fill="url(#flr)"/><ellipse cx="840" cy="432" rx="320" ry="105" fill="url(#shd)" transform="rotate(-6 840 432)"/><circle cx="580" cy="296" r="216" fill="url(#sph)"/><circle cx="580" cy="296" r="216" fill="url(#sphd)"/><circle cx="580" cy="296" r="216" fill="url(#sphb)"/><path d="M418 426 Q640 350 752 222" fill="none" stroke="#4a4a4a" stroke-width="5"/><path d="M420 434 Q642 358 754 232" fill="none" stroke="#ffffff" stroke-width="3" opacity="0.7"/><path d="M392 178 Q520 118 640 92" fill="none" stroke="#d2d2d2" stroke-width="2.5"/><path d="M560 94 L690 108" fill="none" stroke="#c8c8c8" stroke-width="3" stroke-dasharray="6 8"/></g></svg>
<div style="left:1096.2px;top:160.5px;width:1.2px;height:1px;background:#585858;"></div><div style="left:1098.6px;top:160.5px;width:1.2px;height:1px;background:#585858;"></div>
<div style="left:1176px;top:88px;width:19.8px;height:64.4px;background:#585858;border-radius:2px;"></div>
<div style="left:1176px;top:97.2px;width:19.8px;height:9.2px;background:#5680c2;"></div>
<div style="left:1176px;top:115.3px;width:19.8px;height:0.6px;background:#424242;"></div>
<div style="left:1176px;top:124.5px;width:19.8px;height:0.6px;background:#424242;"></div>
<div style="left:1176px;top:133.7px;width:19.8px;height:0.6px;background:#424242;"></div>
<div style="left:1176px;top:142.9px;width:19.8px;height:0.6px;background:#424242;"></div>
<svg style="left:1180.9px;top:88.2px;" width="10" height="9" viewBox="0 0 8 7.2"><rect x="1.6" y="1.2" width="4.8" height="4.8" fill="none" stroke="#e0e0e0" stroke-width="0.7"/></svg>
<svg style="left:1180.9px;top:97.4px;" width="10" height="9" viewBox="0 0 8 7.2"><circle cx="4" cy="3.6" r="2.6" fill="none" stroke="#ffffff" stroke-width="0.7"/><ellipse cx="4" cy="3.6" rx="2.6" ry="0.9" fill="none" stroke="#ffffff" stroke-width="0.6"/></svg>
<svg style="left:1180.9px;top:106.6px;" width="10" height="9" viewBox="0 0 8 7.2"><path d="M1.6 2.2 H5.2 V6 H1.6 Z M1.6 2.2 L2.8 1 H6.4 V4.8 L5.2 6 M5.2 2.2 L6.4 1" fill="none" stroke="#e0e0e0" stroke-width="0.7"/></svg>
<svg style="left:1180.9px;top:115.8px;" width="10" height="9" viewBox="0 0 8 7.2"><path d="M1.6 6 Q2 3 4 1.4 M3.4 6 Q3.8 4 5.4 2.6 M5 6 Q5.4 4.8 6.4 4" fill="none" stroke="#e0e0e0" stroke-width="0.7"/></svg>
<svg style="left:1180.9px;top:125px;" width="10" height="9" viewBox="0 0 8 7.2"><path d="M1.8 6.2 H6.2 Q6.4 4.6 5.4 3.8 Q6.2 2 4.6 1.2 L3.2 1.6 Q2.2 2.6 2.8 3.8 Q1.6 4.6 1.8 6.2 Z" fill="none" stroke="#e0e0e0" stroke-width="0.7"/></svg>
<svg style="left:1180.9px;top:134.2px;" width="10" height="9" viewBox="0 0 8 7.2"><path d="M2.6 1.2 L1 2.4 L2 3.4 L2.6 3 V6.2 H5.4 V3 L6 3.4 L7 2.4 L5.4 1.2 Q4 2.2 2.6 1.2 Z" fill="none" stroke="#e0e0e0" stroke-width="0.7"/></svg>
<svg style="left:1180.9px;top:143.4px;" width="10" height="9" viewBox="0 0 8 7.2"><path d="M4 1 Q6 3.6 5.6 4.8 Q5.2 6.2 4 6.2 Q2.8 6.2 2.4 4.8 Q2 3.6 4 1 Z" fill="none" stroke="#e0e0e0" stroke-width="0.7"/></svg>
<div style="left:1176px;top:156.4px;width:19.8px;height:8.2px;background:#585858;border-radius:2px;"></div>
<svg style="left:1181.4px;top:156.4px;" width="9" height="8.1" viewBox="0 0 8 7.2"><circle cx="4" cy="3.6" r="2.8" fill="#e0e0e0"/><path d="M2.4 2.2 Q3.8 2.8 3.2 4.2 Q3 5.4 3.8 6 M4.6 1 Q4.2 2.4 5.4 2.8 Q6.4 3 6.6 4" stroke="#585858" stroke-width="0.8" fill="none"/></svg>
<div style="left:1021px;top:168.9px;width:179px;height:11.1px;background:#474747;"></div><svg style="left:1023.6px;top:171.45px;" width="6" height="6" viewBox="0 0 6 6"><path d="M1.2 1.56 L4.8 1.56 L3 4.62 Z" fill="#c8c8c8"/></svg><div class="t" style="top:172px;line-height:8px;font-size:6px;color:#e6e6e6;left:1031.2px;">Surface</div><div style="left:1192.2px;top:173.95px;width:1.2px;height:1px;background:#5c5c5c;"></div><div style="left:1194.6px;top:173.95px;width:1.2px;height:1px;background:#5c5c5c;"></div>
<div style="left:1021px;top:180px;width:179px;height:378.6px;background:#3d3d3d;"></div>
<div class="t" style="top:186px;line-height:8px;font-size:5.5px;color:#d8d8d8;right:95.2px;text-align:right;">Surface</div><div style="left:1113px;top:184.6px;width:82.4px;height:8px;background:#2b2b2b;border-radius:2px;"></div><div class="t" style="top:186px;line-height:8px;font-size:5.5px;color:#e0e0e0;left:1116.2px;">Principled BSDF</div><svg style="left:1189.4px;top:186.6px;" width="4" height="4" viewBox="0 0 4 4"><circle cx="2" cy="2" r="1.25" fill="none" stroke="#dedede" stroke-width="0.55"/></svg>
<div style="left:1113px;top:201.5px;width:82.4px;height:8px;background:#2b2b2b;border-radius:2px;"></div><div class="t" style="top:202px;line-height:8px;font-size:5.5px;color:#d8d8d8;left:1116.2px;">GGX</div><svg style="left:1188.6px;top:202.8px;" width="6" height="6" viewBox="0 0 6 6"><path d="M1.4 2.2 L3 3.8 L4.6 2.2" fill="none" stroke="#c8c8c8" stroke-width="0.8" stroke-linecap="round" stroke-linejoin="round"/></svg>
<div style="left:1113px;top:211.9px;width:82.4px;height:8px;background:#2b2b2b;border-radius:2px;"></div><div class="t" style="top:213px;line-height:8px;font-size:5.5px;color:#d8d8d8;left:1116.2px;">Christensen-Burley</div><svg style="left:1188.6px;top:213.2px;" width="6" height="6" viewBox="0 0 6 6"><path d="M1.4 2.2 L3 3.8 L4.6 2.2" fill="none" stroke="#c8c8c8" stroke-width="0.8" stroke-linecap="round" stroke-linejoin="round"/></svg>
<div class="t" style="top:225px;line-height:8px;font-size:5.5px;color:#d8d8d8;right:95.2px;text-align:right;">Base Color</div><div style="left:1113px;top:223.5px;width:82.4px;height:8px;background:#2b2b2b;border-radius:2px;"></div><div class="t" style="top:225px;line-height:8px;font-size:5.5px;color:#e0e0e0;left:1116.2px;">Material.001 Base Color.001</div><svg style="left:1189.4px;top:225.5px;" width="4" height="4" viewBox="0 0 4 4"><circle cx="2" cy="2" r="1.25" fill="none" stroke="#dedede" stroke-width="0.55"/></svg><svg style="left:1023.8px;top:224.5px;" width="6" height="6" viewBox="0 0 6 6"><path d="M1.64 1.3 L1.64 4.7 L4.53 3 Z" fill="#c8c8c8"/></svg>
<div class="t" style="top:236px;line-height:8px;font-size:5.5px;color:#d8d8d8;right:95.2px;text-align:right;">Subsurface</div><div style="left:1113px;top:235.3px;width:73.8px;height:8px;background:#565656;border-radius:2px 0 0 2px;"></div><div class="t" style="top:236px;line-height:8px;font-size:5.5px;color:#ececec;left:1129.9px;width:40px;text-align:center;">0.000</div>
<div style="left:1187.3px;top:235.3px;width:8.1px;height:8px;background:#323232;border-radius:0 2px 2px 0;"></div><svg style="left:1189.4px;top:237.3px;" width="4" height="4" viewBox="0 0 4 4"><circle cx="2" cy="2" r="1.25" fill="none" stroke="#dedede" stroke-width="0.55"/></svg>
<div class="t" style="top:248px;line-height:8px;font-size:5.5px;color:#d8d8d8;right:95.2px;text-align:right;">Subsurface Radius</div><div style="left:1113px;top:246.7px;width:69.6px;height:8.6px;background:#565656;"></div><div class="t" style="top:248px;line-height:8px;font-size:5.5px;color:#ececec;left:1127.8px;width:40px;text-align:center;">1.000</div>
<div style="left:1113px;top:255.7px;width:69.6px;height:8.6px;background:#565656;"></div><div class="t" style="top:257px;line-height:8px;font-size:5.5px;color:#ececec;left:1127.8px;width:40px;text-align:center;">0.200</div>
<div style="left:1113px;top:264.7px;width:69.6px;height:8.6px;background:#565656;"></div><div class="t" style="top:266px;line-height:8px;font-size:5.5px;color:#ececec;left:1127.8px;width:40px;text-align:center;">0.100</div>
<div style="left:1113px;top:255.45px;width:69.6px;height:0.5px;background:#484848;"></div>
<div style="left:1113px;top:264.45px;width:69.6px;height:0.5px;background:#484848;"></div>
<div style="left:1187.4px;top:247px;width:8px;height:8.2px;background:#323232;border-radius:2px;"></div>
<svg style="left:1189.4px;top:249px;" width="4" height="4" viewBox="0 0 4 4"><circle cx="2" cy="2" r="1.25" fill="none" stroke="#dedede" stroke-width="0.55"/></svg>
<div class="t" style="top:278px;line-height:8px;font-size:5.5px;color:#d8d8d8;right:95.2px;text-align:right;">Subsurface Color</div>
<div style="left:1113px;top:277px;width:73.8px;height:8px;background:#eaeaea;border-radius:2px 0 0 2px;"></div>
<div style="left:1187.3px;top:277px;width:8.1px;height:8px;background:#323232;border-radius:0 2px 2px 0;"></div><svg style="left:1189.4px;top:279px;" width="4" height="4" viewBox="0 0 4 4"><circle cx="2" cy="2" r="1.25" fill="none" stroke="#dedede" stroke-width="0.55"/></svg>
<div class="t" style="top:290px;line-height:8px;font-size:5.5px;color:#d8d8d8;right:95.2px;text-align:right;">Metallic</div><div style="left:1113px;top:289px;width:73.8px;height:8px;background:#565656;border-radius:2px 0 0 2px;"></div><div class="t" style="top:290px;line-height:8px;font-size:5.5px;color:#ececec;left:1129.9px;width:40px;text-align:center;">0.000</div>
<div style="left:1187.3px;top:289px;width:8.1px;height:8px;background:#323232;border-radius:0 2px 2px 0;"></div><svg style="left:1189.4px;top:291px;" width="4" height="4" viewBox="0 0 4 4"><circle cx="2" cy="2" r="1.25" fill="none" stroke="#dedede" stroke-width="0.55"/></svg>
<div class="t" style="top:302px;line-height:8px;font-size:5.5px;color:#d8d8d8;right:95.2px;text-align:right;">Specular</div><div style="left:1113px;top:300.8px;width:73.8px;height:8px;background:#565656;border-radius:2px 0 0 2px;"></div><div style="left:1113px;top:300.8px;width:36.9px;height:8px;background:#5680c2;border-radius:2px 0 0 2px;"></div><div class="t" style="top:302px;line-height:8px;font-size:5.5px;color:#ececec;left:1129.9px;width:40px;text-align:center;">0.500</div>
<div style="left:1187.3px;top:300.8px;width:8.1px;height:8px;background:#323232;border-radius:0 2px 2px 0;"></div><svg style="left:1189.4px;top:302.8px;" width="4" height="4" viewBox="0 0 4 4"><circle cx="2" cy="2" r="1.25" fill="none" stroke="#dedede" stroke-width="0.55"/></svg>
<div class="t" style="top:313px;line-height:8px;font-size:5.5px;color:#d8d8d8;right:95.2px;text-align:right;">Specular Tint</div><div style="left:1113px;top:312.5px;width:73.8px;height:8px;background:#565656;border-radius:2px 0 0 2px;"></div><div class="t" style="top:313px;line-height:8px;font-size:5.5px;color:#ececec;left:1129.9px;width:40px;text-align:center;">0.000</div>
<div style="left:1187.3px;top:312.5px;width:8.1px;height:8px;background:#323232;border-radius:0 2px 2px 0;"></div><svg style="left:1189.4px;top:314.5px;" width="4" height="4" viewBox="0 0 4 4"><circle cx="2" cy="2" r="1.25" fill="none" stroke="#dedede" stroke-width="0.55"/></svg>
<div class="t" style="top:325px;line-height:8px;font-size:5.5px;color:#d8d8d8;right:95.2px;text-align:right;">Roughness</div><div style="left:1113px;top:324.3px;width:73.8px;height:8px;background:#565656;border-radius:2px 0 0 2px;"></div><div style="left:1113px;top:324.3px;width:36.9px;height:8px;background:#5680c2;border-radius:2px 0 0 2px;"></div><div class="t" style="top:325px;line-height:8px;font-size:5.5px;color:#ececec;left:1129.9px;width:40px;text-align:center;">0.500</div>
<div style="left:1187.3px;top:324.3px;width:8.1px;height:8px;background:#323232;border-radius:0 2px 2px 0;"></div><svg style="left:1189.4px;top:326.3px;" width="4" height="4" viewBox="0 0 4 4"><circle cx="2" cy="2" r="1.25" fill="none" stroke="#dedede" stroke-width="0.55"/></svg>
<div class="t" style="top:337px;line-height:8px;font-size:5.5px;color:#d8d8d8;right:95.2px;text-align:right;">Anisotropic</div><div style="left:1113px;top:336px;width:73.8px;height:8px;background:#565656;border-radius:2px 0 0 2px;"></div><div class="t" style="top:337px;line-height:8px;font-size:5.5px;color:#ececec;left:1129.9px;width:40px;text-align:center;">0.000</div>
<div style="left:1187.3px;top:336px;width:8.1px;height:8px;background:#323232;border-radius:0 2px 2px 0;"></div><svg style="left:1189.4px;top:338px;" width="4" height="4" viewBox="0 0 4 4"><circle cx="2" cy="2" r="1.25" fill="none" stroke="#dedede" stroke-width="0.55"/></svg>
<div class="t" style="top:349px;line-height:8px;font-size:5.5px;color:#d8d8d8;right:95.2px;text-align:right;">Anisotropic Rotation</div><div style="left:1113px;top:347.6px;width:73.8px;height:8px;background:#565656;border-radius:2px 0 0 2px;"></div><div class="t" style="top:349px;line-height:8px;font-size:5.5px;color:#ececec;left:1129.9px;width:40px;text-align:center;">0.000</div>
<div style="left:1187.3px;top:347.6px;width:8.1px;height:8px;background:#323232;border-radius:0 2px 2px 0;"></div><svg style="left:1189.4px;top:349.6px;" width="4" height="4" viewBox="0 0 4 4"><circle cx="2" cy="2" r="1.25" fill="none" stroke="#dedede" stroke-width="0.55"/></svg>
<div class="t" style="top:360px;line-height:8px;font-size:5.5px;color:#d8d8d8;right:95.2px;text-align:right;">Sheen</div><div style="left:1113px;top:359.3px;width:73.8px;height:8px;background:#565656;border-radius:2px 0 0 2px;"></div><div class="t" style="top:360px;line-height:8px;font-size:5.5px;color:#ececec;left:1129.9px;width:40px;text-align:center;">0.000</div>
<div style="left:1187.3px;top:359.3px;width:8.1px;height:8px;background:#323232;border-radius:0 2px 2px 0;"></div><svg style="left:1189.4px;top:361.3px;" width="4" height="4" viewBox="0 0 4 4"><circle cx="2" cy="2" r="1.25" fill="none" stroke="#dedede" stroke-width="0.55"/></svg>
<div class="t" style="top:372px;line-height:8px;font-size:5.5px;color:#d8d8d8;right:95.2px;text-align:right;">Sheen Tint</div><div style="left:1113px;top:371px;width:73.8px;height:8px;background:#565656;border-radius:2px 0 0 2px;"></div><div style="left:1113px;top:371px;width:36.9px;height:8px;background:#5680c2;border-radius:2px 0 0 2px;"></div><div class="t" style="top:372px;line-height:8px;font-size:5.5px;color:#ececec;left:1129.9px;width:40px;text-align:center;">0.500</div>
<div style="left:1187.3px;top:371px;width:8.1px;height:8px;background:#323232;border-radius:0 2px 2px 0;"></div><svg style="left:1189.4px;top:373px;" width="4" height="4" viewBox="0 0 4 4"><circle cx="2" cy="2" r="1.25" fill="none" stroke="#dedede" stroke-width="0.55"/></svg>
<div class="t" style="top:384px;line-height:8px;font-size:5.5px;color:#d8d8d8;right:95.2px;text-align:right;">Clearcoat</div><div style="left:1113px;top:382.7px;width:73.8px;height:8px;background:#565656;border-radius:2px 0 0 2px;"></div><div class="t" style="top:384px;line-height:8px;font-size:5.5px;color:#ececec;left:1129.9px;width:40px;text-align:center;">0.000</div>
<div style="left:1187.3px;top:382.7px;width:8.1px;height:8px;background:#323232;border-radius:0 2px 2px 0;"></div><svg style="left:1189.4px;top:384.7px;" width="4" height="4" viewBox="0 0 4 4"><circle cx="2" cy="2" r="1.25" fill="none" stroke="#dedede" stroke-width="0.55"/></svg>
<div class="t" style="top:395px;line-height:8px;font-size:5.5px;color:#d8d8d8;right:95.2px;text-align:right;">Clearcoat Roughness</div><div style="left:1113px;top:394.4px;width:73.8px;height:8px;background:#565656;border-radius:2px 0 0 2px;"></div><div style="left:1113px;top:394.4px;width:1.48px;height:8px;background:#5680c2;border-radius:2px 0 0 2px;"></div><div class="t" style="top:395px;line-height:8px;font-size:5.5px;color:#ececec;left:1129.9px;width:40px;text-align:center;">0.030</div>
<div style="left:1187.3px;top:394.4px;width:8.1px;height:8px;background:#323232;border-radius:0 2px 2px 0;"></div><svg style="left:1189.4px;top:396.4px;" width="4" height="4" viewBox="0 0 4 4"><circle cx="2" cy="2" r="1.25" fill="none" stroke="#dedede" stroke-width="0.55"/></svg>
<div class="t" style="top:407px;line-height:8px;font-size:5.5px;color:#d8d8d8;right:95.2px;text-align:right;">IOR</div><div style="left:1113px;top:406.1px;width:73.8px;height:8px;background:#565656;border-radius:2px 0 0 2px;"></div><div class="t" style="top:407px;line-height:8px;font-size:5.5px;color:#ececec;left:1129.9px;width:40px;text-align:center;">1.450</div>
<div style="left:1187.3px;top:406.1px;width:8.1px;height:8px;background:#323232;border-radius:0 2px 2px 0;"></div><svg style="left:1189.4px;top:408.1px;" width="4" height="4" viewBox="0 0 4 4"><circle cx="2" cy="2" r="1.25" fill="none" stroke="#dedede" stroke-width="0.55"/></svg>
<div class="t" style="top:419px;line-height:8px;font-size:5.5px;color:#d8d8d8;right:95.2px;text-align:right;">Transmission</div><div style="left:1113px;top:417.8px;width:73.8px;height:8px;background:#565656;border-radius:2px 0 0 2px;"></div><div class="t" style="top:419px;line-height:8px;font-size:5.5px;color:#ececec;left:1129.9px;width:40px;text-align:center;">0.000</div>
<div style="left:1187.3px;top:417.8px;width:8.1px;height:8px;background:#323232;border-radius:0 2px 2px 0;"></div><svg style="left:1189.4px;top:419.8px;" width="4" height="4" viewBox="0 0 4 4"><circle cx="2" cy="2" r="1.25" fill="none" stroke="#dedede" stroke-width="0.55"/></svg>
<div class="t" style="top:430px;line-height:8px;font-size:5.5px;color:#d8d8d8;right:95.2px;text-align:right;">Transmission Roughness</div><div style="left:1113px;top:429.5px;width:73.8px;height:8px;background:#565656;border-radius:2px 0 0 2px;"></div><div class="t" style="top:430px;line-height:8px;font-size:5.5px;color:#ececec;left:1129.9px;width:40px;text-align:center;">0.000</div>
<div style="left:1187.3px;top:429.5px;width:8.1px;height:8px;background:#323232;border-radius:0 2px 2px 0;"></div><svg style="left:1189.4px;top:431.5px;" width="4" height="4" viewBox="0 0 4 4"><circle cx="2" cy="2" r="1.25" fill="none" stroke="#dedede" stroke-width="0.55"/></svg>
<div class="t" style="top:442px;line-height:8px;font-size:5.5px;color:#d8d8d8;right:95.2px;text-align:right;">Emission</div>
<div style="left:1113px;top:441.2px;width:73.8px;height:8px;background:#000000;border-radius:2px 0 0 2px;"></div>
<div style="left:1187.3px;top:441.2px;width:8.1px;height:8px;background:#323232;border-radius:0 2px 2px 0;"></div><svg style="left:1189.4px;top:443.2px;" width="4" height="4" viewBox="0 0 4 4"><circle cx="2" cy="2" r="1.25" fill="none" stroke="#dedede" stroke-width="0.55"/></svg>
<div class="t" style="top:454px;line-height:8px;font-size:5.5px;color:#d8d8d8;right:95.2px;text-align:right;">Alpha</div><div style="left:1113px;top:453px;width:73.8px;height:8px;background:#565656;border-radius:2px 0 0 2px;"></div><div style="left:1113px;top:453px;width:73.8px;height:8px;background:#5680c2;border-radius:2px 0 0 2px;"></div><div class="t" style="top:454px;line-height:8px;font-size:5.5px;color:#ececec;left:1129.9px;width:40px;text-align:center;">1.000</div>
<div style="left:1187.3px;top:453px;width:8.1px;height:8px;background:#323232;border-radius:0 2px 2px 0;"></div><svg style="left:1189.4px;top:455px;" width="4" height="4" viewBox="0 0 4 4"><circle cx="2" cy="2" r="1.25" fill="none" stroke="#dedede" stroke-width="0.55"/></svg>
<div class="t" style="top:466px;line-height:8px;font-size:5.5px;color:#d8d8d8;right:95.2px;text-align:right;">Normal</div><div style="left:1113px;top:464.6px;width:82.4px;height:8px;background:#2b2b2b;border-radius:2px;"></div><div class="t" style="top:466px;line-height:8px;font-size:5.5px;color:#e0e0e0;left:1116.2px;">Bump</div><svg style="left:1189.4px;top:466.6px;" width="4" height="4" viewBox="0 0 4 4"><circle cx="2" cy="2" r="1.25" fill="none" stroke="#dedede" stroke-width="0.55"/></svg><svg style="left:1023.6px;top:465.6px;" width="6" height="6" viewBox="0 0 6 6"><path d="M1.3 1.64 L4.7 1.64 L3 4.53 Z" fill="#c8c8c8"/></svg>
<div style="left:1114.2px;top:477.2px;width:6px;height:6px;background:#666666;border-radius:1px;"></div>
<div class="t" style="top:477px;line-height:8px;font-size:5.5px;color:#d8d8d8;left:1124px;">Invert</div>
<div class="t" style="top:489px;line-height:8px;font-size:5.5px;color:#d8d8d8;right:95.2px;text-align:right;">Strength</div><div style="left:1113px;top:488px;width:73.8px;height:8px;background:#565656;border-radius:2px 0 0 2px;"></div><div style="left:1113px;top:488px;width:73.8px;height:8px;background:#5680c2;border-radius:2px 0 0 2px;"></div><div class="t" style="top:489px;line-height:8px;font-size:5.5px;color:#ececec;left:1129.9px;width:40px;text-align:center;">1.000</div>
<div style="left:1187.3px;top:488px;width:8.1px;height:8px;background:#323232;border-radius:0 2px 2px 0;"></div><svg style="left:1189.4px;top:490px;" width="4" height="4" viewBox="0 0 4 4"><circle cx="2" cy="2" r="1.25" fill="none" stroke="#dedede" stroke-width="0.55"/></svg>
<div class="t" style="top:501px;line-height:8px;font-size:5.5px;color:#d8d8d8;right:95.2px;text-align:right;">Distance</div><div style="left:1113px;top:499.8px;width:73.8px;height:8px;background:#565656;border-radius:2px 0 0 2px;"></div><div class="t" style="top:501px;line-height:8px;font-size:5.5px;color:#ececec;left:1129.9px;width:40px;text-align:center;">1.000</div>
<div style="left:1187.3px;top:499.8px;width:8.1px;height:8px;background:#323232;border-radius:0 2px 2px 0;"></div><svg style="left:1189.4px;top:501.8px;" width="4" height="4" viewBox="0 0 4 4"><circle cx="2" cy="2" r="1.25" fill="none" stroke="#dedede" stroke-width="0.55"/></svg>
<div class="t" style="top:513px;line-height:8px;font-size:5.5px;color:#d8d8d8;right:95.2px;text-align:right;">Height</div><div style="left:1113px;top:511.5px;width:82.4px;height:8px;background:#30415f;border-radius:2px;"></div><div class="t" style="top:513px;line-height:8px;font-size:5.5px;color:#e0e0e0;left:1116.2px;">Material.000 Bump</div><svg style="left:1189.4px;top:513.5px;" width="4" height="4" viewBox="0 0 4 4"><circle cx="2" cy="2" r="1.25" fill="none" stroke="#dedede" stroke-width="0.55"/></svg><svg style="left:1023.8px;top:512.5px;" width="6" height="6" viewBox="0 0 6 6"><path d="M1.64 1.3 L1.64 4.7 L4.53 3 Z" fill="#c8c8c8"/></svg>
<div class="t" style="top:524px;line-height:8px;font-size:5.5px;color:#d8d8d8;right:95.2px;text-align:right;">Normal</div><div style="left:1113px;top:523.2px;width:82.4px;height:8px;background:#2b2b2b;border-radius:2px;"></div><div class="t" style="top:524px;line-height:8px;font-size:5.5px;color:#e0e0e0;left:1116.2px;">Default</div><svg style="left:1189.4px;top:525.2px;" width="4" height="4" viewBox="0 0 4 4"><circle cx="2" cy="2" r="1.25" fill="none" stroke="#dedede" stroke-width="0.55"/></svg>
<div class="t" style="top:536px;line-height:8px;font-size:5.5px;color:#d8d8d8;right:95.2px;text-align:right;">Clearcoat Normal</div><div style="left:1113px;top:534.9px;width:82.4px;height:8px;background:#2b2b2b;border-radius:2px;"></div><div class="t" style="top:536px;line-height:8px;font-size:5.5px;color:#e0e0e0;left:1116.2px;">Default</div><svg style="left:1189.4px;top:536.9px;" width="4" height="4" viewBox="0 0 4 4"><circle cx="2" cy="2" r="1.25" fill="none" stroke="#dedede" stroke-width="0.55"/></svg>
<div class="t" style="top:548px;line-height:8px;font-size:5.5px;color:#d8d8d8;right:95.2px;text-align:right;">Tangent</div><div style="left:1113px;top:546.7px;width:82.4px;height:8px;background:#2b2b2b;border-radius:2px;"></div><div class="t" style="top:548px;line-height:8px;font-size:5.5px;color:#e0e0e0;left:1116.2px;">Default</div><svg style="left:1189.4px;top:548.7px;" width="4" height="4" viewBox="0 0 4 4"><circle cx="2" cy="2" r="1.25" fill="none" stroke="#dedede" stroke-width="0.55"/></svg>
<div style="left:1021px;top:559.6px;width:179px;height:11px;background:#474747;"></div><svg style="left:1023.6px;top:562.1px;" width="6" height="6" viewBox="0 0 6 6"><path d="M1.2 1.56 L4.8 1.56 L3 4.62 Z" fill="#c8c8c8"/></svg><div class="t" style="top:562px;line-height:8px;font-size:6px;color:#e6e6e6;left:1031.2px;">Volume</div><div style="left:1192.2px;top:564.6px;width:1.2px;height:1px;background:#5c5c5c;"></div><div style="left:1194.6px;top:564.6px;width:1.2px;height:1px;background:#5c5c5c;"></div>
<div style="left:1021px;top:570.6px;width:179px;height:16px;background:#3d3d3d;"></div>
<div class="t" style="top:576px;line-height:8px;font-size:5.5px;color:#d8d8d8;right:95.2px;text-align:right;">Volume</div><div style="left:1113px;top:574.9px;width:82.4px;height:8px;background:#2b2b2b;border-radius:2px;"></div><div class="t" style="top:576px;line-height:8px;font-size:5.5px;color:#e0e0e0;left:1116.2px;">None</div><svg style="left:1189.4px;top:576.9px;" width="4" height="4" viewBox="0 0 4 4"><circle cx="2" cy="2" r="1.25" fill="none" stroke="#dedede" stroke-width="0.55"/></svg>
<div style="left:1021px;top:587.6px;width:179px;height:11px;background:#474747;"></div><svg style="left:1023.6px;top:590.1px;" width="6" height="6" viewBox="0 0 6 6"><path d="M1.2 1.56 L4.8 1.56 L3 4.62 Z" fill="#c8c8c8"/></svg><div class="t" style="top:590px;line-height:8px;font-size:6px;color:#e6e6e6;left:1031.2px;">Displacement</div><div style="left:1192.2px;top:592.6px;width:1.2px;height:1px;background:#5c5c5c;"></div><div style="left:1194.6px;top:592.6px;width:1.2px;height:1px;background:#5c5c5c;"></div>
<div style="left:1021px;top:598.6px;width:179px;height:16.2px;background:#3d3d3d;"></div>
<div class="t" style="top:604px;line-height:8px;font-size:5.5px;color:#d8d8d8;right:95.2px;text-align:right;">Displacement</div><div style="left:1113px;top:603px;width:82.4px;height:8px;background:#2b2b2b;border-radius:2px;"></div><div class="t" style="top:604px;line-height:8px;font-size:5.5px;color:#e0e0e0;left:1116.2px;">Default</div><svg style="left:1189.4px;top:605px;" width="4" height="4" viewBox="0 0 4 4"><circle cx="2" cy="2" r="1.25" fill="none" stroke="#dedede" stroke-width="0.55"/></svg>
<div style="left:1021px;top:615.8px;width:179px;height:11px;background:#474747;"></div><svg style="left:1023.6px;top:618.3px;" width="6" height="6" viewBox="0 0 6 6"><path d="M1.2 1.56 L4.8 1.56 L3 4.62 Z" fill="#c8c8c8"/></svg><div class="t" style="top:618px;line-height:8px;font-size:6px;color:#e6e6e6;left:1031.2px;">Settings</div><div style="left:1192.2px;top:620.8px;width:1.2px;height:1px;background:#5c5c5c;"></div><div style="left:1194.6px;top:620.8px;width:1.2px;height:1px;background:#5c5c5c;"></div>
<div style="left:1021px;top:626.8px;width:179px;height:37.7px;background:#3d3d3d;"></div>
<div class="t" style="top:632px;line-height:8px;font-size:5.5px;color:#d8d8d8;right:93.6px;text-align:right;">Pass Index</div>
<div style="left:1111.4px;top:631px;width:84.4px;height:8.2px;background:#565656;border-radius:2px;"></div>
<div class="t" style="top:632px;line-height:8px;font-size:5.5px;color:#ececec;left:1143.4px;width:20px;text-align:center;">0</div>
<svg style="left:1030.4px;top:646.4px;" width="6" height="6" viewBox="0 0 6 6"><path d="M1.3 1.64 L4.7 1.64 L3 4.53 Z" fill="#c8c8c8"/></svg>
<div class="t" style="top:646px;line-height:8px;font-size:5.5px;color:#e6e6e6;left:1038px;">Surface</div>
<div style="left:1021px;top:655px;width:179px;height:9.5px;background:#3a3a3a;"></div>
<div class="t" style="top:660px;line-height:8px;font-size:5.5px;color:#e0e0e0;right:15.4px;text-align:right;">Multiple Importance</div>
<div style="left:1189px;top:660.2px;width:6.2px;height:6.2px;background:#5680c2;border-radius:1px;"></div>
<svg style="left:1189px;top:660.2px;" width="6.2" height="6.2" viewBox="0 0 6.2 6.2"><path d="M1.4 3.2 L2.7 4.5 L4.9 1.7" fill="none" stroke="#ffffff" stroke-width="0.9"/></svg>
<!-- statusbar -->
<div style="left:0px;top:664.5px;width:1200px;height:1.1px;background:#1e1e1e;"></div>
<div style="left:0px;top:665.6px;width:1200px;height:9.4px;background:#2d2d2d;"></div>
<div class="t" style="top:667px;line-height:8px;font-size:5.7px;color:#9c9c9c;left:1005px;">Plane | Verts:4 | Faces:1 | Tris:2 | Objects:1/3 | Mem: 97.2 MB | v2.80.74</div>
<svg style="left:5.1px;top:667px;" width="4.8" height="6.4" viewBox="0 0 4.8 6.4"><rect x="0.4" y="0.4" width="4" height="5.6" rx="1.2" fill="none" stroke="#c4c4c4" stroke-width="0.7"/><rect x="0.5" y="0.5" width="1.6" height="2.4" fill="#d8d8d8"/></svg>
<svg style="left:132.1px;top:667px;" width="4.8" height="6.4" viewBox="0 0 4.8 6.4"><rect x="0.4" y="0.4" width="4" height="5.6" rx="1.2" fill="none" stroke="#c4c4c4" stroke-width="0.7"/><rect x="1.6" y="0.5" width="1.6" height="2.4" fill="#d8d8d8"/></svg>
<svg style="left:258.6px;top:667px;" width="4.8" height="6.4" viewBox="0 0 4.8 6.4"><rect x="0.4" y="0.4" width="4" height="5.6" rx="1.2" fill="none" stroke="#c4c4c4" stroke-width="0.7"/><rect x="2.4" y="0.5" width="1.6" height="2.4" fill="#d8d8d8"/></svg>
</div>
</body></html>
